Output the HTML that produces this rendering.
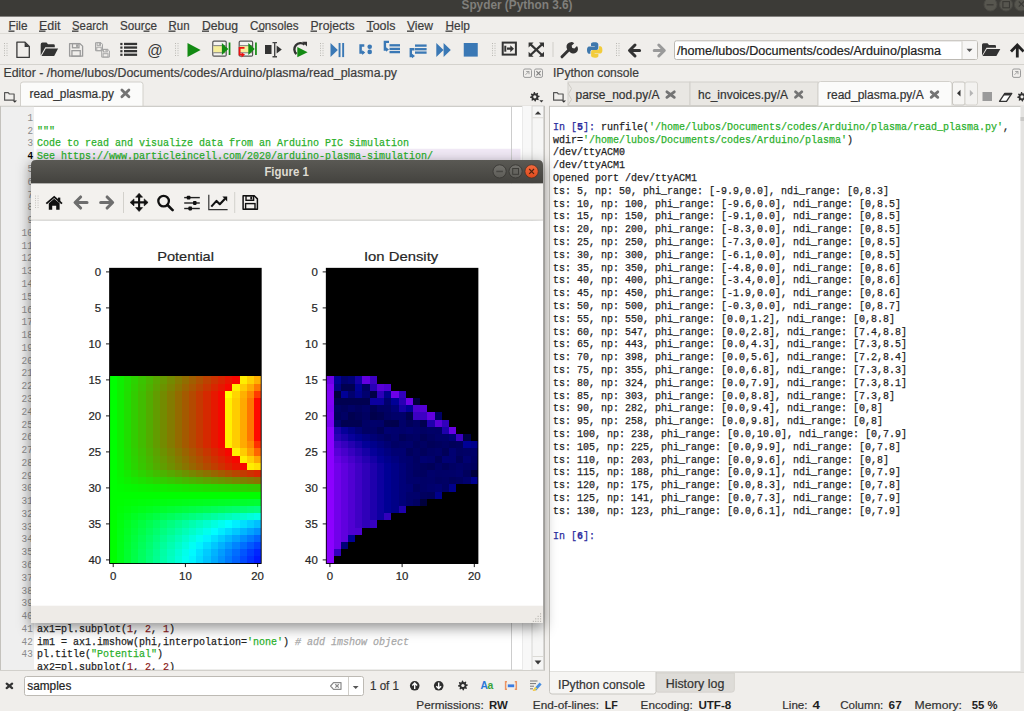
<!DOCTYPE html><html><head><meta charset="utf-8"><style>html,body{margin:0;padding:0;overflow:hidden;background:#f2f1f0}svg{display:block}text{font-family:"Liberation Sans",sans-serif;white-space:pre}</style></head><body><svg width="1024" height="711" viewBox="0 0 1024 711"><rect x="0" y="0" width="1024" height="711" fill="#f0eeeb" />
<rect x="0" y="0" width="1024" height="16.6" fill="#3c3b37" />
<text x="461.5" y="9" font-size="13" fill="#807f7b" font-weight="bold" textLength="111" lengthAdjust="spacingAndGlyphs" >Spyder (Python 3.6)</text>
<circle cx="990.5" cy="4.5" r="6.5" fill="#57564f" stroke="#4a4944" stroke-width="1"/>
<circle cx="1006" cy="4.5" r="6.5" fill="#57564f" stroke="#4a4944" stroke-width="1"/>
<circle cx="1021" cy="4.5" r="6.5" fill="#57564f" stroke="#4a4944" stroke-width="1"/>
<rect x="0" y="33" width="1024" height="1" fill="#dedcd7" />
<text x="8.5" y="29.6" font-size="12" fill="#3c3c3c" textLength="19.0" lengthAdjust="spacingAndGlyphs" stroke="#3c3c3c" stroke-width="0.2">File</text>
<text x="39" y="29.6" font-size="12" fill="#3c3c3c" textLength="21.5" lengthAdjust="spacingAndGlyphs" stroke="#3c3c3c" stroke-width="0.2">Edit</text>
<text x="72" y="29.6" font-size="12" fill="#3c3c3c" textLength="36" lengthAdjust="spacingAndGlyphs" stroke="#3c3c3c" stroke-width="0.2">Search</text>
<text x="120" y="29.6" font-size="12" fill="#3c3c3c" textLength="37" lengthAdjust="spacingAndGlyphs" stroke="#3c3c3c" stroke-width="0.2">Source</text>
<text x="168.5" y="29.6" font-size="12" fill="#3c3c3c" textLength="21.0" lengthAdjust="spacingAndGlyphs" stroke="#3c3c3c" stroke-width="0.2">Run</text>
<text x="202" y="29.6" font-size="12" fill="#3c3c3c" textLength="36" lengthAdjust="spacingAndGlyphs" stroke="#3c3c3c" stroke-width="0.2">Debug</text>
<text x="250" y="29.6" font-size="12" fill="#3c3c3c" textLength="48.5" lengthAdjust="spacingAndGlyphs" stroke="#3c3c3c" stroke-width="0.2">Consoles</text>
<text x="310.5" y="29.6" font-size="12" fill="#3c3c3c" textLength="44.0" lengthAdjust="spacingAndGlyphs" stroke="#3c3c3c" stroke-width="0.2">Projects</text>
<text x="366.5" y="29.6" font-size="12" fill="#3c3c3c" textLength="29.0" lengthAdjust="spacingAndGlyphs" stroke="#3c3c3c" stroke-width="0.2">Tools</text>
<text x="407" y="29.6" font-size="12" fill="#3c3c3c" textLength="26" lengthAdjust="spacingAndGlyphs" stroke="#3c3c3c" stroke-width="0.2">View</text>
<text x="445.5" y="29.6" font-size="12" fill="#3c3c3c" textLength="24.5" lengthAdjust="spacingAndGlyphs" stroke="#3c3c3c" stroke-width="0.2">Help</text>
<rect x="0" y="64" width="1024" height="1" fill="#d4d2cd" />
<rect x="4" y="43" width="1" height="1" fill="#bab8b3" />
<rect x="6.5" y="43" width="1" height="1" fill="#bab8b3" />
<rect x="4" y="45.4" width="1" height="1" fill="#bab8b3" />
<rect x="6.5" y="45.4" width="1" height="1" fill="#bab8b3" />
<rect x="4" y="47.8" width="1" height="1" fill="#bab8b3" />
<rect x="6.5" y="47.8" width="1" height="1" fill="#bab8b3" />
<rect x="4" y="50.199999999999996" width="1" height="1" fill="#bab8b3" />
<rect x="6.5" y="50.199999999999996" width="1" height="1" fill="#bab8b3" />
<rect x="4" y="52.599999999999994" width="1" height="1" fill="#bab8b3" />
<rect x="6.5" y="52.599999999999994" width="1" height="1" fill="#bab8b3" />
<rect x="4" y="54.99999999999999" width="1" height="1" fill="#bab8b3" />
<rect x="6.5" y="54.99999999999999" width="1" height="1" fill="#bab8b3" />
<path d="M16.9 42.2 H25 L29.3 46.5 V57.4 H16.9 Z" fill="none" stroke="#3a3a3a" stroke-width="1.3" stroke-linejoin="round"/>
<path d="M24.6 42.2 V46.9 H29.3 Z" fill="#3a3a3a"/>
<path d="M40.7 55.5 V44.5 Q40.7 42.6 42.5 42.6 H46.5 L48 44.2 H53.5 Q54.8 44.2 54.8 45.5 V47.3 H45.3 Z" fill="#333"/>
<path d="M41.5 55.9 L45.8 48.6 H58.1 L54.2 55.9 Z" fill="#333"/>
<path d="M69.6 43.6 H79.74 L82.6 46.120000000000005 V56.2 H69.6 Z" fill="none" stroke="#9b9b9b" stroke-width="1.3" stroke-linejoin="round"/>
<rect x="72.46" y="43.6" width="6.5" height="4.158" fill="none" stroke="#9b9b9b" stroke-width="1.3"/>
<rect x="76.1" y="44.356" width="1.8200000000000003" height="2.52" fill="#9b9b9b"/>
<rect x="71.94" y="50.656" width="8.32" height="5.544" fill="none" stroke="#9b9b9b" stroke-width="1.3"/>
<path d="M95.5 42.7 H100.96 L102.5 44.300000000000004 V50.7 H95.5 Z" fill="none" stroke="#a5a5a5" stroke-width="1" stroke-linejoin="round"/>
<rect x="97.04" y="42.7" width="3.5" height="2.64" fill="none" stroke="#a5a5a5" stroke-width="1"/>
<rect x="99.0" y="43.18" width="0.9800000000000001" height="1.6" fill="#a5a5a5"/>
<rect x="96.76" y="47.18000000000001" width="4.48" height="3.52" fill="none" stroke="#a5a5a5" stroke-width="1"/>
<path d="M101.7 49.4 H107.706 L109.4 50.94 V57.1 H101.7 Z" fill="none" stroke="#a5a5a5" stroke-width="1" stroke-linejoin="round"/>
<rect x="103.394" y="49.4" width="3.85" height="2.5410000000000004" fill="none" stroke="#a5a5a5" stroke-width="1"/>
<rect x="105.55" y="49.862" width="1.078" height="1.54" fill="#a5a5a5"/>
<rect x="103.086" y="53.711999999999996" width="4.928" height="3.388" fill="none" stroke="#a5a5a5" stroke-width="1"/>
<rect x="120.3" y="42.9" width="2.2" height="2.2" fill="#333" />
<rect x="124" y="42.8" width="13.1" height="2.3" fill="#333" />
<rect x="120.3" y="46.5" width="2.2" height="2.2" fill="#333" />
<rect x="124" y="46.4" width="13.1" height="2.3" fill="#333" />
<rect x="120.3" y="50.1" width="2.2" height="2.2" fill="#333" />
<rect x="124" y="50.0" width="13.1" height="2.3" fill="#333" />
<rect x="120.3" y="53.7" width="2.2" height="2.2" fill="#333" />
<rect x="124" y="53.6" width="13.1" height="2.3" fill="#333" />
<text x="147.2" y="55.5" font-size="17" fill="#3a3a3a" textLength="15.5" lengthAdjust="spacingAndGlyphs"  >@</text>
<rect x="175" y="43" width="1" height="1" fill="#bab8b3" />
<rect x="177.5" y="43" width="1" height="1" fill="#bab8b3" />
<rect x="175" y="45.4" width="1" height="1" fill="#bab8b3" />
<rect x="177.5" y="45.4" width="1" height="1" fill="#bab8b3" />
<rect x="175" y="47.8" width="1" height="1" fill="#bab8b3" />
<rect x="177.5" y="47.8" width="1" height="1" fill="#bab8b3" />
<rect x="175" y="50.199999999999996" width="1" height="1" fill="#bab8b3" />
<rect x="177.5" y="50.199999999999996" width="1" height="1" fill="#bab8b3" />
<rect x="175" y="52.599999999999994" width="1" height="1" fill="#bab8b3" />
<rect x="177.5" y="52.599999999999994" width="1" height="1" fill="#bab8b3" />
<rect x="175" y="54.99999999999999" width="1" height="1" fill="#bab8b3" />
<rect x="177.5" y="54.99999999999999" width="1" height="1" fill="#bab8b3" />
<path d="M187.5 43.1 L200.6 50 L187.5 56.9 Z" fill="#138a13"/>
<rect x="212.79999999999998" y="41.1" width="13.4" height="15" rx="1.2" fill="#f4f3f1" stroke="#555" stroke-width="1.2"/>
<rect x="213.39999999999998" y="46" width="12.2" height="6.4" fill="#f6ee9a" />
<rect x="213.39999999999998" y="45.3" width="12.2" height="0.8" fill="#666" />
<rect x="213.39999999999998" y="52.4" width="12.2" height="0.8" fill="#666" />
<path d="M221.9 43 L228.3 49 L221.9 55 Z" fill="#138a13"/>
<rect x="228.7" y="42.5" width="1.7" height="12.5" fill="#138a13" />
<rect x="239.2" y="41.1" width="13.4" height="15" rx="1.2" fill="#f4f3f1" stroke="#555" stroke-width="1.2"/>
<rect x="239.79999999999998" y="46" width="12.2" height="6.4" fill="#f6ee9a" />
<rect x="239.79999999999998" y="45.3" width="12.2" height="0.8" fill="#666" />
<rect x="239.79999999999998" y="52.4" width="12.2" height="0.8" fill="#666" />
<path d="M248.3 43 L254.7 49 L248.3 55 Z" fill="#138a13"/>
<rect x="255.1" y="42.5" width="1.7" height="12.5" fill="#138a13" />
<path d="M244.5 47.8 H239.6 V54.6 H242.3" fill="none" stroke="#ee1111" stroke-width="1.8"/>
<path d="M241.6 52.4 L245 54.6 L241.6 57.6 Z" fill="#ee1111"/>
<rect x="265" y="45" width="6.5" height="9" fill="#333" />
<path d="M272.5 42.6 H277 M274.7 42.6 V56.8 M272.5 56.8 H277" stroke="#444" stroke-width="1.4" fill="none"/>
<path d="M276.6 45.5 L281.8 49.5 L276.6 53.5 Z" fill="#333"/>
<path d="M304.6 44.6 A5.6 5.6 0 1 0 296.5 54" fill="none" stroke="#333" stroke-width="2.4"/>
<path d="M302.2 41.8 L307 41.8 L307 46.6 Z" fill="#333"/>
<path d="M297.3 47 L307.6 52.2 L297.3 57.3 Z" fill="#138a13"/>
<rect x="320" y="43" width="1" height="1" fill="#bab8b3" />
<rect x="322.5" y="43" width="1" height="1" fill="#bab8b3" />
<rect x="320" y="45.4" width="1" height="1" fill="#bab8b3" />
<rect x="322.5" y="45.4" width="1" height="1" fill="#bab8b3" />
<rect x="320" y="47.8" width="1" height="1" fill="#bab8b3" />
<rect x="322.5" y="47.8" width="1" height="1" fill="#bab8b3" />
<rect x="320" y="50.199999999999996" width="1" height="1" fill="#bab8b3" />
<rect x="322.5" y="50.199999999999996" width="1" height="1" fill="#bab8b3" />
<rect x="320" y="52.599999999999994" width="1" height="1" fill="#bab8b3" />
<rect x="322.5" y="52.599999999999994" width="1" height="1" fill="#bab8b3" />
<rect x="320" y="54.99999999999999" width="1" height="1" fill="#bab8b3" />
<rect x="322.5" y="54.99999999999999" width="1" height="1" fill="#bab8b3" />
<path d="M330.5 43 L337.8 50 L330.5 57.1 Z" fill="#3a78b5"/>
<rect x="338.6" y="43" width="1.9" height="14.1" fill="#3a78b5" />
<rect x="342.2" y="43" width="1.9" height="14.1" fill="#3a78b5" />
<path d="M364.3 45.4 H360.6 V52.4 H363.5" fill="none" stroke="#3a78b5" stroke-width="2.5"/>
<path d="M362.2 50.3 L365.2 52.6 L362.2 54.9 Z" fill="#3a78b5"/>
<circle cx="369.7" cy="46.7" r="2.3" fill="#3a78b5"/><circle cx="369.7" cy="51.9" r="2.3" fill="#3a78b5"/>
<path d="M389 41.9 H384.9 V49.5 H387" fill="none" stroke="#3a78b5" stroke-width="2.4"/>
<path d="M386 47.3 L389 49.5 L386 51.8 Z" fill="#3a78b5"/>
<rect x="389.5" y="44.15" width="10.5" height="2.3" fill="#3a78b5" />
<rect x="389.5" y="47.75" width="10.5" height="2.3" fill="#3a78b5" />
<rect x="389.5" y="50.95" width="10.5" height="2.3" fill="#3a78b5" />
<rect x="415" y="44.45" width="11.6" height="2.3" fill="#3a78b5" />
<rect x="415" y="48.050000000000004" width="11.6" height="2.3" fill="#3a78b5" />
<rect x="415" y="51.45" width="11.6" height="2.3" fill="#3a78b5" />
<path d="M414.5 49.2 H410.8 V56 H413" fill="none" stroke="#3a78b5" stroke-width="2.4"/>
<path d="M412 53.8 L415 56 L412 58.2 Z" fill="#3a78b5"/>
<path d="M436.3 43 L443.5 50 L436.3 57.1 Z M443.6 43 L450.8 50 L443.6 57.1 Z" fill="#3a78b5"/>
<rect x="463.75" y="43" width="14" height="13.6" fill="#3a78b5" />
<rect x="492" y="43" width="1" height="1" fill="#bab8b3" />
<rect x="494.5" y="43" width="1" height="1" fill="#bab8b3" />
<rect x="492" y="45.4" width="1" height="1" fill="#bab8b3" />
<rect x="494.5" y="45.4" width="1" height="1" fill="#bab8b3" />
<rect x="492" y="47.8" width="1" height="1" fill="#bab8b3" />
<rect x="494.5" y="47.8" width="1" height="1" fill="#bab8b3" />
<rect x="492" y="50.199999999999996" width="1" height="1" fill="#bab8b3" />
<rect x="494.5" y="50.199999999999996" width="1" height="1" fill="#bab8b3" />
<rect x="492" y="52.599999999999994" width="1" height="1" fill="#bab8b3" />
<rect x="494.5" y="52.599999999999994" width="1" height="1" fill="#bab8b3" />
<rect x="492" y="54.99999999999999" width="1" height="1" fill="#bab8b3" />
<rect x="494.5" y="54.99999999999999" width="1" height="1" fill="#bab8b3" />
<rect x="502.7" y="42.6" width="13.2" height="12" fill="none" stroke="#333" stroke-width="2"/>
<rect x="504.3" y="45.7" width="2" height="6" fill="#333" />
<path d="M507 47.6 H510.3 V45.2 L514 48.7 L510.3 52.2 V49.8 H507 Z" fill="#333"/>
<path d="M530.5 44.4 L542 55 M542 44.4 L530.5 55" stroke="#333" stroke-width="2.2"/>
<path d="M528.6 42.5 H533.6 L528.6 47.5 Z M544 42.5 V47.5 L539 42.5 Z M528.6 56.8 V51.8 L533.6 56.8 Z M544 56.8 H539 L544 51.8 Z" fill="#333"/>
<rect x="552.5" y="42" width="1" height="15" fill="#d0cec9" />
<path d="M562 56.8 L569.5 49.3" stroke="#333" stroke-width="3" stroke-linecap="round"/>
<path d="M568.2 50.5 A4.6 4.6 0 0 1 574.2 43.2 L571.6 45.8 L572.3 47.9 L574.4 48.6 L577 46 A4.6 4.6 0 0 1 569.6 51.8 Z" fill="#333"/>
<path d="M594.6 42.3 C590.8 42.3 591 44 591 44 V46 H594.8 V46.6 H589.4 C589.4 46.6 587 46.3 587 50.1 C587 53.9 589.1 53.8 589.1 53.8 H590.4 V52 C590.4 52 590.3 49.9 592.5 49.9 H596.2 C596.2 49.9 598.3 49.9 598.3 47.9 V44.5 C598.3 44.5 598.6 42.3 594.6 42.3 Z" fill="#3f78ad"/>
<path d="M594.8 57.7 C598.6 57.7 598.4 56 598.4 56 V54 H594.6 V53.4 H600 C600 53.4 602.4 53.7 602.4 49.9 C602.4 46.1 600.3 46.2 600.3 46.2 H599 V48 C599 48 599.1 50.1 596.9 50.1 H593.2 C593.2 50.1 591.1 50.1 591.1 52.1 V55.5 C591.1 55.5 590.8 57.7 594.8 57.7 Z" fill="#f2cc3c"/>
<rect x="616" y="43" width="1" height="1" fill="#bab8b3" />
<rect x="618.5" y="43" width="1" height="1" fill="#bab8b3" />
<rect x="616" y="45.4" width="1" height="1" fill="#bab8b3" />
<rect x="618.5" y="45.4" width="1" height="1" fill="#bab8b3" />
<rect x="616" y="47.8" width="1" height="1" fill="#bab8b3" />
<rect x="618.5" y="47.8" width="1" height="1" fill="#bab8b3" />
<rect x="616" y="50.199999999999996" width="1" height="1" fill="#bab8b3" />
<rect x="618.5" y="50.199999999999996" width="1" height="1" fill="#bab8b3" />
<rect x="616" y="52.599999999999994" width="1" height="1" fill="#bab8b3" />
<rect x="618.5" y="52.599999999999994" width="1" height="1" fill="#bab8b3" />
<rect x="616" y="54.99999999999999" width="1" height="1" fill="#bab8b3" />
<rect x="618.5" y="54.99999999999999" width="1" height="1" fill="#bab8b3" />
<path d="M639.6 50.5 H630.5 M635 45 L629.5 50.5 L635 56" fill="none" stroke="#333" stroke-width="3" stroke-linecap="round" stroke-linejoin="round"/>
<path d="M654.2 50.5 H663.3 M658.8 45 L664.3 50.5 L658.8 56" fill="none" stroke="#9a9a9a" stroke-width="3" stroke-linecap="round" stroke-linejoin="round"/>
<rect x="674.5" y="40.8" width="303" height="18.7" rx="2" fill="#ffffff" stroke="#bcb9b3" stroke-width="1"/>
<rect x="962" y="41.3" width="15" height="17.7" fill="#f7f6f5"/>
<line x1="962" y1="41.3" x2="962" y2="59" stroke="#cfcdc8"/>
<path d="M966.5 48.7 H972.5 L969.5 52 Z" fill="#555"/>
<text x="677" y="55.2" font-size="12" fill="#222222" textLength="264" lengthAdjust="spacingAndGlyphs" stroke="#222222" stroke-width="0.2">/home/lubos/Documents/codes/Arduino/plasma</text>
<path d="M982 55.5 V44.8 Q982 43.3 983.5 43.3 H987.5 L989 44.9 H994.8 Q996 44.9 996 46.1 V47.8 H986.5 Z" fill="#333"/>
<path d="M982.6 56 L986.8 49 H1000.3 L996.4 56 Z" fill="#333"/>
<path d="M1017.3 57.5 V46 M1011 51.5 L1017.3 45 L1023.6 51.5" fill="none" stroke="#222" stroke-width="2.8"/>
<text x="3.5" y="77.2" font-size="12" fill="#3c3c3c" textLength="393.5" lengthAdjust="spacingAndGlyphs" stroke="#3c3c3c" stroke-width="0.2">Editor - /home/lubos/Documents/codes/Arduino/plasma/read_plasma.py</text>
<text x="553" y="77.2" font-size="12" fill="#3c3c3c" textLength="86" lengthAdjust="spacingAndGlyphs" stroke="#3c3c3c" stroke-width="0.2">IPython console</text>
<path d="M20.5 106.3 V84.5 Q20.5 82 23 82 H140.5 Q143 82 143 84.5 V106.3" fill="#fbfbfa" stroke="#d2d0cb" stroke-width="1"/>
<text x="29.5" y="98" font-size="12" fill="#333333" textLength="84.5" lengthAdjust="spacingAndGlyphs" stroke="#333333" stroke-width="0.2">read_plasma.py</text>
<rect x="0.5" y="106.3" width="544" height="563.9" fill="#ffffff" stroke="#c4c2bd" stroke-width="1"/>
<rect x="1" y="106.8" width="33" height="563" fill="#efefef" />
<rect x="36.5" y="148.8" width="484" height="12.4" fill="#f1e9f6" />
<rect x="511" y="106" width="1" height="564" fill="#cdcdcd" />
<rect x="522.2" y="106" width="9.8" height="564" fill="#f8f8f8" />
<rect x="522.2" y="106" width="0.8" height="564" fill="#e6e6e6" />
<rect x="532" y="106" width="11.5" height="564" fill="#f6f6f5" stroke="#d0cfcc" stroke-width="0.8"/>
<text x="27.6" y="120.9" font-size="11" fill="#8b8b8b" style="font-family:'Liberation Mono'" textLength="5.6" lengthAdjust="spacingAndGlyphs" >1</text>
<text x="27.6" y="133.675" font-size="11" fill="#8b8b8b" style="font-family:'Liberation Mono'" textLength="5.6" lengthAdjust="spacingAndGlyphs" >2</text>
<text x="37" y="133.675" font-size="11" fill="#2bb02b" style="font-family:'Liberation Mono'" textLength="18" lengthAdjust="spacingAndGlyphs" stroke="#2bb02b" stroke-width="0.25">"""</text>
<text x="27.6" y="146.45000000000002" font-size="11" fill="#8b8b8b" style="font-family:'Liberation Mono'" textLength="5.6" lengthAdjust="spacingAndGlyphs" >3</text>
<text x="37" y="146.45000000000002" font-size="11" fill="#2bb02b" style="font-family:'Liberation Mono'" textLength="372" lengthAdjust="spacingAndGlyphs" stroke="#2bb02b" stroke-width="0.25">Code to read and visualize data from an Arduino PIC simulation</text>
<text x="27.6" y="159.22500000000002" font-size="11" fill="#000000" style="font-family:'Liberation Mono'" font-weight="bold" textLength="5.6" lengthAdjust="spacingAndGlyphs" >4</text>
<text x="37" y="159.22500000000002" font-size="11" fill="#2bb02b" style="font-family:'Liberation Mono'" textLength="60" lengthAdjust="spacingAndGlyphs" stroke="#2bb02b" stroke-width="0.25">See https:</text>
<text x="97" y="159.22500000000002" font-size="11" fill="#2bb02b" style="font-family:'Liberation Mono'" textLength="336" lengthAdjust="spacingAndGlyphs" stroke="#2bb02b" stroke-width="0.25">//www.particleincell.com/2020/arduino-plasma-simulation/</text>
<text x="27.6" y="172.0" font-size="11" fill="#8b8b8b" style="font-family:'Liberation Mono'" textLength="5.6" lengthAdjust="spacingAndGlyphs" >5</text>
<text x="27.6" y="184.775" font-size="11" fill="#8b8b8b" style="font-family:'Liberation Mono'" textLength="5.6" lengthAdjust="spacingAndGlyphs" >6</text>
<text x="27.6" y="197.55" font-size="11" fill="#8b8b8b" style="font-family:'Liberation Mono'" textLength="5.6" lengthAdjust="spacingAndGlyphs" >7</text>
<text x="27.6" y="210.325" font-size="11" fill="#8b8b8b" style="font-family:'Liberation Mono'" textLength="5.6" lengthAdjust="spacingAndGlyphs" >8</text>
<text x="27.6" y="223.10000000000002" font-size="11" fill="#8b8b8b" style="font-family:'Liberation Mono'" textLength="5.6" lengthAdjust="spacingAndGlyphs" >9</text>
<text x="21.6" y="235.875" font-size="11" fill="#8b8b8b" style="font-family:'Liberation Mono'" textLength="11.2" lengthAdjust="spacingAndGlyphs" >10</text>
<text x="21.6" y="248.65" font-size="11" fill="#8b8b8b" style="font-family:'Liberation Mono'" textLength="11.2" lengthAdjust="spacingAndGlyphs" >11</text>
<text x="21.6" y="261.425" font-size="11" fill="#8b8b8b" style="font-family:'Liberation Mono'" textLength="11.2" lengthAdjust="spacingAndGlyphs" >12</text>
<text x="21.6" y="274.20000000000005" font-size="11" fill="#8b8b8b" style="font-family:'Liberation Mono'" textLength="11.2" lengthAdjust="spacingAndGlyphs" >13</text>
<text x="21.6" y="286.975" font-size="11" fill="#8b8b8b" style="font-family:'Liberation Mono'" textLength="11.2" lengthAdjust="spacingAndGlyphs" >14</text>
<text x="21.6" y="299.75" font-size="11" fill="#8b8b8b" style="font-family:'Liberation Mono'" textLength="11.2" lengthAdjust="spacingAndGlyphs" >15</text>
<text x="21.6" y="312.525" font-size="11" fill="#8b8b8b" style="font-family:'Liberation Mono'" textLength="11.2" lengthAdjust="spacingAndGlyphs" >16</text>
<text x="21.6" y="325.3" font-size="11" fill="#8b8b8b" style="font-family:'Liberation Mono'" textLength="11.2" lengthAdjust="spacingAndGlyphs" >17</text>
<text x="21.6" y="338.07500000000005" font-size="11" fill="#8b8b8b" style="font-family:'Liberation Mono'" textLength="11.2" lengthAdjust="spacingAndGlyphs" >18</text>
<text x="21.6" y="350.85" font-size="11" fill="#8b8b8b" style="font-family:'Liberation Mono'" textLength="11.2" lengthAdjust="spacingAndGlyphs" >19</text>
<text x="21.6" y="363.625" font-size="11" fill="#8b8b8b" style="font-family:'Liberation Mono'" textLength="11.2" lengthAdjust="spacingAndGlyphs" >20</text>
<text x="21.6" y="376.4" font-size="11" fill="#8b8b8b" style="font-family:'Liberation Mono'" textLength="11.2" lengthAdjust="spacingAndGlyphs" >21</text>
<text x="21.6" y="389.17500000000007" font-size="11" fill="#8b8b8b" style="font-family:'Liberation Mono'" textLength="11.2" lengthAdjust="spacingAndGlyphs" >22</text>
<text x="21.6" y="401.95000000000005" font-size="11" fill="#8b8b8b" style="font-family:'Liberation Mono'" textLength="11.2" lengthAdjust="spacingAndGlyphs" >23</text>
<text x="21.6" y="414.725" font-size="11" fill="#8b8b8b" style="font-family:'Liberation Mono'" textLength="11.2" lengthAdjust="spacingAndGlyphs" >24</text>
<text x="21.6" y="427.5" font-size="11" fill="#8b8b8b" style="font-family:'Liberation Mono'" textLength="11.2" lengthAdjust="spacingAndGlyphs" >25</text>
<text x="21.6" y="440.275" font-size="11" fill="#8b8b8b" style="font-family:'Liberation Mono'" textLength="11.2" lengthAdjust="spacingAndGlyphs" >26</text>
<text x="21.6" y="453.05000000000007" font-size="11" fill="#8b8b8b" style="font-family:'Liberation Mono'" textLength="11.2" lengthAdjust="spacingAndGlyphs" >27</text>
<text x="21.6" y="465.82500000000005" font-size="11" fill="#8b8b8b" style="font-family:'Liberation Mono'" textLength="11.2" lengthAdjust="spacingAndGlyphs" >28</text>
<text x="21.6" y="478.6" font-size="11" fill="#8b8b8b" style="font-family:'Liberation Mono'" textLength="11.2" lengthAdjust="spacingAndGlyphs" >29</text>
<text x="21.6" y="491.375" font-size="11" fill="#8b8b8b" style="font-family:'Liberation Mono'" textLength="11.2" lengthAdjust="spacingAndGlyphs" >30</text>
<text x="21.6" y="504.15" font-size="11" fill="#8b8b8b" style="font-family:'Liberation Mono'" textLength="11.2" lengthAdjust="spacingAndGlyphs" >31</text>
<text x="21.6" y="516.9250000000001" font-size="11" fill="#8b8b8b" style="font-family:'Liberation Mono'" textLength="11.2" lengthAdjust="spacingAndGlyphs" >32</text>
<text x="21.6" y="529.7" font-size="11" fill="#8b8b8b" style="font-family:'Liberation Mono'" textLength="11.2" lengthAdjust="spacingAndGlyphs" >33</text>
<text x="21.6" y="542.475" font-size="11" fill="#8b8b8b" style="font-family:'Liberation Mono'" textLength="11.2" lengthAdjust="spacingAndGlyphs" >34</text>
<text x="21.6" y="555.25" font-size="11" fill="#8b8b8b" style="font-family:'Liberation Mono'" textLength="11.2" lengthAdjust="spacingAndGlyphs" >35</text>
<text x="21.6" y="568.025" font-size="11" fill="#8b8b8b" style="font-family:'Liberation Mono'" textLength="11.2" lengthAdjust="spacingAndGlyphs" >36</text>
<text x="21.6" y="580.8000000000001" font-size="11" fill="#8b8b8b" style="font-family:'Liberation Mono'" textLength="11.2" lengthAdjust="spacingAndGlyphs" >37</text>
<text x="21.6" y="593.575" font-size="11" fill="#8b8b8b" style="font-family:'Liberation Mono'" textLength="11.2" lengthAdjust="spacingAndGlyphs" >38</text>
<text x="21.6" y="606.35" font-size="11" fill="#8b8b8b" style="font-family:'Liberation Mono'" textLength="11.2" lengthAdjust="spacingAndGlyphs" >39</text>
<text x="21.6" y="619.125" font-size="11" fill="#8b8b8b" style="font-family:'Liberation Mono'" textLength="11.2" lengthAdjust="spacingAndGlyphs" >40</text>
<text x="21.6" y="631.9" font-size="11" fill="#8b8b8b" style="font-family:'Liberation Mono'" textLength="11.2" lengthAdjust="spacingAndGlyphs" >41</text>
<text x="37" y="631.9" font-size="11" fill="#222222" style="font-family:'Liberation Mono'" textLength="90" lengthAdjust="spacingAndGlyphs" stroke="#222222" stroke-width="0.25">ax1=pl.subplot(</text>
<text x="127" y="631.9" font-size="11" fill="#8b1a1a" style="font-family:'Liberation Mono'" textLength="6" lengthAdjust="spacingAndGlyphs" stroke="#8b1a1a" stroke-width="0.25">1</text>
<text x="133" y="631.9" font-size="11" fill="#222222" style="font-family:'Liberation Mono'" textLength="12" lengthAdjust="spacingAndGlyphs" stroke="#222222" stroke-width="0.25">, </text>
<text x="145" y="631.9" font-size="11" fill="#8b1a1a" style="font-family:'Liberation Mono'" textLength="6" lengthAdjust="spacingAndGlyphs" stroke="#8b1a1a" stroke-width="0.25">2</text>
<text x="151" y="631.9" font-size="11" fill="#222222" style="font-family:'Liberation Mono'" textLength="12" lengthAdjust="spacingAndGlyphs" stroke="#222222" stroke-width="0.25">, </text>
<text x="163" y="631.9" font-size="11" fill="#8b1a1a" style="font-family:'Liberation Mono'" textLength="6" lengthAdjust="spacingAndGlyphs" stroke="#8b1a1a" stroke-width="0.25">1</text>
<text x="169" y="631.9" font-size="11" fill="#222222" style="font-family:'Liberation Mono'" textLength="6" lengthAdjust="spacingAndGlyphs" stroke="#222222" stroke-width="0.25">)</text>
<text x="21.6" y="644.675" font-size="11" fill="#8b8b8b" style="font-family:'Liberation Mono'" textLength="11.2" lengthAdjust="spacingAndGlyphs" >42</text>
<text x="37" y="644.675" font-size="11" fill="#222222" style="font-family:'Liberation Mono'" textLength="210" lengthAdjust="spacingAndGlyphs" stroke="#222222" stroke-width="0.25">im1 = ax1.imshow(phi,interpolation=</text>
<text x="247" y="644.675" font-size="11" fill="#2bb02b" style="font-family:'Liberation Mono'" textLength="36" lengthAdjust="spacingAndGlyphs" stroke="#2bb02b" stroke-width="0.25">'none'</text>
<text x="283" y="644.675" font-size="11" fill="#222222" style="font-family:'Liberation Mono'" textLength="12" lengthAdjust="spacingAndGlyphs" stroke="#222222" stroke-width="0.25">) </text>
<text x="295" y="644.675" font-size="11" fill="#a8a8a8" style="font-family:'Liberation Mono'" font-style="italic" textLength="114" lengthAdjust="spacingAndGlyphs" stroke="#a8a8a8" stroke-width="0.25"># add imshow object</text>
<text x="21.6" y="657.45" font-size="11" fill="#8b8b8b" style="font-family:'Liberation Mono'" textLength="11.2" lengthAdjust="spacingAndGlyphs" >43</text>
<text x="37" y="657.45" font-size="11" fill="#222222" style="font-family:'Liberation Mono'" textLength="54" lengthAdjust="spacingAndGlyphs" stroke="#222222" stroke-width="0.25">pl.title(</text>
<text x="91" y="657.45" font-size="11" fill="#2bb02b" style="font-family:'Liberation Mono'" textLength="66" lengthAdjust="spacingAndGlyphs" stroke="#2bb02b" stroke-width="0.25">"Potential"</text>
<text x="157" y="657.45" font-size="11" fill="#222222" style="font-family:'Liberation Mono'" textLength="6" lengthAdjust="spacingAndGlyphs" stroke="#222222" stroke-width="0.25">)</text>
<clipPath id="edclip"><rect x="0" y="106" width="544" height="564"/></clipPath>
<g clip-path="url(#edclip)">
<text x="37" y="670.225" font-size="11" fill="#222222" style="font-family:'Liberation Mono'" textLength="90" lengthAdjust="spacingAndGlyphs" stroke="#222222" stroke-width="0.25">ax2=pl.subplot(</text>
<text x="127" y="670.225" font-size="11" fill="#8b1a1a" style="font-family:'Liberation Mono'" textLength="6" lengthAdjust="spacingAndGlyphs" stroke="#8b1a1a" stroke-width="0.25">1</text>
<text x="133" y="670.225" font-size="11" fill="#222222" style="font-family:'Liberation Mono'" textLength="12" lengthAdjust="spacingAndGlyphs" stroke="#222222" stroke-width="0.25">, </text>
<text x="145" y="670.225" font-size="11" fill="#8b1a1a" style="font-family:'Liberation Mono'" textLength="6" lengthAdjust="spacingAndGlyphs" stroke="#8b1a1a" stroke-width="0.25">2</text>
<text x="151" y="670.225" font-size="11" fill="#222222" style="font-family:'Liberation Mono'" textLength="12" lengthAdjust="spacingAndGlyphs" stroke="#222222" stroke-width="0.25">, </text>
<text x="163" y="670.225" font-size="11" fill="#8b1a1a" style="font-family:'Liberation Mono'" textLength="6" lengthAdjust="spacingAndGlyphs" stroke="#8b1a1a" stroke-width="0.25">2</text>
<text x="169" y="670.225" font-size="11" fill="#222222" style="font-family:'Liberation Mono'" textLength="6" lengthAdjust="spacingAndGlyphs" stroke="#222222" stroke-width="0.25">)</text>
</g>
<text x="553" y="77.2" font-size="12" fill="#3c3c3c" stroke="#3c3c3c" stroke-width="0.2"></text>
<rect x="568" y="82" width="122" height="23.5" fill="#e9e7e3" stroke="#d2d0cb" stroke-width="1"/>
<rect x="690" y="82" width="128" height="23.5" fill="#e9e7e3" stroke="#d2d0cb" stroke-width="1"/>
<path d="M818 105.5 V84 Q818 81.5 820.5 81.5 H949.5 Q952 81.5 952 84 V105.5" fill="#fbfbfa" stroke="#d2d0cb" stroke-width="1"/>
<text x="575.5" y="98.5" font-size="12" fill="#333333" textLength="84" lengthAdjust="spacingAndGlyphs" stroke="#333333" stroke-width="0.2">parse_nod.py/A</text>
<text x="698" y="98.5" font-size="12" fill="#333333" textLength="90" lengthAdjust="spacingAndGlyphs" stroke="#333333" stroke-width="0.2">hc_invoices.py/A</text>
<text x="827" y="98.5" font-size="12" fill="#333333" textLength="96.7" lengthAdjust="spacingAndGlyphs" stroke="#333333" stroke-width="0.2">read_plasma.py/A</text>
<rect x="549.5" y="106.3" width="474" height="565.7" fill="#ffffff" stroke="#c4c2bd" stroke-width="1"/>
<text x="553" y="129.8" font-size="11" fill="#2b2b9e" style="font-family:'Liberation Mono'" textLength="24" lengthAdjust="spacingAndGlyphs" stroke="#2b2b9e" stroke-width="0.25">In [</text>
<text x="577" y="129.8" font-size="11" fill="#2b2b9e" style="font-family:'Liberation Mono'" font-weight="bold" textLength="6" lengthAdjust="spacingAndGlyphs" stroke="#2b2b9e" stroke-width="0.25">5</text>
<text x="583" y="129.8" font-size="11" fill="#2b2b9e" style="font-family:'Liberation Mono'" textLength="18" lengthAdjust="spacingAndGlyphs" stroke="#2b2b9e" stroke-width="0.25">]: </text>
<text x="601" y="129.8" font-size="11" fill="#1e1e1e" style="font-family:'Liberation Mono'" textLength="48" lengthAdjust="spacingAndGlyphs" stroke="#1e1e1e" stroke-width="0.25">runfile(</text>
<text x="649" y="129.8" font-size="11" fill="#2bb02b" style="font-family:'Liberation Mono'" textLength="354" lengthAdjust="spacingAndGlyphs" stroke="#2bb02b" stroke-width="0.25">'/home/lubos/Documents/codes/Arduino/plasma/read_plasma.py'</text>
<text x="1003" y="129.8" font-size="11" fill="#1e1e1e" style="font-family:'Liberation Mono'" textLength="6" lengthAdjust="spacingAndGlyphs" stroke="#1e1e1e" stroke-width="0.25">,</text>
<text x="553" y="142.60000000000002" font-size="11" fill="#1e1e1e" style="font-family:'Liberation Mono'" textLength="30" lengthAdjust="spacingAndGlyphs" stroke="#1e1e1e" stroke-width="0.25">wdir=</text>
<text x="583" y="142.60000000000002" font-size="11" fill="#2bb02b" style="font-family:'Liberation Mono'" textLength="264" lengthAdjust="spacingAndGlyphs" stroke="#2bb02b" stroke-width="0.25">'/home/lubos/Documents/codes/Arduino/plasma'</text>
<text x="847" y="142.60000000000002" font-size="11" fill="#1e1e1e" style="font-family:'Liberation Mono'" textLength="6" lengthAdjust="spacingAndGlyphs" stroke="#1e1e1e" stroke-width="0.25">)</text>
<text x="553" y="155.4" font-size="11" fill="#1e1e1e" style="font-family:'Liberation Mono'" textLength="72" lengthAdjust="spacingAndGlyphs" stroke="#1e1e1e" stroke-width="0.25">/dev/ttyACM0</text>
<text x="553" y="168.20000000000002" font-size="11" fill="#1e1e1e" style="font-family:'Liberation Mono'" textLength="72" lengthAdjust="spacingAndGlyphs" stroke="#1e1e1e" stroke-width="0.25">/dev/ttyACM1</text>
<text x="553" y="181.0" font-size="11" fill="#1e1e1e" style="font-family:'Liberation Mono'" textLength="144" lengthAdjust="spacingAndGlyphs" stroke="#1e1e1e" stroke-width="0.25">Opened port /dev/ttyACM1</text>
<text x="553" y="193.8" font-size="11" fill="#1e1e1e" style="font-family:'Liberation Mono'" textLength="336" lengthAdjust="spacingAndGlyphs" stroke="#1e1e1e" stroke-width="0.25">ts: 5, np: 50, phi_range: [-9.9,0.0], ndi_range: [0,8.3]</text>
<text x="553" y="206.60000000000002" font-size="11" fill="#1e1e1e" style="font-family:'Liberation Mono'" textLength="348" lengthAdjust="spacingAndGlyphs" stroke="#1e1e1e" stroke-width="0.25">ts: 10, np: 100, phi_range: [-9.6,0.0], ndi_range: [0,8.5]</text>
<text x="553" y="219.40000000000003" font-size="11" fill="#1e1e1e" style="font-family:'Liberation Mono'" textLength="348" lengthAdjust="spacingAndGlyphs" stroke="#1e1e1e" stroke-width="0.25">ts: 15, np: 150, phi_range: [-9.1,0.0], ndi_range: [0,8.5]</text>
<text x="553" y="232.20000000000002" font-size="11" fill="#1e1e1e" style="font-family:'Liberation Mono'" textLength="348" lengthAdjust="spacingAndGlyphs" stroke="#1e1e1e" stroke-width="0.25">ts: 20, np: 200, phi_range: [-8.3,0.0], ndi_range: [0,8.5]</text>
<text x="553" y="245.0" font-size="11" fill="#1e1e1e" style="font-family:'Liberation Mono'" textLength="348" lengthAdjust="spacingAndGlyphs" stroke="#1e1e1e" stroke-width="0.25">ts: 25, np: 250, phi_range: [-7.3,0.0], ndi_range: [0,8.5]</text>
<text x="553" y="257.8" font-size="11" fill="#1e1e1e" style="font-family:'Liberation Mono'" textLength="348" lengthAdjust="spacingAndGlyphs" stroke="#1e1e1e" stroke-width="0.25">ts: 30, np: 300, phi_range: [-6.1,0.0], ndi_range: [0,8.5]</text>
<text x="553" y="270.6" font-size="11" fill="#1e1e1e" style="font-family:'Liberation Mono'" textLength="348" lengthAdjust="spacingAndGlyphs" stroke="#1e1e1e" stroke-width="0.25">ts: 35, np: 350, phi_range: [-4.8,0.0], ndi_range: [0,8.6]</text>
<text x="553" y="283.40000000000003" font-size="11" fill="#1e1e1e" style="font-family:'Liberation Mono'" textLength="348" lengthAdjust="spacingAndGlyphs" stroke="#1e1e1e" stroke-width="0.25">ts: 40, np: 400, phi_range: [-3.4,0.0], ndi_range: [0,8.6]</text>
<text x="553" y="296.20000000000005" font-size="11" fill="#1e1e1e" style="font-family:'Liberation Mono'" textLength="348" lengthAdjust="spacingAndGlyphs" stroke="#1e1e1e" stroke-width="0.25">ts: 45, np: 450, phi_range: [-1.9,0.0], ndi_range: [0,8.6]</text>
<text x="553" y="309.0" font-size="11" fill="#1e1e1e" style="font-family:'Liberation Mono'" textLength="348" lengthAdjust="spacingAndGlyphs" stroke="#1e1e1e" stroke-width="0.25">ts: 50, np: 500, phi_range: [-0.3,0.0], ndi_range: [0,8.7]</text>
<text x="553" y="321.8" font-size="11" fill="#1e1e1e" style="font-family:'Liberation Mono'" textLength="342" lengthAdjust="spacingAndGlyphs" stroke="#1e1e1e" stroke-width="0.25">ts: 55, np: 550, phi_range: [0.0,1.2], ndi_range: [0,8.8]</text>
<text x="553" y="334.6" font-size="11" fill="#1e1e1e" style="font-family:'Liberation Mono'" textLength="354" lengthAdjust="spacingAndGlyphs" stroke="#1e1e1e" stroke-width="0.25">ts: 60, np: 547, phi_range: [0.0,2.8], ndi_range: [7.4,8.8]</text>
<text x="553" y="347.40000000000003" font-size="11" fill="#1e1e1e" style="font-family:'Liberation Mono'" textLength="354" lengthAdjust="spacingAndGlyphs" stroke="#1e1e1e" stroke-width="0.25">ts: 65, np: 443, phi_range: [0.0,4.3], ndi_range: [7.3,8.5]</text>
<text x="553" y="360.20000000000005" font-size="11" fill="#1e1e1e" style="font-family:'Liberation Mono'" textLength="354" lengthAdjust="spacingAndGlyphs" stroke="#1e1e1e" stroke-width="0.25">ts: 70, np: 398, phi_range: [0.0,5.6], ndi_range: [7.2,8.4]</text>
<text x="553" y="373.0" font-size="11" fill="#1e1e1e" style="font-family:'Liberation Mono'" textLength="354" lengthAdjust="spacingAndGlyphs" stroke="#1e1e1e" stroke-width="0.25">ts: 75, np: 355, phi_range: [0.0,6.8], ndi_range: [7.3,8.3]</text>
<text x="553" y="385.8" font-size="11" fill="#1e1e1e" style="font-family:'Liberation Mono'" textLength="354" lengthAdjust="spacingAndGlyphs" stroke="#1e1e1e" stroke-width="0.25">ts: 80, np: 324, phi_range: [0.0,7.9], ndi_range: [7.3,8.1]</text>
<text x="553" y="398.6" font-size="11" fill="#1e1e1e" style="font-family:'Liberation Mono'" textLength="342" lengthAdjust="spacingAndGlyphs" stroke="#1e1e1e" stroke-width="0.25">ts: 85, np: 303, phi_range: [0.0,8.8], ndi_range: [7.3,8]</text>
<text x="553" y="411.40000000000003" font-size="11" fill="#1e1e1e" style="font-family:'Liberation Mono'" textLength="330" lengthAdjust="spacingAndGlyphs" stroke="#1e1e1e" stroke-width="0.25">ts: 90, np: 282, phi_range: [0.0,9.4], ndi_range: [0,8]</text>
<text x="553" y="424.20000000000005" font-size="11" fill="#1e1e1e" style="font-family:'Liberation Mono'" textLength="330" lengthAdjust="spacingAndGlyphs" stroke="#1e1e1e" stroke-width="0.25">ts: 95, np: 258, phi_range: [0.0,9.8], ndi_range: [0,8]</text>
<text x="553" y="437.00000000000006" font-size="11" fill="#1e1e1e" style="font-family:'Liberation Mono'" textLength="354" lengthAdjust="spacingAndGlyphs" stroke="#1e1e1e" stroke-width="0.25">ts: 100, np: 238, phi_range: [0.0,10.0], ndi_range: [0,7.9]</text>
<text x="553" y="449.8" font-size="11" fill="#1e1e1e" style="font-family:'Liberation Mono'" textLength="348" lengthAdjust="spacingAndGlyphs" stroke="#1e1e1e" stroke-width="0.25">ts: 105, np: 225, phi_range: [0.0,9.9], ndi_range: [0,7.8]</text>
<text x="553" y="462.6" font-size="11" fill="#1e1e1e" style="font-family:'Liberation Mono'" textLength="336" lengthAdjust="spacingAndGlyphs" stroke="#1e1e1e" stroke-width="0.25">ts: 110, np: 203, phi_range: [0.0,9.6], ndi_range: [0,8]</text>
<text x="553" y="475.40000000000003" font-size="11" fill="#1e1e1e" style="font-family:'Liberation Mono'" textLength="348" lengthAdjust="spacingAndGlyphs" stroke="#1e1e1e" stroke-width="0.25">ts: 115, np: 188, phi_range: [0.0,9.1], ndi_range: [0,7.9]</text>
<text x="553" y="488.20000000000005" font-size="11" fill="#1e1e1e" style="font-family:'Liberation Mono'" textLength="348" lengthAdjust="spacingAndGlyphs" stroke="#1e1e1e" stroke-width="0.25">ts: 120, np: 175, phi_range: [0.0,8.3], ndi_range: [0,7.8]</text>
<text x="553" y="501.00000000000006" font-size="11" fill="#1e1e1e" style="font-family:'Liberation Mono'" textLength="348" lengthAdjust="spacingAndGlyphs" stroke="#1e1e1e" stroke-width="0.25">ts: 125, np: 141, phi_range: [0.0,7.3], ndi_range: [0,7.9]</text>
<text x="553" y="513.8" font-size="11" fill="#1e1e1e" style="font-family:'Liberation Mono'" textLength="348" lengthAdjust="spacingAndGlyphs" stroke="#1e1e1e" stroke-width="0.25">ts: 130, np: 123, phi_range: [0.0,6.1], ndi_range: [0,7.9]</text>
<text x="553" y="539.4000000000001" font-size="11" fill="#2b2b9e" style="font-family:'Liberation Mono'" textLength="24" lengthAdjust="spacingAndGlyphs" stroke="#2b2b9e" stroke-width="0.25">In [</text>
<text x="577" y="539.4000000000001" font-size="11" fill="#2b2b9e" style="font-family:'Liberation Mono'" font-weight="bold" textLength="6" lengthAdjust="spacingAndGlyphs" stroke="#2b2b9e" stroke-width="0.25">6</text>
<text x="583" y="539.4000000000001" font-size="11" fill="#2b2b9e" style="font-family:'Liberation Mono'" textLength="12" lengthAdjust="spacingAndGlyphs" stroke="#2b2b9e" stroke-width="0.25">]:</text>
<rect x="1020.5" y="106" width="3.5" height="566" fill="#e4e3e1" />
<rect x="1020.5" y="117" width="3.5" height="4" fill="#c9c8c6" />
<path d="M655.5 673 V689.5 Q655.5 692.2 658 692.2 H731.5 Q734.4 692.2 734.4 689.5 V673 Z" fill="#dedcd8" stroke="#d3d1cc" stroke-width="0.8"/>
<path d="M549.5 672 V691.5 Q549.5 694 552 694 H653.5 Q656 694 656 691.5 V672" fill="#f6f5f3" stroke="#c8c6c1" stroke-width="1"/>
<text x="558" y="688.5" font-size="12" fill="#333333" textLength="87" lengthAdjust="spacingAndGlyphs" stroke="#333333" stroke-width="0.2">IPython console</text>
<text x="665.7" y="688" font-size="12" fill="#333333" textLength="58.6" lengthAdjust="spacingAndGlyphs" stroke="#333333" stroke-width="0.2">History log</text>
<rect x="24.5" y="676.5" width="339" height="19" rx="2" fill="#ffffff" stroke="#bdbab4" stroke-width="1"/>
<text x="27.3" y="690.3" font-size="12" fill="#222222" textLength="44" lengthAdjust="spacingAndGlyphs" stroke="#222222" stroke-width="0.2">samples</text>
<line x1="348.5" y1="677" x2="348.5" y2="695" stroke="#d0cec9"/>
<text x="370" y="690.3" font-size="12" fill="#333333" textLength="29" lengthAdjust="spacingAndGlyphs" stroke="#333333" stroke-width="0.2">1 of 1</text>
<text x="416.3" y="708.7" font-size="11.5" fill="#333333" textLength="67.44999999999999" lengthAdjust="spacingAndGlyphs" stroke="#333333" stroke-width="0.2">Permissions:</text>
<text x="489" y="708.7" font-size="11.5" fill="#1f1f1f" font-weight="bold" textLength="18.80000000000001" lengthAdjust="spacingAndGlyphs" >RW</text>
<text x="532.8" y="708.7" font-size="11.5" fill="#333333" textLength="66.20000000000005" lengthAdjust="spacingAndGlyphs" stroke="#333333" stroke-width="0.2">End-of-lines:</text>
<text x="604.7" y="708.7" font-size="11.5" fill="#1f1f1f" font-weight="bold" textLength="13.099999999999909" lengthAdjust="spacingAndGlyphs" >LF</text>
<text x="640.6" y="708.7" font-size="11.5" fill="#333333" textLength="52.19999999999993" lengthAdjust="spacingAndGlyphs" stroke="#333333" stroke-width="0.2">Encoding:</text>
<text x="698.4" y="708.7" font-size="11.5" fill="#1f1f1f" font-weight="bold" textLength="32.89999999999998" lengthAdjust="spacingAndGlyphs" >UTF-8</text>
<text x="782.3" y="708.7" font-size="11.5" fill="#333333" textLength="25.300000000000068" lengthAdjust="spacingAndGlyphs" stroke="#333333" stroke-width="0.2">Line:</text>
<text x="812.6" y="708.7" font-size="11.5" fill="#1f1f1f" font-weight="bold" textLength="7.399999999999977" lengthAdjust="spacingAndGlyphs" >4</text>
<text x="840.2" y="708.7" font-size="11.5" fill="#333333" textLength="43.09999999999991" lengthAdjust="spacingAndGlyphs" stroke="#333333" stroke-width="0.2">Column:</text>
<text x="888.6" y="708.7" font-size="11.5" fill="#1f1f1f" font-weight="bold" textLength="13.100000000000023" lengthAdjust="spacingAndGlyphs" >67</text>
<text x="914.5" y="708.7" font-size="11.5" fill="#333333" textLength="47.5" lengthAdjust="spacingAndGlyphs" stroke="#333333" stroke-width="0.2">Memory:</text>
<text x="971.8" y="708.7" font-size="11.5" fill="#1f1f1f" font-weight="bold" textLength="25.800000000000068" lengthAdjust="spacingAndGlyphs" >55 %</text>
<defs><filter id="sh" x="-20%" y="-20%" width="140%" height="140%"><feGaussianBlur stdDeviation="6.5"/></filter><linearGradient id="tbg" x1="0" y1="0" x2="0" y2="1"><stop offset="0" stop-color="#5a5954"/><stop offset="1" stop-color="#43423e"/></linearGradient></defs>
<rect x="30" y="163" width="514" height="465" fill="rgba(0,0,0,0.42)" filter="url(#sh)"/>
<path d="M31 183.5 V165 Q31 160 36 160 H538 Q543 160 543 165 V183.5 Z" fill="url(#tbg)"/>
<rect x="31" y="183.5" width="512" height="36.5" fill="#f3f1ee" />
<rect x="31" y="219.5" width="512" height="1" fill="#d9d7d2" />
<rect x="31" y="600" width="512" height="23" fill="#eeebe7" />
<rect x="31" y="220.5" width="512" height="385.2" fill="#ffffff" />
<rect x="540" y="613.3" width="1.1" height="1.1" fill="#b3b1ac" />
<rect x="537.6" y="615.8" width="1.1" height="1.1" fill="#b3b1ac" />
<rect x="540" y="615.8" width="1.1" height="1.1" fill="#b3b1ac" />
<rect x="535.2" y="618.3" width="1.1" height="1.1" fill="#b3b1ac" />
<rect x="537.6" y="618.3" width="1.1" height="1.1" fill="#b3b1ac" />
<rect x="540" y="618.3" width="1.1" height="1.1" fill="#b3b1ac" />
<rect x="532.8" y="620.8" width="1.1" height="1.1" fill="#b3b1ac" />
<rect x="535.2" y="620.8" width="1.1" height="1.1" fill="#b3b1ac" />
<rect x="537.6" y="620.8" width="1.1" height="1.1" fill="#b3b1ac" />
<rect x="540" y="620.8" width="1.1" height="1.1" fill="#b3b1ac" />
<text x="264.4" y="175.6" font-size="12" fill="#dfdbd2" font-weight="bold" textLength="44.4" lengthAdjust="spacingAndGlyphs" >Figure 1</text>
<defs><linearGradient id="bg1" x1="0" y1="0" x2="0" y2="1"><stop offset="0" stop-color="#73726d"/><stop offset="1" stop-color="#5c5b56"/></linearGradient><linearGradient id="bg2" x1="0" y1="0" x2="0" y2="1"><stop offset="0" stop-color="#f46a3e"/><stop offset="1" stop-color="#dc4a1c"/></linearGradient></defs>
<circle cx="499.6" cy="171.4" r="6.6" fill="url(#bg1)" stroke="#393834" stroke-width="0.9"/>
<rect x="496.3" y="170.7" width="6.6" height="1.5" fill="#484743"/>
<circle cx="515.6" cy="171.4" r="6.6" fill="url(#bg1)" stroke="#393834" stroke-width="0.9"/>
<rect x="512.7" y="168.5" width="5.8" height="5.8" fill="#64635e" stroke="#3e3d39" stroke-width="1"/>
<circle cx="531.6" cy="171.4" r="6.6" fill="url(#bg2)" stroke="#3a2a22" stroke-width="0.6"/>
<path d="M529.2 169 L534 173.8 M534 169 L529.2 173.8" stroke="#4a2412" stroke-width="1.1"/>
<g shape-rendering="crispEdges">
<rect x="109.60" y="268.30" width="7.35" height="7.3" fill="#000000"/>
<rect x="116.82" y="268.30" width="7.35" height="7.3" fill="#000000"/>
<rect x="124.04" y="268.30" width="7.35" height="7.3" fill="#000000"/>
<rect x="131.26" y="268.30" width="7.35" height="7.3" fill="#000000"/>
<rect x="138.48" y="268.30" width="7.35" height="7.3" fill="#000000"/>
<rect x="145.70" y="268.30" width="7.35" height="7.3" fill="#000000"/>
<rect x="152.92" y="268.30" width="7.35" height="7.3" fill="#000000"/>
<rect x="160.14" y="268.30" width="7.35" height="7.3" fill="#000000"/>
<rect x="167.36" y="268.30" width="7.35" height="7.3" fill="#000000"/>
<rect x="174.58" y="268.30" width="7.35" height="7.3" fill="#000000"/>
<rect x="181.80" y="268.30" width="7.35" height="7.3" fill="#000000"/>
<rect x="189.02" y="268.30" width="7.35" height="7.3" fill="#000000"/>
<rect x="196.24" y="268.30" width="7.35" height="7.3" fill="#000000"/>
<rect x="203.46" y="268.30" width="7.35" height="7.3" fill="#000000"/>
<rect x="210.68" y="268.30" width="7.35" height="7.3" fill="#000000"/>
<rect x="217.90" y="268.30" width="7.35" height="7.3" fill="#000000"/>
<rect x="225.12" y="268.30" width="7.35" height="7.3" fill="#000000"/>
<rect x="232.34" y="268.30" width="7.35" height="7.3" fill="#000000"/>
<rect x="239.56" y="268.30" width="7.35" height="7.3" fill="#000000"/>
<rect x="246.78" y="268.30" width="7.35" height="7.3" fill="#000000"/>
<rect x="254.00" y="268.30" width="7.35" height="7.3" fill="#000000"/>
<rect x="109.60" y="275.50" width="7.35" height="7.3" fill="#000000"/>
<rect x="116.82" y="275.50" width="7.35" height="7.3" fill="#000000"/>
<rect x="124.04" y="275.50" width="7.35" height="7.3" fill="#000000"/>
<rect x="131.26" y="275.50" width="7.35" height="7.3" fill="#000000"/>
<rect x="138.48" y="275.50" width="7.35" height="7.3" fill="#000000"/>
<rect x="145.70" y="275.50" width="7.35" height="7.3" fill="#000000"/>
<rect x="152.92" y="275.50" width="7.35" height="7.3" fill="#000000"/>
<rect x="160.14" y="275.50" width="7.35" height="7.3" fill="#000000"/>
<rect x="167.36" y="275.50" width="7.35" height="7.3" fill="#000000"/>
<rect x="174.58" y="275.50" width="7.35" height="7.3" fill="#000000"/>
<rect x="181.80" y="275.50" width="7.35" height="7.3" fill="#000000"/>
<rect x="189.02" y="275.50" width="7.35" height="7.3" fill="#000000"/>
<rect x="196.24" y="275.50" width="7.35" height="7.3" fill="#000000"/>
<rect x="203.46" y="275.50" width="7.35" height="7.3" fill="#000000"/>
<rect x="210.68" y="275.50" width="7.35" height="7.3" fill="#000000"/>
<rect x="217.90" y="275.50" width="7.35" height="7.3" fill="#000000"/>
<rect x="225.12" y="275.50" width="7.35" height="7.3" fill="#000000"/>
<rect x="232.34" y="275.50" width="7.35" height="7.3" fill="#000000"/>
<rect x="239.56" y="275.50" width="7.35" height="7.3" fill="#000000"/>
<rect x="246.78" y="275.50" width="7.35" height="7.3" fill="#000000"/>
<rect x="254.00" y="275.50" width="7.35" height="7.3" fill="#000000"/>
<rect x="109.60" y="282.70" width="7.35" height="7.3" fill="#000000"/>
<rect x="116.82" y="282.70" width="7.35" height="7.3" fill="#000000"/>
<rect x="124.04" y="282.70" width="7.35" height="7.3" fill="#000000"/>
<rect x="131.26" y="282.70" width="7.35" height="7.3" fill="#000000"/>
<rect x="138.48" y="282.70" width="7.35" height="7.3" fill="#000000"/>
<rect x="145.70" y="282.70" width="7.35" height="7.3" fill="#000000"/>
<rect x="152.92" y="282.70" width="7.35" height="7.3" fill="#000000"/>
<rect x="160.14" y="282.70" width="7.35" height="7.3" fill="#000000"/>
<rect x="167.36" y="282.70" width="7.35" height="7.3" fill="#000000"/>
<rect x="174.58" y="282.70" width="7.35" height="7.3" fill="#000000"/>
<rect x="181.80" y="282.70" width="7.35" height="7.3" fill="#000000"/>
<rect x="189.02" y="282.70" width="7.35" height="7.3" fill="#000000"/>
<rect x="196.24" y="282.70" width="7.35" height="7.3" fill="#000000"/>
<rect x="203.46" y="282.70" width="7.35" height="7.3" fill="#000000"/>
<rect x="210.68" y="282.70" width="7.35" height="7.3" fill="#000000"/>
<rect x="217.90" y="282.70" width="7.35" height="7.3" fill="#000000"/>
<rect x="225.12" y="282.70" width="7.35" height="7.3" fill="#000000"/>
<rect x="232.34" y="282.70" width="7.35" height="7.3" fill="#000000"/>
<rect x="239.56" y="282.70" width="7.35" height="7.3" fill="#000000"/>
<rect x="246.78" y="282.70" width="7.35" height="7.3" fill="#000000"/>
<rect x="254.00" y="282.70" width="7.35" height="7.3" fill="#000000"/>
<rect x="109.60" y="289.90" width="7.35" height="7.3" fill="#000000"/>
<rect x="116.82" y="289.90" width="7.35" height="7.3" fill="#000000"/>
<rect x="124.04" y="289.90" width="7.35" height="7.3" fill="#000000"/>
<rect x="131.26" y="289.90" width="7.35" height="7.3" fill="#000000"/>
<rect x="138.48" y="289.90" width="7.35" height="7.3" fill="#000000"/>
<rect x="145.70" y="289.90" width="7.35" height="7.3" fill="#000000"/>
<rect x="152.92" y="289.90" width="7.35" height="7.3" fill="#000000"/>
<rect x="160.14" y="289.90" width="7.35" height="7.3" fill="#000000"/>
<rect x="167.36" y="289.90" width="7.35" height="7.3" fill="#000000"/>
<rect x="174.58" y="289.90" width="7.35" height="7.3" fill="#000000"/>
<rect x="181.80" y="289.90" width="7.35" height="7.3" fill="#000000"/>
<rect x="189.02" y="289.90" width="7.35" height="7.3" fill="#000000"/>
<rect x="196.24" y="289.90" width="7.35" height="7.3" fill="#000000"/>
<rect x="203.46" y="289.90" width="7.35" height="7.3" fill="#000000"/>
<rect x="210.68" y="289.90" width="7.35" height="7.3" fill="#000000"/>
<rect x="217.90" y="289.90" width="7.35" height="7.3" fill="#000000"/>
<rect x="225.12" y="289.90" width="7.35" height="7.3" fill="#000000"/>
<rect x="232.34" y="289.90" width="7.35" height="7.3" fill="#000000"/>
<rect x="239.56" y="289.90" width="7.35" height="7.3" fill="#000000"/>
<rect x="246.78" y="289.90" width="7.35" height="7.3" fill="#000000"/>
<rect x="254.00" y="289.90" width="7.35" height="7.3" fill="#000000"/>
<rect x="109.60" y="297.10" width="7.35" height="7.3" fill="#000000"/>
<rect x="116.82" y="297.10" width="7.35" height="7.3" fill="#000000"/>
<rect x="124.04" y="297.10" width="7.35" height="7.3" fill="#000000"/>
<rect x="131.26" y="297.10" width="7.35" height="7.3" fill="#000000"/>
<rect x="138.48" y="297.10" width="7.35" height="7.3" fill="#000000"/>
<rect x="145.70" y="297.10" width="7.35" height="7.3" fill="#000000"/>
<rect x="152.92" y="297.10" width="7.35" height="7.3" fill="#000000"/>
<rect x="160.14" y="297.10" width="7.35" height="7.3" fill="#000000"/>
<rect x="167.36" y="297.10" width="7.35" height="7.3" fill="#000000"/>
<rect x="174.58" y="297.10" width="7.35" height="7.3" fill="#000000"/>
<rect x="181.80" y="297.10" width="7.35" height="7.3" fill="#000000"/>
<rect x="189.02" y="297.10" width="7.35" height="7.3" fill="#000000"/>
<rect x="196.24" y="297.10" width="7.35" height="7.3" fill="#000000"/>
<rect x="203.46" y="297.10" width="7.35" height="7.3" fill="#000000"/>
<rect x="210.68" y="297.10" width="7.35" height="7.3" fill="#000000"/>
<rect x="217.90" y="297.10" width="7.35" height="7.3" fill="#000000"/>
<rect x="225.12" y="297.10" width="7.35" height="7.3" fill="#000000"/>
<rect x="232.34" y="297.10" width="7.35" height="7.3" fill="#000000"/>
<rect x="239.56" y="297.10" width="7.35" height="7.3" fill="#000000"/>
<rect x="246.78" y="297.10" width="7.35" height="7.3" fill="#000000"/>
<rect x="254.00" y="297.10" width="7.35" height="7.3" fill="#000000"/>
<rect x="109.60" y="304.30" width="7.35" height="7.3" fill="#000000"/>
<rect x="116.82" y="304.30" width="7.35" height="7.3" fill="#000000"/>
<rect x="124.04" y="304.30" width="7.35" height="7.3" fill="#000000"/>
<rect x="131.26" y="304.30" width="7.35" height="7.3" fill="#000000"/>
<rect x="138.48" y="304.30" width="7.35" height="7.3" fill="#000000"/>
<rect x="145.70" y="304.30" width="7.35" height="7.3" fill="#000000"/>
<rect x="152.92" y="304.30" width="7.35" height="7.3" fill="#000000"/>
<rect x="160.14" y="304.30" width="7.35" height="7.3" fill="#000000"/>
<rect x="167.36" y="304.30" width="7.35" height="7.3" fill="#000000"/>
<rect x="174.58" y="304.30" width="7.35" height="7.3" fill="#000000"/>
<rect x="181.80" y="304.30" width="7.35" height="7.3" fill="#000000"/>
<rect x="189.02" y="304.30" width="7.35" height="7.3" fill="#000000"/>
<rect x="196.24" y="304.30" width="7.35" height="7.3" fill="#000000"/>
<rect x="203.46" y="304.30" width="7.35" height="7.3" fill="#000000"/>
<rect x="210.68" y="304.30" width="7.35" height="7.3" fill="#000000"/>
<rect x="217.90" y="304.30" width="7.35" height="7.3" fill="#000000"/>
<rect x="225.12" y="304.30" width="7.35" height="7.3" fill="#000000"/>
<rect x="232.34" y="304.30" width="7.35" height="7.3" fill="#000000"/>
<rect x="239.56" y="304.30" width="7.35" height="7.3" fill="#000000"/>
<rect x="246.78" y="304.30" width="7.35" height="7.3" fill="#000000"/>
<rect x="254.00" y="304.30" width="7.35" height="7.3" fill="#000000"/>
<rect x="109.60" y="311.50" width="7.35" height="7.3" fill="#000000"/>
<rect x="116.82" y="311.50" width="7.35" height="7.3" fill="#000000"/>
<rect x="124.04" y="311.50" width="7.35" height="7.3" fill="#000000"/>
<rect x="131.26" y="311.50" width="7.35" height="7.3" fill="#000000"/>
<rect x="138.48" y="311.50" width="7.35" height="7.3" fill="#000000"/>
<rect x="145.70" y="311.50" width="7.35" height="7.3" fill="#000000"/>
<rect x="152.92" y="311.50" width="7.35" height="7.3" fill="#000000"/>
<rect x="160.14" y="311.50" width="7.35" height="7.3" fill="#000000"/>
<rect x="167.36" y="311.50" width="7.35" height="7.3" fill="#000000"/>
<rect x="174.58" y="311.50" width="7.35" height="7.3" fill="#000000"/>
<rect x="181.80" y="311.50" width="7.35" height="7.3" fill="#000000"/>
<rect x="189.02" y="311.50" width="7.35" height="7.3" fill="#000000"/>
<rect x="196.24" y="311.50" width="7.35" height="7.3" fill="#000000"/>
<rect x="203.46" y="311.50" width="7.35" height="7.3" fill="#000000"/>
<rect x="210.68" y="311.50" width="7.35" height="7.3" fill="#000000"/>
<rect x="217.90" y="311.50" width="7.35" height="7.3" fill="#000000"/>
<rect x="225.12" y="311.50" width="7.35" height="7.3" fill="#000000"/>
<rect x="232.34" y="311.50" width="7.35" height="7.3" fill="#000000"/>
<rect x="239.56" y="311.50" width="7.35" height="7.3" fill="#000000"/>
<rect x="246.78" y="311.50" width="7.35" height="7.3" fill="#000000"/>
<rect x="254.00" y="311.50" width="7.35" height="7.3" fill="#000000"/>
<rect x="109.60" y="318.70" width="7.35" height="7.3" fill="#000000"/>
<rect x="116.82" y="318.70" width="7.35" height="7.3" fill="#000000"/>
<rect x="124.04" y="318.70" width="7.35" height="7.3" fill="#000000"/>
<rect x="131.26" y="318.70" width="7.35" height="7.3" fill="#000000"/>
<rect x="138.48" y="318.70" width="7.35" height="7.3" fill="#000000"/>
<rect x="145.70" y="318.70" width="7.35" height="7.3" fill="#000000"/>
<rect x="152.92" y="318.70" width="7.35" height="7.3" fill="#000000"/>
<rect x="160.14" y="318.70" width="7.35" height="7.3" fill="#000000"/>
<rect x="167.36" y="318.70" width="7.35" height="7.3" fill="#000000"/>
<rect x="174.58" y="318.70" width="7.35" height="7.3" fill="#000000"/>
<rect x="181.80" y="318.70" width="7.35" height="7.3" fill="#000000"/>
<rect x="189.02" y="318.70" width="7.35" height="7.3" fill="#000000"/>
<rect x="196.24" y="318.70" width="7.35" height="7.3" fill="#000000"/>
<rect x="203.46" y="318.70" width="7.35" height="7.3" fill="#000000"/>
<rect x="210.68" y="318.70" width="7.35" height="7.3" fill="#000000"/>
<rect x="217.90" y="318.70" width="7.35" height="7.3" fill="#000000"/>
<rect x="225.12" y="318.70" width="7.35" height="7.3" fill="#000000"/>
<rect x="232.34" y="318.70" width="7.35" height="7.3" fill="#000000"/>
<rect x="239.56" y="318.70" width="7.35" height="7.3" fill="#000000"/>
<rect x="246.78" y="318.70" width="7.35" height="7.3" fill="#000000"/>
<rect x="254.00" y="318.70" width="7.35" height="7.3" fill="#000000"/>
<rect x="109.60" y="325.90" width="7.35" height="7.3" fill="#000000"/>
<rect x="116.82" y="325.90" width="7.35" height="7.3" fill="#000000"/>
<rect x="124.04" y="325.90" width="7.35" height="7.3" fill="#000000"/>
<rect x="131.26" y="325.90" width="7.35" height="7.3" fill="#000000"/>
<rect x="138.48" y="325.90" width="7.35" height="7.3" fill="#000000"/>
<rect x="145.70" y="325.90" width="7.35" height="7.3" fill="#000000"/>
<rect x="152.92" y="325.90" width="7.35" height="7.3" fill="#000000"/>
<rect x="160.14" y="325.90" width="7.35" height="7.3" fill="#000000"/>
<rect x="167.36" y="325.90" width="7.35" height="7.3" fill="#000000"/>
<rect x="174.58" y="325.90" width="7.35" height="7.3" fill="#000000"/>
<rect x="181.80" y="325.90" width="7.35" height="7.3" fill="#000000"/>
<rect x="189.02" y="325.90" width="7.35" height="7.3" fill="#000000"/>
<rect x="196.24" y="325.90" width="7.35" height="7.3" fill="#000000"/>
<rect x="203.46" y="325.90" width="7.35" height="7.3" fill="#000000"/>
<rect x="210.68" y="325.90" width="7.35" height="7.3" fill="#000000"/>
<rect x="217.90" y="325.90" width="7.35" height="7.3" fill="#000000"/>
<rect x="225.12" y="325.90" width="7.35" height="7.3" fill="#000000"/>
<rect x="232.34" y="325.90" width="7.35" height="7.3" fill="#000000"/>
<rect x="239.56" y="325.90" width="7.35" height="7.3" fill="#000000"/>
<rect x="246.78" y="325.90" width="7.35" height="7.3" fill="#000000"/>
<rect x="254.00" y="325.90" width="7.35" height="7.3" fill="#000000"/>
<rect x="109.60" y="333.10" width="7.35" height="7.3" fill="#000000"/>
<rect x="116.82" y="333.10" width="7.35" height="7.3" fill="#000000"/>
<rect x="124.04" y="333.10" width="7.35" height="7.3" fill="#000000"/>
<rect x="131.26" y="333.10" width="7.35" height="7.3" fill="#000000"/>
<rect x="138.48" y="333.10" width="7.35" height="7.3" fill="#000000"/>
<rect x="145.70" y="333.10" width="7.35" height="7.3" fill="#000000"/>
<rect x="152.92" y="333.10" width="7.35" height="7.3" fill="#000000"/>
<rect x="160.14" y="333.10" width="7.35" height="7.3" fill="#000000"/>
<rect x="167.36" y="333.10" width="7.35" height="7.3" fill="#000000"/>
<rect x="174.58" y="333.10" width="7.35" height="7.3" fill="#000000"/>
<rect x="181.80" y="333.10" width="7.35" height="7.3" fill="#000000"/>
<rect x="189.02" y="333.10" width="7.35" height="7.3" fill="#000000"/>
<rect x="196.24" y="333.10" width="7.35" height="7.3" fill="#000000"/>
<rect x="203.46" y="333.10" width="7.35" height="7.3" fill="#000000"/>
<rect x="210.68" y="333.10" width="7.35" height="7.3" fill="#000000"/>
<rect x="217.90" y="333.10" width="7.35" height="7.3" fill="#000000"/>
<rect x="225.12" y="333.10" width="7.35" height="7.3" fill="#000000"/>
<rect x="232.34" y="333.10" width="7.35" height="7.3" fill="#000000"/>
<rect x="239.56" y="333.10" width="7.35" height="7.3" fill="#000000"/>
<rect x="246.78" y="333.10" width="7.35" height="7.3" fill="#000000"/>
<rect x="254.00" y="333.10" width="7.35" height="7.3" fill="#000000"/>
<rect x="109.60" y="340.30" width="7.35" height="7.3" fill="#000000"/>
<rect x="116.82" y="340.30" width="7.35" height="7.3" fill="#000000"/>
<rect x="124.04" y="340.30" width="7.35" height="7.3" fill="#000000"/>
<rect x="131.26" y="340.30" width="7.35" height="7.3" fill="#000000"/>
<rect x="138.48" y="340.30" width="7.35" height="7.3" fill="#000000"/>
<rect x="145.70" y="340.30" width="7.35" height="7.3" fill="#000000"/>
<rect x="152.92" y="340.30" width="7.35" height="7.3" fill="#000000"/>
<rect x="160.14" y="340.30" width="7.35" height="7.3" fill="#000000"/>
<rect x="167.36" y="340.30" width="7.35" height="7.3" fill="#000000"/>
<rect x="174.58" y="340.30" width="7.35" height="7.3" fill="#000000"/>
<rect x="181.80" y="340.30" width="7.35" height="7.3" fill="#000000"/>
<rect x="189.02" y="340.30" width="7.35" height="7.3" fill="#000000"/>
<rect x="196.24" y="340.30" width="7.35" height="7.3" fill="#000000"/>
<rect x="203.46" y="340.30" width="7.35" height="7.3" fill="#000000"/>
<rect x="210.68" y="340.30" width="7.35" height="7.3" fill="#000000"/>
<rect x="217.90" y="340.30" width="7.35" height="7.3" fill="#000000"/>
<rect x="225.12" y="340.30" width="7.35" height="7.3" fill="#000000"/>
<rect x="232.34" y="340.30" width="7.35" height="7.3" fill="#000000"/>
<rect x="239.56" y="340.30" width="7.35" height="7.3" fill="#000000"/>
<rect x="246.78" y="340.30" width="7.35" height="7.3" fill="#000000"/>
<rect x="254.00" y="340.30" width="7.35" height="7.3" fill="#000000"/>
<rect x="109.60" y="347.50" width="7.35" height="7.3" fill="#000000"/>
<rect x="116.82" y="347.50" width="7.35" height="7.3" fill="#000000"/>
<rect x="124.04" y="347.50" width="7.35" height="7.3" fill="#000000"/>
<rect x="131.26" y="347.50" width="7.35" height="7.3" fill="#000000"/>
<rect x="138.48" y="347.50" width="7.35" height="7.3" fill="#000000"/>
<rect x="145.70" y="347.50" width="7.35" height="7.3" fill="#000000"/>
<rect x="152.92" y="347.50" width="7.35" height="7.3" fill="#000000"/>
<rect x="160.14" y="347.50" width="7.35" height="7.3" fill="#000000"/>
<rect x="167.36" y="347.50" width="7.35" height="7.3" fill="#000000"/>
<rect x="174.58" y="347.50" width="7.35" height="7.3" fill="#000000"/>
<rect x="181.80" y="347.50" width="7.35" height="7.3" fill="#000000"/>
<rect x="189.02" y="347.50" width="7.35" height="7.3" fill="#000000"/>
<rect x="196.24" y="347.50" width="7.35" height="7.3" fill="#000000"/>
<rect x="203.46" y="347.50" width="7.35" height="7.3" fill="#000000"/>
<rect x="210.68" y="347.50" width="7.35" height="7.3" fill="#000000"/>
<rect x="217.90" y="347.50" width="7.35" height="7.3" fill="#000000"/>
<rect x="225.12" y="347.50" width="7.35" height="7.3" fill="#000000"/>
<rect x="232.34" y="347.50" width="7.35" height="7.3" fill="#000000"/>
<rect x="239.56" y="347.50" width="7.35" height="7.3" fill="#000000"/>
<rect x="246.78" y="347.50" width="7.35" height="7.3" fill="#000000"/>
<rect x="254.00" y="347.50" width="7.35" height="7.3" fill="#000000"/>
<rect x="109.60" y="354.70" width="7.35" height="7.3" fill="#000000"/>
<rect x="116.82" y="354.70" width="7.35" height="7.3" fill="#000000"/>
<rect x="124.04" y="354.70" width="7.35" height="7.3" fill="#000000"/>
<rect x="131.26" y="354.70" width="7.35" height="7.3" fill="#000000"/>
<rect x="138.48" y="354.70" width="7.35" height="7.3" fill="#000000"/>
<rect x="145.70" y="354.70" width="7.35" height="7.3" fill="#000000"/>
<rect x="152.92" y="354.70" width="7.35" height="7.3" fill="#000000"/>
<rect x="160.14" y="354.70" width="7.35" height="7.3" fill="#000000"/>
<rect x="167.36" y="354.70" width="7.35" height="7.3" fill="#000000"/>
<rect x="174.58" y="354.70" width="7.35" height="7.3" fill="#000000"/>
<rect x="181.80" y="354.70" width="7.35" height="7.3" fill="#000000"/>
<rect x="189.02" y="354.70" width="7.35" height="7.3" fill="#000000"/>
<rect x="196.24" y="354.70" width="7.35" height="7.3" fill="#000000"/>
<rect x="203.46" y="354.70" width="7.35" height="7.3" fill="#000000"/>
<rect x="210.68" y="354.70" width="7.35" height="7.3" fill="#000000"/>
<rect x="217.90" y="354.70" width="7.35" height="7.3" fill="#000000"/>
<rect x="225.12" y="354.70" width="7.35" height="7.3" fill="#000000"/>
<rect x="232.34" y="354.70" width="7.35" height="7.3" fill="#000000"/>
<rect x="239.56" y="354.70" width="7.35" height="7.3" fill="#000000"/>
<rect x="246.78" y="354.70" width="7.35" height="7.3" fill="#000000"/>
<rect x="254.00" y="354.70" width="7.35" height="7.3" fill="#000000"/>
<rect x="109.60" y="361.90" width="7.35" height="7.3" fill="#000000"/>
<rect x="116.82" y="361.90" width="7.35" height="7.3" fill="#000000"/>
<rect x="124.04" y="361.90" width="7.35" height="7.3" fill="#000000"/>
<rect x="131.26" y="361.90" width="7.35" height="7.3" fill="#000000"/>
<rect x="138.48" y="361.90" width="7.35" height="7.3" fill="#000000"/>
<rect x="145.70" y="361.90" width="7.35" height="7.3" fill="#000000"/>
<rect x="152.92" y="361.90" width="7.35" height="7.3" fill="#000000"/>
<rect x="160.14" y="361.90" width="7.35" height="7.3" fill="#000000"/>
<rect x="167.36" y="361.90" width="7.35" height="7.3" fill="#000000"/>
<rect x="174.58" y="361.90" width="7.35" height="7.3" fill="#000000"/>
<rect x="181.80" y="361.90" width="7.35" height="7.3" fill="#000000"/>
<rect x="189.02" y="361.90" width="7.35" height="7.3" fill="#000000"/>
<rect x="196.24" y="361.90" width="7.35" height="7.3" fill="#000000"/>
<rect x="203.46" y="361.90" width="7.35" height="7.3" fill="#000000"/>
<rect x="210.68" y="361.90" width="7.35" height="7.3" fill="#000000"/>
<rect x="217.90" y="361.90" width="7.35" height="7.3" fill="#000000"/>
<rect x="225.12" y="361.90" width="7.35" height="7.3" fill="#000000"/>
<rect x="232.34" y="361.90" width="7.35" height="7.3" fill="#000000"/>
<rect x="239.56" y="361.90" width="7.35" height="7.3" fill="#000000"/>
<rect x="246.78" y="361.90" width="7.35" height="7.3" fill="#000000"/>
<rect x="254.00" y="361.90" width="7.35" height="7.3" fill="#000000"/>
<rect x="109.60" y="369.10" width="7.35" height="7.3" fill="#000000"/>
<rect x="116.82" y="369.10" width="7.35" height="7.3" fill="#000000"/>
<rect x="124.04" y="369.10" width="7.35" height="7.3" fill="#000000"/>
<rect x="131.26" y="369.10" width="7.35" height="7.3" fill="#000000"/>
<rect x="138.48" y="369.10" width="7.35" height="7.3" fill="#000000"/>
<rect x="145.70" y="369.10" width="7.35" height="7.3" fill="#000000"/>
<rect x="152.92" y="369.10" width="7.35" height="7.3" fill="#000000"/>
<rect x="160.14" y="369.10" width="7.35" height="7.3" fill="#000000"/>
<rect x="167.36" y="369.10" width="7.35" height="7.3" fill="#000000"/>
<rect x="174.58" y="369.10" width="7.35" height="7.3" fill="#000000"/>
<rect x="181.80" y="369.10" width="7.35" height="7.3" fill="#000000"/>
<rect x="189.02" y="369.10" width="7.35" height="7.3" fill="#000000"/>
<rect x="196.24" y="369.10" width="7.35" height="7.3" fill="#000000"/>
<rect x="203.46" y="369.10" width="7.35" height="7.3" fill="#000000"/>
<rect x="210.68" y="369.10" width="7.35" height="7.3" fill="#000000"/>
<rect x="217.90" y="369.10" width="7.35" height="7.3" fill="#000000"/>
<rect x="225.12" y="369.10" width="7.35" height="7.3" fill="#000000"/>
<rect x="232.34" y="369.10" width="7.35" height="7.3" fill="#000000"/>
<rect x="239.56" y="369.10" width="7.35" height="7.3" fill="#000000"/>
<rect x="246.78" y="369.10" width="7.35" height="7.3" fill="#000000"/>
<rect x="254.00" y="369.10" width="7.35" height="7.3" fill="#000000"/>
<rect x="109.60" y="376.30" width="7.35" height="7.3" fill="#00ff00"/>
<rect x="116.82" y="376.30" width="7.35" height="7.3" fill="#0ef000"/>
<rect x="124.04" y="376.30" width="7.35" height="7.3" fill="#1de100"/>
<rect x="131.26" y="376.30" width="7.35" height="7.3" fill="#2bd300"/>
<rect x="138.48" y="376.30" width="7.35" height="7.3" fill="#3ac400"/>
<rect x="145.70" y="376.30" width="7.35" height="7.3" fill="#48b600"/>
<rect x="152.92" y="376.30" width="7.35" height="7.3" fill="#57a700"/>
<rect x="160.14" y="376.30" width="7.35" height="7.3" fill="#669900"/>
<rect x="167.36" y="376.30" width="7.35" height="7.3" fill="#748a00"/>
<rect x="174.58" y="376.30" width="7.35" height="7.3" fill="#837b00"/>
<rect x="181.80" y="376.30" width="7.35" height="7.3" fill="#916d00"/>
<rect x="189.02" y="376.30" width="7.35" height="7.3" fill="#a05e00"/>
<rect x="196.24" y="376.30" width="7.35" height="7.3" fill="#ae5000"/>
<rect x="203.46" y="376.30" width="7.35" height="7.3" fill="#bd4100"/>
<rect x="210.68" y="376.30" width="7.35" height="7.3" fill="#cc3200"/>
<rect x="217.90" y="376.30" width="7.35" height="7.3" fill="#da2400"/>
<rect x="225.12" y="376.30" width="7.35" height="7.3" fill="#e91500"/>
<rect x="232.34" y="376.30" width="7.35" height="7.3" fill="#f70700"/>
<rect x="239.56" y="376.30" width="7.35" height="7.3" fill="#ffee00"/>
<rect x="246.78" y="376.30" width="7.35" height="7.3" fill="#ffd000"/>
<rect x="254.00" y="376.30" width="7.35" height="7.3" fill="#ffb000"/>
<rect x="109.60" y="383.50" width="7.35" height="7.3" fill="#00ff00"/>
<rect x="116.82" y="383.50" width="7.35" height="7.3" fill="#0fef00"/>
<rect x="124.04" y="383.50" width="7.35" height="7.3" fill="#1ee000"/>
<rect x="131.26" y="383.50" width="7.35" height="7.3" fill="#2ed000"/>
<rect x="138.48" y="383.50" width="7.35" height="7.3" fill="#3dc100"/>
<rect x="145.70" y="383.50" width="7.35" height="7.3" fill="#4db100"/>
<rect x="152.92" y="383.50" width="7.35" height="7.3" fill="#5ca200"/>
<rect x="160.14" y="383.50" width="7.35" height="7.3" fill="#6c9200"/>
<rect x="167.36" y="383.50" width="7.35" height="7.3" fill="#7b8300"/>
<rect x="174.58" y="383.50" width="7.35" height="7.3" fill="#8b7300"/>
<rect x="181.80" y="383.50" width="7.35" height="7.3" fill="#9a6400"/>
<rect x="189.02" y="383.50" width="7.35" height="7.3" fill="#aa5500"/>
<rect x="196.24" y="383.50" width="7.35" height="7.3" fill="#b94500"/>
<rect x="203.46" y="383.50" width="7.35" height="7.3" fill="#c83600"/>
<rect x="210.68" y="383.50" width="7.35" height="7.3" fill="#d82600"/>
<rect x="217.90" y="383.50" width="7.35" height="7.3" fill="#e71700"/>
<rect x="225.12" y="383.50" width="7.35" height="7.3" fill="#f70700"/>
<rect x="232.34" y="383.50" width="7.35" height="7.3" fill="#ffee00"/>
<rect x="239.56" y="383.50" width="7.35" height="7.3" fill="#ffcc00"/>
<rect x="246.78" y="383.50" width="7.35" height="7.3" fill="#ffaa00"/>
<rect x="254.00" y="383.50" width="7.35" height="7.3" fill="#ff7a00"/>
<rect x="109.60" y="390.70" width="7.35" height="7.3" fill="#00ff00"/>
<rect x="116.82" y="390.70" width="7.35" height="7.3" fill="#10ee00"/>
<rect x="124.04" y="390.70" width="7.35" height="7.3" fill="#20de00"/>
<rect x="131.26" y="390.70" width="7.35" height="7.3" fill="#31cd00"/>
<rect x="138.48" y="390.70" width="7.35" height="7.3" fill="#41bd00"/>
<rect x="145.70" y="390.70" width="7.35" height="7.3" fill="#52ac00"/>
<rect x="152.92" y="390.70" width="7.35" height="7.3" fill="#629c00"/>
<rect x="160.14" y="390.70" width="7.35" height="7.3" fill="#738b00"/>
<rect x="167.36" y="390.70" width="7.35" height="7.3" fill="#837b00"/>
<rect x="174.58" y="390.70" width="7.35" height="7.3" fill="#946a00"/>
<rect x="181.80" y="390.70" width="7.35" height="7.3" fill="#a45a00"/>
<rect x="189.02" y="390.70" width="7.35" height="7.3" fill="#b44a00"/>
<rect x="196.24" y="390.70" width="7.35" height="7.3" fill="#c53900"/>
<rect x="203.46" y="390.70" width="7.35" height="7.3" fill="#d52900"/>
<rect x="210.68" y="390.70" width="7.35" height="7.3" fill="#e61800"/>
<rect x="217.90" y="390.70" width="7.35" height="7.3" fill="#f60800"/>
<rect x="225.12" y="390.70" width="7.35" height="7.3" fill="#ffff00"/>
<rect x="232.34" y="390.70" width="7.35" height="7.3" fill="#ffd400"/>
<rect x="239.56" y="390.70" width="7.35" height="7.3" fill="#ffb000"/>
<rect x="246.78" y="390.70" width="7.35" height="7.3" fill="#ff8800"/>
<rect x="254.00" y="390.70" width="7.35" height="7.3" fill="#ff3c00"/>
<rect x="109.60" y="397.90" width="7.35" height="7.3" fill="#00ff00"/>
<rect x="116.82" y="397.90" width="7.35" height="7.3" fill="#10ee00"/>
<rect x="124.04" y="397.90" width="7.35" height="7.3" fill="#20de00"/>
<rect x="131.26" y="397.90" width="7.35" height="7.3" fill="#31cd00"/>
<rect x="138.48" y="397.90" width="7.35" height="7.3" fill="#41bd00"/>
<rect x="145.70" y="397.90" width="7.35" height="7.3" fill="#52ac00"/>
<rect x="152.92" y="397.90" width="7.35" height="7.3" fill="#629c00"/>
<rect x="160.14" y="397.90" width="7.35" height="7.3" fill="#738b00"/>
<rect x="167.36" y="397.90" width="7.35" height="7.3" fill="#837b00"/>
<rect x="174.58" y="397.90" width="7.35" height="7.3" fill="#946a00"/>
<rect x="181.80" y="397.90" width="7.35" height="7.3" fill="#a45a00"/>
<rect x="189.02" y="397.90" width="7.35" height="7.3" fill="#b44a00"/>
<rect x="196.24" y="397.90" width="7.35" height="7.3" fill="#c53900"/>
<rect x="203.46" y="397.90" width="7.35" height="7.3" fill="#d52900"/>
<rect x="210.68" y="397.90" width="7.35" height="7.3" fill="#e61800"/>
<rect x="217.90" y="397.90" width="7.35" height="7.3" fill="#f60800"/>
<rect x="225.12" y="397.90" width="7.35" height="7.3" fill="#fff000"/>
<rect x="232.34" y="397.90" width="7.35" height="7.3" fill="#ffcc00"/>
<rect x="239.56" y="397.90" width="7.35" height="7.3" fill="#ffaa00"/>
<rect x="246.78" y="397.90" width="7.35" height="7.3" fill="#ff7700"/>
<rect x="254.00" y="397.90" width="7.35" height="7.3" fill="#ff0a00"/>
<rect x="109.60" y="405.10" width="7.35" height="7.3" fill="#00ff00"/>
<rect x="116.82" y="405.10" width="7.35" height="7.3" fill="#10ee00"/>
<rect x="124.04" y="405.10" width="7.35" height="7.3" fill="#20de00"/>
<rect x="131.26" y="405.10" width="7.35" height="7.3" fill="#31cd00"/>
<rect x="138.48" y="405.10" width="7.35" height="7.3" fill="#41bd00"/>
<rect x="145.70" y="405.10" width="7.35" height="7.3" fill="#52ac00"/>
<rect x="152.92" y="405.10" width="7.35" height="7.3" fill="#629c00"/>
<rect x="160.14" y="405.10" width="7.35" height="7.3" fill="#738b00"/>
<rect x="167.36" y="405.10" width="7.35" height="7.3" fill="#837b00"/>
<rect x="174.58" y="405.10" width="7.35" height="7.3" fill="#946a00"/>
<rect x="181.80" y="405.10" width="7.35" height="7.3" fill="#a45a00"/>
<rect x="189.02" y="405.10" width="7.35" height="7.3" fill="#b44a00"/>
<rect x="196.24" y="405.10" width="7.35" height="7.3" fill="#c53900"/>
<rect x="203.46" y="405.10" width="7.35" height="7.3" fill="#d52900"/>
<rect x="210.68" y="405.10" width="7.35" height="7.3" fill="#e61800"/>
<rect x="217.90" y="405.10" width="7.35" height="7.3" fill="#f60800"/>
<rect x="225.12" y="405.10" width="7.35" height="7.3" fill="#fff000"/>
<rect x="232.34" y="405.10" width="7.35" height="7.3" fill="#ffcc00"/>
<rect x="239.56" y="405.10" width="7.35" height="7.3" fill="#ffaa00"/>
<rect x="246.78" y="405.10" width="7.35" height="7.3" fill="#ff7700"/>
<rect x="254.00" y="405.10" width="7.35" height="7.3" fill="#ff0a00"/>
<rect x="109.60" y="412.30" width="7.35" height="7.3" fill="#00ff00"/>
<rect x="116.82" y="412.30" width="7.35" height="7.3" fill="#10ee00"/>
<rect x="124.04" y="412.30" width="7.35" height="7.3" fill="#20de00"/>
<rect x="131.26" y="412.30" width="7.35" height="7.3" fill="#31cd00"/>
<rect x="138.48" y="412.30" width="7.35" height="7.3" fill="#41bd00"/>
<rect x="145.70" y="412.30" width="7.35" height="7.3" fill="#52ac00"/>
<rect x="152.92" y="412.30" width="7.35" height="7.3" fill="#629c00"/>
<rect x="160.14" y="412.30" width="7.35" height="7.3" fill="#738b00"/>
<rect x="167.36" y="412.30" width="7.35" height="7.3" fill="#837b00"/>
<rect x="174.58" y="412.30" width="7.35" height="7.3" fill="#946a00"/>
<rect x="181.80" y="412.30" width="7.35" height="7.3" fill="#a45a00"/>
<rect x="189.02" y="412.30" width="7.35" height="7.3" fill="#b44a00"/>
<rect x="196.24" y="412.30" width="7.35" height="7.3" fill="#c53900"/>
<rect x="203.46" y="412.30" width="7.35" height="7.3" fill="#d52900"/>
<rect x="210.68" y="412.30" width="7.35" height="7.3" fill="#e61800"/>
<rect x="217.90" y="412.30" width="7.35" height="7.3" fill="#f60800"/>
<rect x="225.12" y="412.30" width="7.35" height="7.3" fill="#fff000"/>
<rect x="232.34" y="412.30" width="7.35" height="7.3" fill="#ffcc00"/>
<rect x="239.56" y="412.30" width="7.35" height="7.3" fill="#ffaa00"/>
<rect x="246.78" y="412.30" width="7.35" height="7.3" fill="#ff7700"/>
<rect x="254.00" y="412.30" width="7.35" height="7.3" fill="#ff0a00"/>
<rect x="109.60" y="419.50" width="7.35" height="7.3" fill="#00ff00"/>
<rect x="116.82" y="419.50" width="7.35" height="7.3" fill="#10ee00"/>
<rect x="124.04" y="419.50" width="7.35" height="7.3" fill="#20de00"/>
<rect x="131.26" y="419.50" width="7.35" height="7.3" fill="#31cd00"/>
<rect x="138.48" y="419.50" width="7.35" height="7.3" fill="#41bd00"/>
<rect x="145.70" y="419.50" width="7.35" height="7.3" fill="#52ac00"/>
<rect x="152.92" y="419.50" width="7.35" height="7.3" fill="#629c00"/>
<rect x="160.14" y="419.50" width="7.35" height="7.3" fill="#738b00"/>
<rect x="167.36" y="419.50" width="7.35" height="7.3" fill="#837b00"/>
<rect x="174.58" y="419.50" width="7.35" height="7.3" fill="#946a00"/>
<rect x="181.80" y="419.50" width="7.35" height="7.3" fill="#a45a00"/>
<rect x="189.02" y="419.50" width="7.35" height="7.3" fill="#b44a00"/>
<rect x="196.24" y="419.50" width="7.35" height="7.3" fill="#c53900"/>
<rect x="203.46" y="419.50" width="7.35" height="7.3" fill="#d52900"/>
<rect x="210.68" y="419.50" width="7.35" height="7.3" fill="#e61800"/>
<rect x="217.90" y="419.50" width="7.35" height="7.3" fill="#f60800"/>
<rect x="225.12" y="419.50" width="7.35" height="7.3" fill="#fff000"/>
<rect x="232.34" y="419.50" width="7.35" height="7.3" fill="#ffcc00"/>
<rect x="239.56" y="419.50" width="7.35" height="7.3" fill="#ffaa00"/>
<rect x="246.78" y="419.50" width="7.35" height="7.3" fill="#ff7700"/>
<rect x="254.00" y="419.50" width="7.35" height="7.3" fill="#ff0a00"/>
<rect x="109.60" y="426.70" width="7.35" height="7.3" fill="#00ff00"/>
<rect x="116.82" y="426.70" width="7.35" height="7.3" fill="#10ee00"/>
<rect x="124.04" y="426.70" width="7.35" height="7.3" fill="#20de00"/>
<rect x="131.26" y="426.70" width="7.35" height="7.3" fill="#31cd00"/>
<rect x="138.48" y="426.70" width="7.35" height="7.3" fill="#41bd00"/>
<rect x="145.70" y="426.70" width="7.35" height="7.3" fill="#52ac00"/>
<rect x="152.92" y="426.70" width="7.35" height="7.3" fill="#629c00"/>
<rect x="160.14" y="426.70" width="7.35" height="7.3" fill="#738b00"/>
<rect x="167.36" y="426.70" width="7.35" height="7.3" fill="#837b00"/>
<rect x="174.58" y="426.70" width="7.35" height="7.3" fill="#946a00"/>
<rect x="181.80" y="426.70" width="7.35" height="7.3" fill="#a45a00"/>
<rect x="189.02" y="426.70" width="7.35" height="7.3" fill="#b44a00"/>
<rect x="196.24" y="426.70" width="7.35" height="7.3" fill="#c53900"/>
<rect x="203.46" y="426.70" width="7.35" height="7.3" fill="#d52900"/>
<rect x="210.68" y="426.70" width="7.35" height="7.3" fill="#e61800"/>
<rect x="217.90" y="426.70" width="7.35" height="7.3" fill="#f60800"/>
<rect x="225.12" y="426.70" width="7.35" height="7.3" fill="#fff000"/>
<rect x="232.34" y="426.70" width="7.35" height="7.3" fill="#ffcc00"/>
<rect x="239.56" y="426.70" width="7.35" height="7.3" fill="#ffaa00"/>
<rect x="246.78" y="426.70" width="7.35" height="7.3" fill="#ff7700"/>
<rect x="254.00" y="426.70" width="7.35" height="7.3" fill="#ff0a00"/>
<rect x="109.60" y="433.90" width="7.35" height="7.3" fill="#00ff00"/>
<rect x="116.82" y="433.90" width="7.35" height="7.3" fill="#10ee00"/>
<rect x="124.04" y="433.90" width="7.35" height="7.3" fill="#20de00"/>
<rect x="131.26" y="433.90" width="7.35" height="7.3" fill="#31cd00"/>
<rect x="138.48" y="433.90" width="7.35" height="7.3" fill="#41bd00"/>
<rect x="145.70" y="433.90" width="7.35" height="7.3" fill="#52ac00"/>
<rect x="152.92" y="433.90" width="7.35" height="7.3" fill="#629c00"/>
<rect x="160.14" y="433.90" width="7.35" height="7.3" fill="#738b00"/>
<rect x="167.36" y="433.90" width="7.35" height="7.3" fill="#837b00"/>
<rect x="174.58" y="433.90" width="7.35" height="7.3" fill="#946a00"/>
<rect x="181.80" y="433.90" width="7.35" height="7.3" fill="#a45a00"/>
<rect x="189.02" y="433.90" width="7.35" height="7.3" fill="#b44a00"/>
<rect x="196.24" y="433.90" width="7.35" height="7.3" fill="#c53900"/>
<rect x="203.46" y="433.90" width="7.35" height="7.3" fill="#d52900"/>
<rect x="210.68" y="433.90" width="7.35" height="7.3" fill="#e61800"/>
<rect x="217.90" y="433.90" width="7.35" height="7.3" fill="#f60800"/>
<rect x="225.12" y="433.90" width="7.35" height="7.3" fill="#fff000"/>
<rect x="232.34" y="433.90" width="7.35" height="7.3" fill="#ffcc00"/>
<rect x="239.56" y="433.90" width="7.35" height="7.3" fill="#ffaa00"/>
<rect x="246.78" y="433.90" width="7.35" height="7.3" fill="#ff7700"/>
<rect x="254.00" y="433.90" width="7.35" height="7.3" fill="#ff0a00"/>
<rect x="109.60" y="441.10" width="7.35" height="7.3" fill="#00ff00"/>
<rect x="116.82" y="441.10" width="7.35" height="7.3" fill="#10ee00"/>
<rect x="124.04" y="441.10" width="7.35" height="7.3" fill="#20de00"/>
<rect x="131.26" y="441.10" width="7.35" height="7.3" fill="#31cd00"/>
<rect x="138.48" y="441.10" width="7.35" height="7.3" fill="#41bd00"/>
<rect x="145.70" y="441.10" width="7.35" height="7.3" fill="#52ac00"/>
<rect x="152.92" y="441.10" width="7.35" height="7.3" fill="#629c00"/>
<rect x="160.14" y="441.10" width="7.35" height="7.3" fill="#738b00"/>
<rect x="167.36" y="441.10" width="7.35" height="7.3" fill="#837b00"/>
<rect x="174.58" y="441.10" width="7.35" height="7.3" fill="#946a00"/>
<rect x="181.80" y="441.10" width="7.35" height="7.3" fill="#a45a00"/>
<rect x="189.02" y="441.10" width="7.35" height="7.3" fill="#b44a00"/>
<rect x="196.24" y="441.10" width="7.35" height="7.3" fill="#c53900"/>
<rect x="203.46" y="441.10" width="7.35" height="7.3" fill="#d52900"/>
<rect x="210.68" y="441.10" width="7.35" height="7.3" fill="#e61800"/>
<rect x="217.90" y="441.10" width="7.35" height="7.3" fill="#f60800"/>
<rect x="225.12" y="441.10" width="7.35" height="7.3" fill="#fff000"/>
<rect x="232.34" y="441.10" width="7.35" height="7.3" fill="#ffcc00"/>
<rect x="239.56" y="441.10" width="7.35" height="7.3" fill="#ffaa00"/>
<rect x="246.78" y="441.10" width="7.35" height="7.3" fill="#ff8800"/>
<rect x="254.00" y="441.10" width="7.35" height="7.3" fill="#ff3000"/>
<rect x="109.60" y="448.30" width="7.35" height="7.3" fill="#00ff00"/>
<rect x="116.82" y="448.30" width="7.35" height="7.3" fill="#0fef00"/>
<rect x="124.04" y="448.30" width="7.35" height="7.3" fill="#1ee000"/>
<rect x="131.26" y="448.30" width="7.35" height="7.3" fill="#2ed000"/>
<rect x="138.48" y="448.30" width="7.35" height="7.3" fill="#3dc100"/>
<rect x="145.70" y="448.30" width="7.35" height="7.3" fill="#4db100"/>
<rect x="152.92" y="448.30" width="7.35" height="7.3" fill="#5ca200"/>
<rect x="160.14" y="448.30" width="7.35" height="7.3" fill="#6c9200"/>
<rect x="167.36" y="448.30" width="7.35" height="7.3" fill="#7b8300"/>
<rect x="174.58" y="448.30" width="7.35" height="7.3" fill="#8b7300"/>
<rect x="181.80" y="448.30" width="7.35" height="7.3" fill="#9a6400"/>
<rect x="189.02" y="448.30" width="7.35" height="7.3" fill="#aa5500"/>
<rect x="196.24" y="448.30" width="7.35" height="7.3" fill="#b94500"/>
<rect x="203.46" y="448.30" width="7.35" height="7.3" fill="#c83600"/>
<rect x="210.68" y="448.30" width="7.35" height="7.3" fill="#d82600"/>
<rect x="217.90" y="448.30" width="7.35" height="7.3" fill="#e71700"/>
<rect x="225.12" y="448.30" width="7.35" height="7.3" fill="#f70700"/>
<rect x="232.34" y="448.30" width="7.35" height="7.3" fill="#fff000"/>
<rect x="239.56" y="448.30" width="7.35" height="7.3" fill="#ffcc00"/>
<rect x="246.78" y="448.30" width="7.35" height="7.3" fill="#ffa000"/>
<rect x="254.00" y="448.30" width="7.35" height="7.3" fill="#ff6600"/>
<rect x="109.60" y="455.50" width="7.35" height="7.3" fill="#00ff00"/>
<rect x="116.82" y="455.50" width="7.35" height="7.3" fill="#0ef000"/>
<rect x="124.04" y="455.50" width="7.35" height="7.3" fill="#1de100"/>
<rect x="131.26" y="455.50" width="7.35" height="7.3" fill="#2bd300"/>
<rect x="138.48" y="455.50" width="7.35" height="7.3" fill="#3ac400"/>
<rect x="145.70" y="455.50" width="7.35" height="7.3" fill="#48b600"/>
<rect x="152.92" y="455.50" width="7.35" height="7.3" fill="#57a700"/>
<rect x="160.14" y="455.50" width="7.35" height="7.3" fill="#669900"/>
<rect x="167.36" y="455.50" width="7.35" height="7.3" fill="#748a00"/>
<rect x="174.58" y="455.50" width="7.35" height="7.3" fill="#837b00"/>
<rect x="181.80" y="455.50" width="7.35" height="7.3" fill="#916d00"/>
<rect x="189.02" y="455.50" width="7.35" height="7.3" fill="#a05e00"/>
<rect x="196.24" y="455.50" width="7.35" height="7.3" fill="#ae5000"/>
<rect x="203.46" y="455.50" width="7.35" height="7.3" fill="#bd4100"/>
<rect x="210.68" y="455.50" width="7.35" height="7.3" fill="#cc3200"/>
<rect x="217.90" y="455.50" width="7.35" height="7.3" fill="#da2400"/>
<rect x="225.12" y="455.50" width="7.35" height="7.3" fill="#e91500"/>
<rect x="232.34" y="455.50" width="7.35" height="7.3" fill="#f70700"/>
<rect x="239.56" y="455.50" width="7.35" height="7.3" fill="#fff000"/>
<rect x="246.78" y="455.50" width="7.35" height="7.3" fill="#ffd000"/>
<rect x="254.00" y="455.50" width="7.35" height="7.3" fill="#ffa800"/>
<rect x="109.60" y="462.70" width="7.35" height="7.3" fill="#00ff00"/>
<rect x="116.82" y="462.70" width="7.35" height="7.3" fill="#0df100"/>
<rect x="124.04" y="462.70" width="7.35" height="7.3" fill="#1be300"/>
<rect x="131.26" y="462.70" width="7.35" height="7.3" fill="#29d500"/>
<rect x="138.48" y="462.70" width="7.35" height="7.3" fill="#37c700"/>
<rect x="145.70" y="462.70" width="7.35" height="7.3" fill="#44ba00"/>
<rect x="152.92" y="462.70" width="7.35" height="7.3" fill="#52ac00"/>
<rect x="160.14" y="462.70" width="7.35" height="7.3" fill="#609e00"/>
<rect x="167.36" y="462.70" width="7.35" height="7.3" fill="#6e9000"/>
<rect x="174.58" y="462.70" width="7.35" height="7.3" fill="#7c8200"/>
<rect x="181.80" y="462.70" width="7.35" height="7.3" fill="#897500"/>
<rect x="189.02" y="462.70" width="7.35" height="7.3" fill="#976700"/>
<rect x="196.24" y="462.70" width="7.35" height="7.3" fill="#a55900"/>
<rect x="203.46" y="462.70" width="7.35" height="7.3" fill="#b34b00"/>
<rect x="210.68" y="462.70" width="7.35" height="7.3" fill="#c03e00"/>
<rect x="217.90" y="462.70" width="7.35" height="7.3" fill="#ce3000"/>
<rect x="225.12" y="462.70" width="7.35" height="7.3" fill="#dc2200"/>
<rect x="232.34" y="462.70" width="7.35" height="7.3" fill="#ea1400"/>
<rect x="239.56" y="462.70" width="7.35" height="7.3" fill="#f80600"/>
<rect x="246.78" y="462.70" width="7.35" height="7.3" fill="#ffee00"/>
<rect x="254.00" y="462.70" width="7.35" height="7.3" fill="#ffe000"/>
<rect x="109.60" y="469.90" width="7.35" height="7.3" fill="#00ff00"/>
<rect x="116.82" y="469.90" width="7.35" height="7.3" fill="#0af400"/>
<rect x="124.04" y="469.90" width="7.35" height="7.3" fill="#15e900"/>
<rect x="131.26" y="469.90" width="7.35" height="7.3" fill="#20de00"/>
<rect x="138.48" y="469.90" width="7.35" height="7.3" fill="#2bd300"/>
<rect x="145.70" y="469.90" width="7.35" height="7.3" fill="#36c800"/>
<rect x="152.92" y="469.90" width="7.35" height="7.3" fill="#41bd00"/>
<rect x="160.14" y="469.90" width="7.35" height="7.3" fill="#4bb300"/>
<rect x="167.36" y="469.90" width="7.35" height="7.3" fill="#56a800"/>
<rect x="174.58" y="469.90" width="7.35" height="7.3" fill="#619d00"/>
<rect x="181.80" y="469.90" width="7.35" height="7.3" fill="#6c9200"/>
<rect x="189.02" y="469.90" width="7.35" height="7.3" fill="#778700"/>
<rect x="196.24" y="469.90" width="7.35" height="7.3" fill="#827c00"/>
<rect x="203.46" y="469.90" width="7.35" height="7.3" fill="#8c7200"/>
<rect x="210.68" y="469.90" width="7.35" height="7.3" fill="#976700"/>
<rect x="217.90" y="469.90" width="7.35" height="7.3" fill="#a25c00"/>
<rect x="225.12" y="469.90" width="7.35" height="7.3" fill="#ad5100"/>
<rect x="232.34" y="469.90" width="7.35" height="7.3" fill="#b84600"/>
<rect x="239.56" y="469.90" width="7.35" height="7.3" fill="#c33b00"/>
<rect x="246.78" y="469.90" width="7.35" height="7.3" fill="#cd3100"/>
<rect x="254.00" y="469.90" width="7.35" height="7.3" fill="#d82600"/>
<rect x="109.60" y="477.10" width="7.35" height="7.3" fill="#00ff00"/>
<rect x="116.82" y="477.10" width="7.35" height="7.3" fill="#07f700"/>
<rect x="124.04" y="477.10" width="7.35" height="7.3" fill="#0ef000"/>
<rect x="131.26" y="477.10" width="7.35" height="7.3" fill="#15e900"/>
<rect x="138.48" y="477.10" width="7.35" height="7.3" fill="#1ce200"/>
<rect x="145.70" y="477.10" width="7.35" height="7.3" fill="#23db00"/>
<rect x="152.92" y="477.10" width="7.35" height="7.3" fill="#2ad400"/>
<rect x="160.14" y="477.10" width="7.35" height="7.3" fill="#31cd00"/>
<rect x="167.36" y="477.10" width="7.35" height="7.3" fill="#38c600"/>
<rect x="174.58" y="477.10" width="7.35" height="7.3" fill="#3fbf00"/>
<rect x="181.80" y="477.10" width="7.35" height="7.3" fill="#46b800"/>
<rect x="189.02" y="477.10" width="7.35" height="7.3" fill="#4db100"/>
<rect x="196.24" y="477.10" width="7.35" height="7.3" fill="#54aa00"/>
<rect x="203.46" y="477.10" width="7.35" height="7.3" fill="#5ba300"/>
<rect x="210.68" y="477.10" width="7.35" height="7.3" fill="#629c00"/>
<rect x="217.90" y="477.10" width="7.35" height="7.3" fill="#699500"/>
<rect x="225.12" y="477.10" width="7.35" height="7.3" fill="#708e00"/>
<rect x="232.34" y="477.10" width="7.35" height="7.3" fill="#778700"/>
<rect x="239.56" y="477.10" width="7.35" height="7.3" fill="#7e8000"/>
<rect x="246.78" y="477.10" width="7.35" height="7.3" fill="#857900"/>
<rect x="254.00" y="477.10" width="7.35" height="7.3" fill="#8c7200"/>
<rect x="109.60" y="484.30" width="7.35" height="7.3" fill="#00ff00"/>
<rect x="116.82" y="484.30" width="7.35" height="7.3" fill="#02fc00"/>
<rect x="124.04" y="484.30" width="7.35" height="7.3" fill="#05f900"/>
<rect x="131.26" y="484.30" width="7.35" height="7.3" fill="#07f700"/>
<rect x="138.48" y="484.30" width="7.35" height="7.3" fill="#0af400"/>
<rect x="145.70" y="484.30" width="7.35" height="7.3" fill="#0cf200"/>
<rect x="152.92" y="484.30" width="7.35" height="7.3" fill="#0fef00"/>
<rect x="160.14" y="484.30" width="7.35" height="7.3" fill="#11ed00"/>
<rect x="167.36" y="484.30" width="7.35" height="7.3" fill="#14ea00"/>
<rect x="174.58" y="484.30" width="7.35" height="7.3" fill="#16e800"/>
<rect x="181.80" y="484.30" width="7.35" height="7.3" fill="#19e500"/>
<rect x="189.02" y="484.30" width="7.35" height="7.3" fill="#1ce200"/>
<rect x="196.24" y="484.30" width="7.35" height="7.3" fill="#1ee000"/>
<rect x="203.46" y="484.30" width="7.35" height="7.3" fill="#21dd00"/>
<rect x="210.68" y="484.30" width="7.35" height="7.3" fill="#23db00"/>
<rect x="217.90" y="484.30" width="7.35" height="7.3" fill="#26d800"/>
<rect x="225.12" y="484.30" width="7.35" height="7.3" fill="#28d600"/>
<rect x="232.34" y="484.30" width="7.35" height="7.3" fill="#2bd300"/>
<rect x="239.56" y="484.30" width="7.35" height="7.3" fill="#2dd100"/>
<rect x="246.78" y="484.30" width="7.35" height="7.3" fill="#30ce00"/>
<rect x="254.00" y="484.30" width="7.35" height="7.3" fill="#33cc00"/>
<rect x="109.60" y="491.50" width="7.35" height="7.3" fill="#00ff00"/>
<rect x="116.82" y="491.50" width="7.35" height="7.3" fill="#00ff00"/>
<rect x="124.04" y="491.50" width="7.35" height="7.3" fill="#00ff00"/>
<rect x="131.26" y="491.50" width="7.35" height="7.3" fill="#00ff00"/>
<rect x="138.48" y="491.50" width="7.35" height="7.3" fill="#00ff00"/>
<rect x="145.70" y="491.50" width="7.35" height="7.3" fill="#00ff00"/>
<rect x="152.92" y="491.50" width="7.35" height="7.3" fill="#00ff00"/>
<rect x="160.14" y="491.50" width="7.35" height="7.3" fill="#00ff00"/>
<rect x="167.36" y="491.50" width="7.35" height="7.3" fill="#00ff00"/>
<rect x="174.58" y="491.50" width="7.35" height="7.3" fill="#00ff00"/>
<rect x="181.80" y="491.50" width="7.35" height="7.3" fill="#00ff00"/>
<rect x="189.02" y="491.50" width="7.35" height="7.3" fill="#00ff00"/>
<rect x="196.24" y="491.50" width="7.35" height="7.3" fill="#00ff00"/>
<rect x="203.46" y="491.50" width="7.35" height="7.3" fill="#00ff00"/>
<rect x="210.68" y="491.50" width="7.35" height="7.3" fill="#00ff00"/>
<rect x="217.90" y="491.50" width="7.35" height="7.3" fill="#00ff00"/>
<rect x="225.12" y="491.50" width="7.35" height="7.3" fill="#00ff00"/>
<rect x="232.34" y="491.50" width="7.35" height="7.3" fill="#00ff00"/>
<rect x="239.56" y="491.50" width="7.35" height="7.3" fill="#00ff00"/>
<rect x="246.78" y="491.50" width="7.35" height="7.3" fill="#00ff00"/>
<rect x="254.00" y="491.50" width="7.35" height="7.3" fill="#00ff00"/>
<rect x="109.60" y="498.70" width="7.35" height="7.3" fill="#00ff00"/>
<rect x="116.82" y="498.70" width="7.35" height="7.3" fill="#00ff02"/>
<rect x="124.04" y="498.70" width="7.35" height="7.3" fill="#00ff05"/>
<rect x="131.26" y="498.70" width="7.35" height="7.3" fill="#00ff07"/>
<rect x="138.48" y="498.70" width="7.35" height="7.3" fill="#00ff0a"/>
<rect x="145.70" y="498.70" width="7.35" height="7.3" fill="#00ff0c"/>
<rect x="152.92" y="498.70" width="7.35" height="7.3" fill="#00ff0f"/>
<rect x="160.14" y="498.70" width="7.35" height="7.3" fill="#00ff11"/>
<rect x="167.36" y="498.70" width="7.35" height="7.3" fill="#00ff14"/>
<rect x="174.58" y="498.70" width="7.35" height="7.3" fill="#00ff16"/>
<rect x="181.80" y="498.70" width="7.35" height="7.3" fill="#00ff19"/>
<rect x="189.02" y="498.70" width="7.35" height="7.3" fill="#00ff1c"/>
<rect x="196.24" y="498.70" width="7.35" height="7.3" fill="#00ff1e"/>
<rect x="203.46" y="498.70" width="7.35" height="7.3" fill="#00ff21"/>
<rect x="210.68" y="498.70" width="7.35" height="7.3" fill="#00ff23"/>
<rect x="217.90" y="498.70" width="7.35" height="7.3" fill="#00ff26"/>
<rect x="225.12" y="498.70" width="7.35" height="7.3" fill="#00ff28"/>
<rect x="232.34" y="498.70" width="7.35" height="7.3" fill="#00ff2b"/>
<rect x="239.56" y="498.70" width="7.35" height="7.3" fill="#00ff2d"/>
<rect x="246.78" y="498.70" width="7.35" height="7.3" fill="#00ff30"/>
<rect x="254.00" y="498.70" width="7.35" height="7.3" fill="#00ff33"/>
<rect x="109.60" y="505.90" width="7.35" height="7.3" fill="#00ff00"/>
<rect x="116.82" y="505.90" width="7.35" height="7.3" fill="#00ff06"/>
<rect x="124.04" y="505.90" width="7.35" height="7.3" fill="#00ff0c"/>
<rect x="131.26" y="505.90" width="7.35" height="7.3" fill="#00ff13"/>
<rect x="138.48" y="505.90" width="7.35" height="7.3" fill="#00ff19"/>
<rect x="145.70" y="505.90" width="7.35" height="7.3" fill="#00ff1f"/>
<rect x="152.92" y="505.90" width="7.35" height="7.3" fill="#00ff26"/>
<rect x="160.14" y="505.90" width="7.35" height="7.3" fill="#00ff2c"/>
<rect x="167.36" y="505.90" width="7.35" height="7.3" fill="#00ff33"/>
<rect x="174.58" y="505.90" width="7.35" height="7.3" fill="#00ff39"/>
<rect x="181.80" y="505.90" width="7.35" height="7.3" fill="#00ff3f"/>
<rect x="189.02" y="505.90" width="7.35" height="7.3" fill="#00ff46"/>
<rect x="196.24" y="505.90" width="7.35" height="7.3" fill="#00ff4c"/>
<rect x="203.46" y="505.90" width="7.35" height="7.3" fill="#00ff52"/>
<rect x="210.68" y="505.90" width="7.35" height="7.3" fill="#00ff59"/>
<rect x="217.90" y="505.90" width="7.35" height="7.3" fill="#00ff5f"/>
<rect x="225.12" y="505.90" width="7.35" height="7.3" fill="#00ff66"/>
<rect x="232.34" y="505.90" width="7.35" height="7.3" fill="#00ff6c"/>
<rect x="239.56" y="505.90" width="7.35" height="7.3" fill="#00ff72"/>
<rect x="246.78" y="505.90" width="7.35" height="7.3" fill="#00ff79"/>
<rect x="254.00" y="505.90" width="7.35" height="7.3" fill="#00ff7f"/>
<rect x="109.60" y="513.10" width="7.35" height="7.3" fill="#00ff00"/>
<rect x="116.82" y="513.10" width="7.35" height="7.3" fill="#00ff0b"/>
<rect x="124.04" y="513.10" width="7.35" height="7.3" fill="#00ff16"/>
<rect x="131.26" y="513.10" width="7.35" height="7.3" fill="#00ff22"/>
<rect x="138.48" y="513.10" width="7.35" height="7.3" fill="#00ff2d"/>
<rect x="145.70" y="513.10" width="7.35" height="7.3" fill="#00ff39"/>
<rect x="152.92" y="513.10" width="7.35" height="7.3" fill="#00ff44"/>
<rect x="160.14" y="513.10" width="7.35" height="7.3" fill="#00ff50"/>
<rect x="167.36" y="513.10" width="7.35" height="7.3" fill="#00ff5b"/>
<rect x="174.58" y="513.10" width="7.35" height="7.3" fill="#00ff67"/>
<rect x="181.80" y="513.10" width="7.35" height="7.3" fill="#00ff72"/>
<rect x="189.02" y="513.10" width="7.35" height="7.3" fill="#00ff7e"/>
<rect x="196.24" y="513.10" width="7.35" height="7.3" fill="#00ff89"/>
<rect x="203.46" y="513.10" width="7.35" height="7.3" fill="#00ff95"/>
<rect x="210.68" y="513.10" width="7.35" height="7.3" fill="#00ffa0"/>
<rect x="217.90" y="513.10" width="7.35" height="7.3" fill="#00ffac"/>
<rect x="225.12" y="513.10" width="7.35" height="7.3" fill="#00ffb7"/>
<rect x="232.34" y="513.10" width="7.35" height="7.3" fill="#00ffc3"/>
<rect x="239.56" y="513.10" width="7.35" height="7.3" fill="#00ffce"/>
<rect x="246.78" y="513.10" width="7.35" height="7.3" fill="#00ffda"/>
<rect x="254.00" y="513.10" width="7.35" height="7.3" fill="#00ffe5"/>
<rect x="109.60" y="520.30" width="7.35" height="7.3" fill="#00ff00"/>
<rect x="116.82" y="520.30" width="7.35" height="7.3" fill="#00ff0f"/>
<rect x="124.04" y="520.30" width="7.35" height="7.3" fill="#00ff1f"/>
<rect x="131.26" y="520.30" width="7.35" height="7.3" fill="#00ff2f"/>
<rect x="138.48" y="520.30" width="7.35" height="7.3" fill="#00ff3f"/>
<rect x="145.70" y="520.30" width="7.35" height="7.3" fill="#00ff4f"/>
<rect x="152.92" y="520.30" width="7.35" height="7.3" fill="#00ff5f"/>
<rect x="160.14" y="520.30" width="7.35" height="7.3" fill="#00ff6f"/>
<rect x="167.36" y="520.30" width="7.35" height="7.3" fill="#00ff7f"/>
<rect x="174.58" y="520.30" width="7.35" height="7.3" fill="#00ff8f"/>
<rect x="181.80" y="520.30" width="7.35" height="7.3" fill="#00ff9f"/>
<rect x="189.02" y="520.30" width="7.35" height="7.3" fill="#00ffaf"/>
<rect x="196.24" y="520.30" width="7.35" height="7.3" fill="#00ffbf"/>
<rect x="203.46" y="520.30" width="7.35" height="7.3" fill="#00ffcf"/>
<rect x="210.68" y="520.30" width="7.35" height="7.3" fill="#00ffdf"/>
<rect x="217.90" y="520.30" width="7.35" height="7.3" fill="#00ffef"/>
<rect x="225.12" y="520.30" width="7.35" height="7.3" fill="#00ffff"/>
<rect x="232.34" y="520.30" width="7.35" height="7.3" fill="#00efff"/>
<rect x="239.56" y="520.30" width="7.35" height="7.3" fill="#00dfff"/>
<rect x="246.78" y="520.30" width="7.35" height="7.3" fill="#00cfff"/>
<rect x="254.00" y="520.30" width="7.35" height="7.3" fill="#00bfff"/>
<rect x="109.60" y="527.50" width="7.35" height="7.3" fill="#00ff00"/>
<rect x="116.82" y="527.50" width="7.35" height="7.3" fill="#00ff12"/>
<rect x="124.04" y="527.50" width="7.35" height="7.3" fill="#00ff24"/>
<rect x="131.26" y="527.50" width="7.35" height="7.3" fill="#00ff36"/>
<rect x="138.48" y="527.50" width="7.35" height="7.3" fill="#00ff48"/>
<rect x="145.70" y="527.50" width="7.35" height="7.3" fill="#00ff5b"/>
<rect x="152.92" y="527.50" width="7.35" height="7.3" fill="#00ff6d"/>
<rect x="160.14" y="527.50" width="7.35" height="7.3" fill="#00ff7f"/>
<rect x="167.36" y="527.50" width="7.35" height="7.3" fill="#00ff91"/>
<rect x="174.58" y="527.50" width="7.35" height="7.3" fill="#00ffa4"/>
<rect x="181.80" y="527.50" width="7.35" height="7.3" fill="#00ffb6"/>
<rect x="189.02" y="527.50" width="7.35" height="7.3" fill="#00ffc8"/>
<rect x="196.24" y="527.50" width="7.35" height="7.3" fill="#00ffda"/>
<rect x="203.46" y="527.50" width="7.35" height="7.3" fill="#00ffed"/>
<rect x="210.68" y="527.50" width="7.35" height="7.3" fill="#00feff"/>
<rect x="217.90" y="527.50" width="7.35" height="7.3" fill="#00ecff"/>
<rect x="225.12" y="527.50" width="7.35" height="7.3" fill="#00daff"/>
<rect x="232.34" y="527.50" width="7.35" height="7.3" fill="#00c8ff"/>
<rect x="239.56" y="527.50" width="7.35" height="7.3" fill="#00b5ff"/>
<rect x="246.78" y="527.50" width="7.35" height="7.3" fill="#00a3ff"/>
<rect x="254.00" y="527.50" width="7.35" height="7.3" fill="#0091ff"/>
<rect x="109.60" y="534.70" width="7.35" height="7.3" fill="#00ff00"/>
<rect x="116.82" y="534.70" width="7.35" height="7.3" fill="#00ff14"/>
<rect x="124.04" y="534.70" width="7.35" height="7.3" fill="#00ff28"/>
<rect x="131.26" y="534.70" width="7.35" height="7.3" fill="#00ff3d"/>
<rect x="138.48" y="534.70" width="7.35" height="7.3" fill="#00ff51"/>
<rect x="145.70" y="534.70" width="7.35" height="7.3" fill="#00ff66"/>
<rect x="152.92" y="534.70" width="7.35" height="7.3" fill="#00ff7a"/>
<rect x="160.14" y="534.70" width="7.35" height="7.3" fill="#00ff8e"/>
<rect x="167.36" y="534.70" width="7.35" height="7.3" fill="#00ffa3"/>
<rect x="174.58" y="534.70" width="7.35" height="7.3" fill="#00ffb7"/>
<rect x="181.80" y="534.70" width="7.35" height="7.3" fill="#00ffcc"/>
<rect x="189.02" y="534.70" width="7.35" height="7.3" fill="#00ffe0"/>
<rect x="196.24" y="534.70" width="7.35" height="7.3" fill="#00fff4"/>
<rect x="203.46" y="534.70" width="7.35" height="7.3" fill="#00f4ff"/>
<rect x="210.68" y="534.70" width="7.35" height="7.3" fill="#00e0ff"/>
<rect x="217.90" y="534.70" width="7.35" height="7.3" fill="#00ccff"/>
<rect x="225.12" y="534.70" width="7.35" height="7.3" fill="#00b7ff"/>
<rect x="232.34" y="534.70" width="7.35" height="7.3" fill="#00a3ff"/>
<rect x="239.56" y="534.70" width="7.35" height="7.3" fill="#008eff"/>
<rect x="246.78" y="534.70" width="7.35" height="7.3" fill="#007aff"/>
<rect x="254.00" y="534.70" width="7.35" height="7.3" fill="#0065ff"/>
<rect x="109.60" y="541.90" width="7.35" height="7.3" fill="#00ff00"/>
<rect x="116.82" y="541.90" width="7.35" height="7.3" fill="#00ff16"/>
<rect x="124.04" y="541.90" width="7.35" height="7.3" fill="#00ff2c"/>
<rect x="131.26" y="541.90" width="7.35" height="7.3" fill="#00ff42"/>
<rect x="138.48" y="541.90" width="7.35" height="7.3" fill="#00ff58"/>
<rect x="145.70" y="541.90" width="7.35" height="7.3" fill="#00ff6e"/>
<rect x="152.92" y="541.90" width="7.35" height="7.3" fill="#00ff85"/>
<rect x="160.14" y="541.90" width="7.35" height="7.3" fill="#00ff9b"/>
<rect x="167.36" y="541.90" width="7.35" height="7.3" fill="#00ffb1"/>
<rect x="174.58" y="541.90" width="7.35" height="7.3" fill="#00ffc7"/>
<rect x="181.80" y="541.90" width="7.35" height="7.3" fill="#00ffdd"/>
<rect x="189.02" y="541.90" width="7.35" height="7.3" fill="#00fff4"/>
<rect x="196.24" y="541.90" width="7.35" height="7.3" fill="#00f3ff"/>
<rect x="203.46" y="541.90" width="7.35" height="7.3" fill="#00ddff"/>
<rect x="210.68" y="541.90" width="7.35" height="7.3" fill="#00c7ff"/>
<rect x="217.90" y="541.90" width="7.35" height="7.3" fill="#00b1ff"/>
<rect x="225.12" y="541.90" width="7.35" height="7.3" fill="#009bff"/>
<rect x="232.34" y="541.90" width="7.35" height="7.3" fill="#0084ff"/>
<rect x="239.56" y="541.90" width="7.35" height="7.3" fill="#006eff"/>
<rect x="246.78" y="541.90" width="7.35" height="7.3" fill="#0058ff"/>
<rect x="254.00" y="541.90" width="7.35" height="7.3" fill="#0042ff"/>
<rect x="109.60" y="549.10" width="7.35" height="7.3" fill="#00ff00"/>
<rect x="116.82" y="549.10" width="7.35" height="7.3" fill="#00ff17"/>
<rect x="124.04" y="549.10" width="7.35" height="7.3" fill="#00ff2f"/>
<rect x="131.26" y="549.10" width="7.35" height="7.3" fill="#00ff46"/>
<rect x="138.48" y="549.10" width="7.35" height="7.3" fill="#00ff5e"/>
<rect x="145.70" y="549.10" width="7.35" height="7.3" fill="#00ff75"/>
<rect x="152.92" y="549.10" width="7.35" height="7.3" fill="#00ff8d"/>
<rect x="160.14" y="549.10" width="7.35" height="7.3" fill="#00ffa5"/>
<rect x="167.36" y="549.10" width="7.35" height="7.3" fill="#00ffbc"/>
<rect x="174.58" y="549.10" width="7.35" height="7.3" fill="#00ffd4"/>
<rect x="181.80" y="549.10" width="7.35" height="7.3" fill="#00ffeb"/>
<rect x="189.02" y="549.10" width="7.35" height="7.3" fill="#00faff"/>
<rect x="196.24" y="549.10" width="7.35" height="7.3" fill="#00e2ff"/>
<rect x="203.46" y="549.10" width="7.35" height="7.3" fill="#00cbff"/>
<rect x="210.68" y="549.10" width="7.35" height="7.3" fill="#00b3ff"/>
<rect x="217.90" y="549.10" width="7.35" height="7.3" fill="#009cff"/>
<rect x="225.12" y="549.10" width="7.35" height="7.3" fill="#0084ff"/>
<rect x="232.34" y="549.10" width="7.35" height="7.3" fill="#006dff"/>
<rect x="239.56" y="549.10" width="7.35" height="7.3" fill="#0055ff"/>
<rect x="246.78" y="549.10" width="7.35" height="7.3" fill="#003dff"/>
<rect x="254.00" y="549.10" width="7.35" height="7.3" fill="#0026ff"/>
<rect x="109.60" y="556.30" width="7.35" height="7.3" fill="#00ff00"/>
<rect x="116.82" y="556.30" width="7.35" height="7.3" fill="#00ff18"/>
<rect x="124.04" y="556.30" width="7.35" height="7.3" fill="#00ff30"/>
<rect x="131.26" y="556.30" width="7.35" height="7.3" fill="#00ff48"/>
<rect x="138.48" y="556.30" width="7.35" height="7.3" fill="#00ff60"/>
<rect x="145.70" y="556.30" width="7.35" height="7.3" fill="#00ff79"/>
<rect x="152.92" y="556.30" width="7.35" height="7.3" fill="#00ff91"/>
<rect x="160.14" y="556.30" width="7.35" height="7.3" fill="#00ffa9"/>
<rect x="167.36" y="556.30" width="7.35" height="7.3" fill="#00ffc1"/>
<rect x="174.58" y="556.30" width="7.35" height="7.3" fill="#00ffda"/>
<rect x="181.80" y="556.30" width="7.35" height="7.3" fill="#00fff2"/>
<rect x="189.02" y="556.30" width="7.35" height="7.3" fill="#00f3ff"/>
<rect x="196.24" y="556.30" width="7.35" height="7.3" fill="#00dbff"/>
<rect x="203.46" y="556.30" width="7.35" height="7.3" fill="#00c3ff"/>
<rect x="210.68" y="556.30" width="7.35" height="7.3" fill="#00aaff"/>
<rect x="217.90" y="556.30" width="7.35" height="7.3" fill="#0092ff"/>
<rect x="225.12" y="556.30" width="7.35" height="7.3" fill="#007aff"/>
<rect x="232.34" y="556.30" width="7.35" height="7.3" fill="#0062ff"/>
<rect x="239.56" y="556.30" width="7.35" height="7.3" fill="#0049ff"/>
<rect x="246.78" y="556.30" width="7.35" height="7.3" fill="#0031ff"/>
<rect x="254.00" y="556.30" width="7.35" height="7.3" fill="#0019ff"/>
</g>
<rect x="109.6" y="268.3" width="151.62" height="295.2" fill="none" stroke="#000" stroke-width="0.9"/>
<line x1="106.0" y1="271.90" x2="109.6" y2="271.90" stroke="#000" stroke-width="0.9"/>
<text x="101.1" y="276.3" font-size="11" fill="#262626" textLength="6.35" lengthAdjust="spacingAndGlyphs" text-anchor="end" stroke="#262626" stroke-width="0.2">0</text>
<line x1="106.0" y1="307.90" x2="109.6" y2="307.90" stroke="#000" stroke-width="0.9"/>
<text x="101.1" y="312.3" font-size="11" fill="#262626" textLength="6.35" lengthAdjust="spacingAndGlyphs" text-anchor="end" stroke="#262626" stroke-width="0.2">5</text>
<line x1="106.0" y1="343.90" x2="109.6" y2="343.90" stroke="#000" stroke-width="0.9"/>
<text x="101.1" y="348.3" font-size="11" fill="#262626" textLength="12.7" lengthAdjust="spacingAndGlyphs" text-anchor="end" stroke="#262626" stroke-width="0.2">10</text>
<line x1="106.0" y1="379.90" x2="109.6" y2="379.90" stroke="#000" stroke-width="0.9"/>
<text x="101.1" y="384.3" font-size="11" fill="#262626" textLength="12.7" lengthAdjust="spacingAndGlyphs" text-anchor="end" stroke="#262626" stroke-width="0.2">15</text>
<line x1="106.0" y1="415.90" x2="109.6" y2="415.90" stroke="#000" stroke-width="0.9"/>
<text x="101.1" y="420.29999999999995" font-size="11" fill="#262626" textLength="12.7" lengthAdjust="spacingAndGlyphs" text-anchor="end" stroke="#262626" stroke-width="0.2">20</text>
<line x1="106.0" y1="451.90" x2="109.6" y2="451.90" stroke="#000" stroke-width="0.9"/>
<text x="101.1" y="456.29999999999995" font-size="11" fill="#262626" textLength="12.7" lengthAdjust="spacingAndGlyphs" text-anchor="end" stroke="#262626" stroke-width="0.2">25</text>
<line x1="106.0" y1="487.90" x2="109.6" y2="487.90" stroke="#000" stroke-width="0.9"/>
<text x="101.1" y="492.29999999999995" font-size="11" fill="#262626" textLength="12.7" lengthAdjust="spacingAndGlyphs" text-anchor="end" stroke="#262626" stroke-width="0.2">30</text>
<line x1="106.0" y1="523.90" x2="109.6" y2="523.90" stroke="#000" stroke-width="0.9"/>
<text x="101.1" y="528.3" font-size="11" fill="#262626" textLength="12.7" lengthAdjust="spacingAndGlyphs" text-anchor="end" stroke="#262626" stroke-width="0.2">35</text>
<line x1="106.0" y1="559.90" x2="109.6" y2="559.90" stroke="#000" stroke-width="0.9"/>
<text x="101.1" y="564.3000000000001" font-size="11" fill="#262626" textLength="12.7" lengthAdjust="spacingAndGlyphs" text-anchor="end" stroke="#262626" stroke-width="0.2">40</text>
<line x1="113.21" y1="563.5" x2="113.21" y2="567.1" stroke="#000" stroke-width="0.9"/>
<text x="113.21" y="580.0" font-size="11" fill="#262626" textLength="6.35" lengthAdjust="spacingAndGlyphs" text-anchor="middle" stroke="#262626" stroke-width="0.2">0</text>
<line x1="185.41" y1="563.5" x2="185.41" y2="567.1" stroke="#000" stroke-width="0.9"/>
<text x="185.41" y="580.0" font-size="11" fill="#262626" textLength="12.7" lengthAdjust="spacingAndGlyphs" text-anchor="middle" stroke="#262626" stroke-width="0.2">10</text>
<line x1="257.61" y1="563.5" x2="257.61" y2="567.1" stroke="#000" stroke-width="0.9"/>
<text x="257.61" y="580.0" font-size="11" fill="#262626" textLength="12.7" lengthAdjust="spacingAndGlyphs" text-anchor="middle" stroke="#262626" stroke-width="0.2">20</text>
<text x="185.6" y="260.8" font-size="13.5" fill="#262626" textLength="56.8" lengthAdjust="spacingAndGlyphs" text-anchor="middle" stroke="#262626" stroke-width="0.2">Potential</text>
<g shape-rendering="crispEdges">
<rect x="326.30" y="268.30" width="7.35" height="7.3" fill="#000000"/>
<rect x="333.52" y="268.30" width="7.35" height="7.3" fill="#000000"/>
<rect x="340.74" y="268.30" width="7.35" height="7.3" fill="#000000"/>
<rect x="347.96" y="268.30" width="7.35" height="7.3" fill="#000000"/>
<rect x="355.18" y="268.30" width="7.35" height="7.3" fill="#000000"/>
<rect x="362.40" y="268.30" width="7.35" height="7.3" fill="#000000"/>
<rect x="369.62" y="268.30" width="7.35" height="7.3" fill="#000000"/>
<rect x="376.84" y="268.30" width="7.35" height="7.3" fill="#000000"/>
<rect x="384.06" y="268.30" width="7.35" height="7.3" fill="#000000"/>
<rect x="391.28" y="268.30" width="7.35" height="7.3" fill="#000000"/>
<rect x="398.50" y="268.30" width="7.35" height="7.3" fill="#000000"/>
<rect x="405.72" y="268.30" width="7.35" height="7.3" fill="#000000"/>
<rect x="412.94" y="268.30" width="7.35" height="7.3" fill="#000000"/>
<rect x="420.16" y="268.30" width="7.35" height="7.3" fill="#000000"/>
<rect x="427.38" y="268.30" width="7.35" height="7.3" fill="#000000"/>
<rect x="434.60" y="268.30" width="7.35" height="7.3" fill="#000000"/>
<rect x="441.82" y="268.30" width="7.35" height="7.3" fill="#000000"/>
<rect x="449.04" y="268.30" width="7.35" height="7.3" fill="#000000"/>
<rect x="456.26" y="268.30" width="7.35" height="7.3" fill="#000000"/>
<rect x="463.48" y="268.30" width="7.35" height="7.3" fill="#000000"/>
<rect x="470.70" y="268.30" width="7.35" height="7.3" fill="#000000"/>
<rect x="326.30" y="275.50" width="7.35" height="7.3" fill="#000000"/>
<rect x="333.52" y="275.50" width="7.35" height="7.3" fill="#000000"/>
<rect x="340.74" y="275.50" width="7.35" height="7.3" fill="#000000"/>
<rect x="347.96" y="275.50" width="7.35" height="7.3" fill="#000000"/>
<rect x="355.18" y="275.50" width="7.35" height="7.3" fill="#000000"/>
<rect x="362.40" y="275.50" width="7.35" height="7.3" fill="#000000"/>
<rect x="369.62" y="275.50" width="7.35" height="7.3" fill="#000000"/>
<rect x="376.84" y="275.50" width="7.35" height="7.3" fill="#000000"/>
<rect x="384.06" y="275.50" width="7.35" height="7.3" fill="#000000"/>
<rect x="391.28" y="275.50" width="7.35" height="7.3" fill="#000000"/>
<rect x="398.50" y="275.50" width="7.35" height="7.3" fill="#000000"/>
<rect x="405.72" y="275.50" width="7.35" height="7.3" fill="#000000"/>
<rect x="412.94" y="275.50" width="7.35" height="7.3" fill="#000000"/>
<rect x="420.16" y="275.50" width="7.35" height="7.3" fill="#000000"/>
<rect x="427.38" y="275.50" width="7.35" height="7.3" fill="#000000"/>
<rect x="434.60" y="275.50" width="7.35" height="7.3" fill="#000000"/>
<rect x="441.82" y="275.50" width="7.35" height="7.3" fill="#000000"/>
<rect x="449.04" y="275.50" width="7.35" height="7.3" fill="#000000"/>
<rect x="456.26" y="275.50" width="7.35" height="7.3" fill="#000000"/>
<rect x="463.48" y="275.50" width="7.35" height="7.3" fill="#000000"/>
<rect x="470.70" y="275.50" width="7.35" height="7.3" fill="#000000"/>
<rect x="326.30" y="282.70" width="7.35" height="7.3" fill="#000000"/>
<rect x="333.52" y="282.70" width="7.35" height="7.3" fill="#000000"/>
<rect x="340.74" y="282.70" width="7.35" height="7.3" fill="#000000"/>
<rect x="347.96" y="282.70" width="7.35" height="7.3" fill="#000000"/>
<rect x="355.18" y="282.70" width="7.35" height="7.3" fill="#000000"/>
<rect x="362.40" y="282.70" width="7.35" height="7.3" fill="#000000"/>
<rect x="369.62" y="282.70" width="7.35" height="7.3" fill="#000000"/>
<rect x="376.84" y="282.70" width="7.35" height="7.3" fill="#000000"/>
<rect x="384.06" y="282.70" width="7.35" height="7.3" fill="#000000"/>
<rect x="391.28" y="282.70" width="7.35" height="7.3" fill="#000000"/>
<rect x="398.50" y="282.70" width="7.35" height="7.3" fill="#000000"/>
<rect x="405.72" y="282.70" width="7.35" height="7.3" fill="#000000"/>
<rect x="412.94" y="282.70" width="7.35" height="7.3" fill="#000000"/>
<rect x="420.16" y="282.70" width="7.35" height="7.3" fill="#000000"/>
<rect x="427.38" y="282.70" width="7.35" height="7.3" fill="#000000"/>
<rect x="434.60" y="282.70" width="7.35" height="7.3" fill="#000000"/>
<rect x="441.82" y="282.70" width="7.35" height="7.3" fill="#000000"/>
<rect x="449.04" y="282.70" width="7.35" height="7.3" fill="#000000"/>
<rect x="456.26" y="282.70" width="7.35" height="7.3" fill="#000000"/>
<rect x="463.48" y="282.70" width="7.35" height="7.3" fill="#000000"/>
<rect x="470.70" y="282.70" width="7.35" height="7.3" fill="#000000"/>
<rect x="326.30" y="289.90" width="7.35" height="7.3" fill="#000000"/>
<rect x="333.52" y="289.90" width="7.35" height="7.3" fill="#000000"/>
<rect x="340.74" y="289.90" width="7.35" height="7.3" fill="#000000"/>
<rect x="347.96" y="289.90" width="7.35" height="7.3" fill="#000000"/>
<rect x="355.18" y="289.90" width="7.35" height="7.3" fill="#000000"/>
<rect x="362.40" y="289.90" width="7.35" height="7.3" fill="#000000"/>
<rect x="369.62" y="289.90" width="7.35" height="7.3" fill="#000000"/>
<rect x="376.84" y="289.90" width="7.35" height="7.3" fill="#000000"/>
<rect x="384.06" y="289.90" width="7.35" height="7.3" fill="#000000"/>
<rect x="391.28" y="289.90" width="7.35" height="7.3" fill="#000000"/>
<rect x="398.50" y="289.90" width="7.35" height="7.3" fill="#000000"/>
<rect x="405.72" y="289.90" width="7.35" height="7.3" fill="#000000"/>
<rect x="412.94" y="289.90" width="7.35" height="7.3" fill="#000000"/>
<rect x="420.16" y="289.90" width="7.35" height="7.3" fill="#000000"/>
<rect x="427.38" y="289.90" width="7.35" height="7.3" fill="#000000"/>
<rect x="434.60" y="289.90" width="7.35" height="7.3" fill="#000000"/>
<rect x="441.82" y="289.90" width="7.35" height="7.3" fill="#000000"/>
<rect x="449.04" y="289.90" width="7.35" height="7.3" fill="#000000"/>
<rect x="456.26" y="289.90" width="7.35" height="7.3" fill="#000000"/>
<rect x="463.48" y="289.90" width="7.35" height="7.3" fill="#000000"/>
<rect x="470.70" y="289.90" width="7.35" height="7.3" fill="#000000"/>
<rect x="326.30" y="297.10" width="7.35" height="7.3" fill="#000000"/>
<rect x="333.52" y="297.10" width="7.35" height="7.3" fill="#000000"/>
<rect x="340.74" y="297.10" width="7.35" height="7.3" fill="#000000"/>
<rect x="347.96" y="297.10" width="7.35" height="7.3" fill="#000000"/>
<rect x="355.18" y="297.10" width="7.35" height="7.3" fill="#000000"/>
<rect x="362.40" y="297.10" width="7.35" height="7.3" fill="#000000"/>
<rect x="369.62" y="297.10" width="7.35" height="7.3" fill="#000000"/>
<rect x="376.84" y="297.10" width="7.35" height="7.3" fill="#000000"/>
<rect x="384.06" y="297.10" width="7.35" height="7.3" fill="#000000"/>
<rect x="391.28" y="297.10" width="7.35" height="7.3" fill="#000000"/>
<rect x="398.50" y="297.10" width="7.35" height="7.3" fill="#000000"/>
<rect x="405.72" y="297.10" width="7.35" height="7.3" fill="#000000"/>
<rect x="412.94" y="297.10" width="7.35" height="7.3" fill="#000000"/>
<rect x="420.16" y="297.10" width="7.35" height="7.3" fill="#000000"/>
<rect x="427.38" y="297.10" width="7.35" height="7.3" fill="#000000"/>
<rect x="434.60" y="297.10" width="7.35" height="7.3" fill="#000000"/>
<rect x="441.82" y="297.10" width="7.35" height="7.3" fill="#000000"/>
<rect x="449.04" y="297.10" width="7.35" height="7.3" fill="#000000"/>
<rect x="456.26" y="297.10" width="7.35" height="7.3" fill="#000000"/>
<rect x="463.48" y="297.10" width="7.35" height="7.3" fill="#000000"/>
<rect x="470.70" y="297.10" width="7.35" height="7.3" fill="#000000"/>
<rect x="326.30" y="304.30" width="7.35" height="7.3" fill="#000000"/>
<rect x="333.52" y="304.30" width="7.35" height="7.3" fill="#000000"/>
<rect x="340.74" y="304.30" width="7.35" height="7.3" fill="#000000"/>
<rect x="347.96" y="304.30" width="7.35" height="7.3" fill="#000000"/>
<rect x="355.18" y="304.30" width="7.35" height="7.3" fill="#000000"/>
<rect x="362.40" y="304.30" width="7.35" height="7.3" fill="#000000"/>
<rect x="369.62" y="304.30" width="7.35" height="7.3" fill="#000000"/>
<rect x="376.84" y="304.30" width="7.35" height="7.3" fill="#000000"/>
<rect x="384.06" y="304.30" width="7.35" height="7.3" fill="#000000"/>
<rect x="391.28" y="304.30" width="7.35" height="7.3" fill="#000000"/>
<rect x="398.50" y="304.30" width="7.35" height="7.3" fill="#000000"/>
<rect x="405.72" y="304.30" width="7.35" height="7.3" fill="#000000"/>
<rect x="412.94" y="304.30" width="7.35" height="7.3" fill="#000000"/>
<rect x="420.16" y="304.30" width="7.35" height="7.3" fill="#000000"/>
<rect x="427.38" y="304.30" width="7.35" height="7.3" fill="#000000"/>
<rect x="434.60" y="304.30" width="7.35" height="7.3" fill="#000000"/>
<rect x="441.82" y="304.30" width="7.35" height="7.3" fill="#000000"/>
<rect x="449.04" y="304.30" width="7.35" height="7.3" fill="#000000"/>
<rect x="456.26" y="304.30" width="7.35" height="7.3" fill="#000000"/>
<rect x="463.48" y="304.30" width="7.35" height="7.3" fill="#000000"/>
<rect x="470.70" y="304.30" width="7.35" height="7.3" fill="#000000"/>
<rect x="326.30" y="311.50" width="7.35" height="7.3" fill="#000000"/>
<rect x="333.52" y="311.50" width="7.35" height="7.3" fill="#000000"/>
<rect x="340.74" y="311.50" width="7.35" height="7.3" fill="#000000"/>
<rect x="347.96" y="311.50" width="7.35" height="7.3" fill="#000000"/>
<rect x="355.18" y="311.50" width="7.35" height="7.3" fill="#000000"/>
<rect x="362.40" y="311.50" width="7.35" height="7.3" fill="#000000"/>
<rect x="369.62" y="311.50" width="7.35" height="7.3" fill="#000000"/>
<rect x="376.84" y="311.50" width="7.35" height="7.3" fill="#000000"/>
<rect x="384.06" y="311.50" width="7.35" height="7.3" fill="#000000"/>
<rect x="391.28" y="311.50" width="7.35" height="7.3" fill="#000000"/>
<rect x="398.50" y="311.50" width="7.35" height="7.3" fill="#000000"/>
<rect x="405.72" y="311.50" width="7.35" height="7.3" fill="#000000"/>
<rect x="412.94" y="311.50" width="7.35" height="7.3" fill="#000000"/>
<rect x="420.16" y="311.50" width="7.35" height="7.3" fill="#000000"/>
<rect x="427.38" y="311.50" width="7.35" height="7.3" fill="#000000"/>
<rect x="434.60" y="311.50" width="7.35" height="7.3" fill="#000000"/>
<rect x="441.82" y="311.50" width="7.35" height="7.3" fill="#000000"/>
<rect x="449.04" y="311.50" width="7.35" height="7.3" fill="#000000"/>
<rect x="456.26" y="311.50" width="7.35" height="7.3" fill="#000000"/>
<rect x="463.48" y="311.50" width="7.35" height="7.3" fill="#000000"/>
<rect x="470.70" y="311.50" width="7.35" height="7.3" fill="#000000"/>
<rect x="326.30" y="318.70" width="7.35" height="7.3" fill="#000000"/>
<rect x="333.52" y="318.70" width="7.35" height="7.3" fill="#000000"/>
<rect x="340.74" y="318.70" width="7.35" height="7.3" fill="#000000"/>
<rect x="347.96" y="318.70" width="7.35" height="7.3" fill="#000000"/>
<rect x="355.18" y="318.70" width="7.35" height="7.3" fill="#000000"/>
<rect x="362.40" y="318.70" width="7.35" height="7.3" fill="#000000"/>
<rect x="369.62" y="318.70" width="7.35" height="7.3" fill="#000000"/>
<rect x="376.84" y="318.70" width="7.35" height="7.3" fill="#000000"/>
<rect x="384.06" y="318.70" width="7.35" height="7.3" fill="#000000"/>
<rect x="391.28" y="318.70" width="7.35" height="7.3" fill="#000000"/>
<rect x="398.50" y="318.70" width="7.35" height="7.3" fill="#000000"/>
<rect x="405.72" y="318.70" width="7.35" height="7.3" fill="#000000"/>
<rect x="412.94" y="318.70" width="7.35" height="7.3" fill="#000000"/>
<rect x="420.16" y="318.70" width="7.35" height="7.3" fill="#000000"/>
<rect x="427.38" y="318.70" width="7.35" height="7.3" fill="#000000"/>
<rect x="434.60" y="318.70" width="7.35" height="7.3" fill="#000000"/>
<rect x="441.82" y="318.70" width="7.35" height="7.3" fill="#000000"/>
<rect x="449.04" y="318.70" width="7.35" height="7.3" fill="#000000"/>
<rect x="456.26" y="318.70" width="7.35" height="7.3" fill="#000000"/>
<rect x="463.48" y="318.70" width="7.35" height="7.3" fill="#000000"/>
<rect x="470.70" y="318.70" width="7.35" height="7.3" fill="#000000"/>
<rect x="326.30" y="325.90" width="7.35" height="7.3" fill="#000000"/>
<rect x="333.52" y="325.90" width="7.35" height="7.3" fill="#000000"/>
<rect x="340.74" y="325.90" width="7.35" height="7.3" fill="#000000"/>
<rect x="347.96" y="325.90" width="7.35" height="7.3" fill="#000000"/>
<rect x="355.18" y="325.90" width="7.35" height="7.3" fill="#000000"/>
<rect x="362.40" y="325.90" width="7.35" height="7.3" fill="#000000"/>
<rect x="369.62" y="325.90" width="7.35" height="7.3" fill="#000000"/>
<rect x="376.84" y="325.90" width="7.35" height="7.3" fill="#000000"/>
<rect x="384.06" y="325.90" width="7.35" height="7.3" fill="#000000"/>
<rect x="391.28" y="325.90" width="7.35" height="7.3" fill="#000000"/>
<rect x="398.50" y="325.90" width="7.35" height="7.3" fill="#000000"/>
<rect x="405.72" y="325.90" width="7.35" height="7.3" fill="#000000"/>
<rect x="412.94" y="325.90" width="7.35" height="7.3" fill="#000000"/>
<rect x="420.16" y="325.90" width="7.35" height="7.3" fill="#000000"/>
<rect x="427.38" y="325.90" width="7.35" height="7.3" fill="#000000"/>
<rect x="434.60" y="325.90" width="7.35" height="7.3" fill="#000000"/>
<rect x="441.82" y="325.90" width="7.35" height="7.3" fill="#000000"/>
<rect x="449.04" y="325.90" width="7.35" height="7.3" fill="#000000"/>
<rect x="456.26" y="325.90" width="7.35" height="7.3" fill="#000000"/>
<rect x="463.48" y="325.90" width="7.35" height="7.3" fill="#000000"/>
<rect x="470.70" y="325.90" width="7.35" height="7.3" fill="#000000"/>
<rect x="326.30" y="333.10" width="7.35" height="7.3" fill="#000000"/>
<rect x="333.52" y="333.10" width="7.35" height="7.3" fill="#000000"/>
<rect x="340.74" y="333.10" width="7.35" height="7.3" fill="#000000"/>
<rect x="347.96" y="333.10" width="7.35" height="7.3" fill="#000000"/>
<rect x="355.18" y="333.10" width="7.35" height="7.3" fill="#000000"/>
<rect x="362.40" y="333.10" width="7.35" height="7.3" fill="#000000"/>
<rect x="369.62" y="333.10" width="7.35" height="7.3" fill="#000000"/>
<rect x="376.84" y="333.10" width="7.35" height="7.3" fill="#000000"/>
<rect x="384.06" y="333.10" width="7.35" height="7.3" fill="#000000"/>
<rect x="391.28" y="333.10" width="7.35" height="7.3" fill="#000000"/>
<rect x="398.50" y="333.10" width="7.35" height="7.3" fill="#000000"/>
<rect x="405.72" y="333.10" width="7.35" height="7.3" fill="#000000"/>
<rect x="412.94" y="333.10" width="7.35" height="7.3" fill="#000000"/>
<rect x="420.16" y="333.10" width="7.35" height="7.3" fill="#000000"/>
<rect x="427.38" y="333.10" width="7.35" height="7.3" fill="#000000"/>
<rect x="434.60" y="333.10" width="7.35" height="7.3" fill="#000000"/>
<rect x="441.82" y="333.10" width="7.35" height="7.3" fill="#000000"/>
<rect x="449.04" y="333.10" width="7.35" height="7.3" fill="#000000"/>
<rect x="456.26" y="333.10" width="7.35" height="7.3" fill="#000000"/>
<rect x="463.48" y="333.10" width="7.35" height="7.3" fill="#000000"/>
<rect x="470.70" y="333.10" width="7.35" height="7.3" fill="#000000"/>
<rect x="326.30" y="340.30" width="7.35" height="7.3" fill="#000000"/>
<rect x="333.52" y="340.30" width="7.35" height="7.3" fill="#000000"/>
<rect x="340.74" y="340.30" width="7.35" height="7.3" fill="#000000"/>
<rect x="347.96" y="340.30" width="7.35" height="7.3" fill="#000000"/>
<rect x="355.18" y="340.30" width="7.35" height="7.3" fill="#000000"/>
<rect x="362.40" y="340.30" width="7.35" height="7.3" fill="#000000"/>
<rect x="369.62" y="340.30" width="7.35" height="7.3" fill="#000000"/>
<rect x="376.84" y="340.30" width="7.35" height="7.3" fill="#000000"/>
<rect x="384.06" y="340.30" width="7.35" height="7.3" fill="#000000"/>
<rect x="391.28" y="340.30" width="7.35" height="7.3" fill="#000000"/>
<rect x="398.50" y="340.30" width="7.35" height="7.3" fill="#000000"/>
<rect x="405.72" y="340.30" width="7.35" height="7.3" fill="#000000"/>
<rect x="412.94" y="340.30" width="7.35" height="7.3" fill="#000000"/>
<rect x="420.16" y="340.30" width="7.35" height="7.3" fill="#000000"/>
<rect x="427.38" y="340.30" width="7.35" height="7.3" fill="#000000"/>
<rect x="434.60" y="340.30" width="7.35" height="7.3" fill="#000000"/>
<rect x="441.82" y="340.30" width="7.35" height="7.3" fill="#000000"/>
<rect x="449.04" y="340.30" width="7.35" height="7.3" fill="#000000"/>
<rect x="456.26" y="340.30" width="7.35" height="7.3" fill="#000000"/>
<rect x="463.48" y="340.30" width="7.35" height="7.3" fill="#000000"/>
<rect x="470.70" y="340.30" width="7.35" height="7.3" fill="#000000"/>
<rect x="326.30" y="347.50" width="7.35" height="7.3" fill="#000000"/>
<rect x="333.52" y="347.50" width="7.35" height="7.3" fill="#000000"/>
<rect x="340.74" y="347.50" width="7.35" height="7.3" fill="#000000"/>
<rect x="347.96" y="347.50" width="7.35" height="7.3" fill="#000000"/>
<rect x="355.18" y="347.50" width="7.35" height="7.3" fill="#000000"/>
<rect x="362.40" y="347.50" width="7.35" height="7.3" fill="#000000"/>
<rect x="369.62" y="347.50" width="7.35" height="7.3" fill="#000000"/>
<rect x="376.84" y="347.50" width="7.35" height="7.3" fill="#000000"/>
<rect x="384.06" y="347.50" width="7.35" height="7.3" fill="#000000"/>
<rect x="391.28" y="347.50" width="7.35" height="7.3" fill="#000000"/>
<rect x="398.50" y="347.50" width="7.35" height="7.3" fill="#000000"/>
<rect x="405.72" y="347.50" width="7.35" height="7.3" fill="#000000"/>
<rect x="412.94" y="347.50" width="7.35" height="7.3" fill="#000000"/>
<rect x="420.16" y="347.50" width="7.35" height="7.3" fill="#000000"/>
<rect x="427.38" y="347.50" width="7.35" height="7.3" fill="#000000"/>
<rect x="434.60" y="347.50" width="7.35" height="7.3" fill="#000000"/>
<rect x="441.82" y="347.50" width="7.35" height="7.3" fill="#000000"/>
<rect x="449.04" y="347.50" width="7.35" height="7.3" fill="#000000"/>
<rect x="456.26" y="347.50" width="7.35" height="7.3" fill="#000000"/>
<rect x="463.48" y="347.50" width="7.35" height="7.3" fill="#000000"/>
<rect x="470.70" y="347.50" width="7.35" height="7.3" fill="#000000"/>
<rect x="326.30" y="354.70" width="7.35" height="7.3" fill="#000000"/>
<rect x="333.52" y="354.70" width="7.35" height="7.3" fill="#000000"/>
<rect x="340.74" y="354.70" width="7.35" height="7.3" fill="#000000"/>
<rect x="347.96" y="354.70" width="7.35" height="7.3" fill="#000000"/>
<rect x="355.18" y="354.70" width="7.35" height="7.3" fill="#000000"/>
<rect x="362.40" y="354.70" width="7.35" height="7.3" fill="#000000"/>
<rect x="369.62" y="354.70" width="7.35" height="7.3" fill="#000000"/>
<rect x="376.84" y="354.70" width="7.35" height="7.3" fill="#000000"/>
<rect x="384.06" y="354.70" width="7.35" height="7.3" fill="#000000"/>
<rect x="391.28" y="354.70" width="7.35" height="7.3" fill="#000000"/>
<rect x="398.50" y="354.70" width="7.35" height="7.3" fill="#000000"/>
<rect x="405.72" y="354.70" width="7.35" height="7.3" fill="#000000"/>
<rect x="412.94" y="354.70" width="7.35" height="7.3" fill="#000000"/>
<rect x="420.16" y="354.70" width="7.35" height="7.3" fill="#000000"/>
<rect x="427.38" y="354.70" width="7.35" height="7.3" fill="#000000"/>
<rect x="434.60" y="354.70" width="7.35" height="7.3" fill="#000000"/>
<rect x="441.82" y="354.70" width="7.35" height="7.3" fill="#000000"/>
<rect x="449.04" y="354.70" width="7.35" height="7.3" fill="#000000"/>
<rect x="456.26" y="354.70" width="7.35" height="7.3" fill="#000000"/>
<rect x="463.48" y="354.70" width="7.35" height="7.3" fill="#000000"/>
<rect x="470.70" y="354.70" width="7.35" height="7.3" fill="#000000"/>
<rect x="326.30" y="361.90" width="7.35" height="7.3" fill="#000000"/>
<rect x="333.52" y="361.90" width="7.35" height="7.3" fill="#000000"/>
<rect x="340.74" y="361.90" width="7.35" height="7.3" fill="#000000"/>
<rect x="347.96" y="361.90" width="7.35" height="7.3" fill="#000000"/>
<rect x="355.18" y="361.90" width="7.35" height="7.3" fill="#000000"/>
<rect x="362.40" y="361.90" width="7.35" height="7.3" fill="#000000"/>
<rect x="369.62" y="361.90" width="7.35" height="7.3" fill="#000000"/>
<rect x="376.84" y="361.90" width="7.35" height="7.3" fill="#000000"/>
<rect x="384.06" y="361.90" width="7.35" height="7.3" fill="#000000"/>
<rect x="391.28" y="361.90" width="7.35" height="7.3" fill="#000000"/>
<rect x="398.50" y="361.90" width="7.35" height="7.3" fill="#000000"/>
<rect x="405.72" y="361.90" width="7.35" height="7.3" fill="#000000"/>
<rect x="412.94" y="361.90" width="7.35" height="7.3" fill="#000000"/>
<rect x="420.16" y="361.90" width="7.35" height="7.3" fill="#000000"/>
<rect x="427.38" y="361.90" width="7.35" height="7.3" fill="#000000"/>
<rect x="434.60" y="361.90" width="7.35" height="7.3" fill="#000000"/>
<rect x="441.82" y="361.90" width="7.35" height="7.3" fill="#000000"/>
<rect x="449.04" y="361.90" width="7.35" height="7.3" fill="#000000"/>
<rect x="456.26" y="361.90" width="7.35" height="7.3" fill="#000000"/>
<rect x="463.48" y="361.90" width="7.35" height="7.3" fill="#000000"/>
<rect x="470.70" y="361.90" width="7.35" height="7.3" fill="#000000"/>
<rect x="326.30" y="369.10" width="7.35" height="7.3" fill="#000000"/>
<rect x="333.52" y="369.10" width="7.35" height="7.3" fill="#000000"/>
<rect x="340.74" y="369.10" width="7.35" height="7.3" fill="#000000"/>
<rect x="347.96" y="369.10" width="7.35" height="7.3" fill="#000000"/>
<rect x="355.18" y="369.10" width="7.35" height="7.3" fill="#000000"/>
<rect x="362.40" y="369.10" width="7.35" height="7.3" fill="#000000"/>
<rect x="369.62" y="369.10" width="7.35" height="7.3" fill="#000000"/>
<rect x="376.84" y="369.10" width="7.35" height="7.3" fill="#000000"/>
<rect x="384.06" y="369.10" width="7.35" height="7.3" fill="#000000"/>
<rect x="391.28" y="369.10" width="7.35" height="7.3" fill="#000000"/>
<rect x="398.50" y="369.10" width="7.35" height="7.3" fill="#000000"/>
<rect x="405.72" y="369.10" width="7.35" height="7.3" fill="#000000"/>
<rect x="412.94" y="369.10" width="7.35" height="7.3" fill="#000000"/>
<rect x="420.16" y="369.10" width="7.35" height="7.3" fill="#000000"/>
<rect x="427.38" y="369.10" width="7.35" height="7.3" fill="#000000"/>
<rect x="434.60" y="369.10" width="7.35" height="7.3" fill="#000000"/>
<rect x="441.82" y="369.10" width="7.35" height="7.3" fill="#000000"/>
<rect x="449.04" y="369.10" width="7.35" height="7.3" fill="#000000"/>
<rect x="456.26" y="369.10" width="7.35" height="7.3" fill="#000000"/>
<rect x="463.48" y="369.10" width="7.35" height="7.3" fill="#000000"/>
<rect x="470.70" y="369.10" width="7.35" height="7.3" fill="#000000"/>
<rect x="326.30" y="376.30" width="7.35" height="7.3" fill="#6e00e8"/>
<rect x="333.52" y="376.30" width="7.35" height="7.3" fill="#000096"/>
<rect x="340.74" y="376.30" width="7.35" height="7.3" fill="#00006e"/>
<rect x="347.96" y="376.30" width="7.35" height="7.3" fill="#000078"/>
<rect x="355.18" y="376.30" width="7.35" height="7.3" fill="#1400a5"/>
<rect x="362.40" y="376.30" width="7.35" height="7.3" fill="#6300e0"/>
<rect x="369.62" y="376.30" width="7.35" height="7.3" fill="#3d00c3"/>
<rect x="376.84" y="376.30" width="7.35" height="7.3" fill="#000000"/>
<rect x="384.06" y="376.30" width="7.35" height="7.3" fill="#000000"/>
<rect x="391.28" y="376.30" width="7.35" height="7.3" fill="#000000"/>
<rect x="398.50" y="376.30" width="7.35" height="7.3" fill="#000000"/>
<rect x="405.72" y="376.30" width="7.35" height="7.3" fill="#000000"/>
<rect x="412.94" y="376.30" width="7.35" height="7.3" fill="#000000"/>
<rect x="420.16" y="376.30" width="7.35" height="7.3" fill="#000000"/>
<rect x="427.38" y="376.30" width="7.35" height="7.3" fill="#000000"/>
<rect x="434.60" y="376.30" width="7.35" height="7.3" fill="#000000"/>
<rect x="441.82" y="376.30" width="7.35" height="7.3" fill="#000000"/>
<rect x="449.04" y="376.30" width="7.35" height="7.3" fill="#000000"/>
<rect x="456.26" y="376.30" width="7.35" height="7.3" fill="#000000"/>
<rect x="463.48" y="376.30" width="7.35" height="7.3" fill="#000000"/>
<rect x="470.70" y="376.30" width="7.35" height="7.3" fill="#000000"/>
<rect x="326.30" y="383.50" width="7.35" height="7.3" fill="#7d00f4"/>
<rect x="333.52" y="383.50" width="7.35" height="7.3" fill="#000082"/>
<rect x="340.74" y="383.50" width="7.35" height="7.3" fill="#000050"/>
<rect x="347.96" y="383.50" width="7.35" height="7.3" fill="#000050"/>
<rect x="355.18" y="383.50" width="7.35" height="7.3" fill="#000096"/>
<rect x="362.40" y="383.50" width="7.35" height="7.3" fill="#000064"/>
<rect x="369.62" y="383.50" width="7.35" height="7.3" fill="#2800b4"/>
<rect x="376.84" y="383.50" width="7.35" height="7.3" fill="#5900d8"/>
<rect x="384.06" y="383.50" width="7.35" height="7.3" fill="#4e00d1"/>
<rect x="391.28" y="383.50" width="7.35" height="7.3" fill="#000000"/>
<rect x="398.50" y="383.50" width="7.35" height="7.3" fill="#000000"/>
<rect x="405.72" y="383.50" width="7.35" height="7.3" fill="#000000"/>
<rect x="412.94" y="383.50" width="7.35" height="7.3" fill="#000000"/>
<rect x="420.16" y="383.50" width="7.35" height="7.3" fill="#000000"/>
<rect x="427.38" y="383.50" width="7.35" height="7.3" fill="#000000"/>
<rect x="434.60" y="383.50" width="7.35" height="7.3" fill="#000000"/>
<rect x="441.82" y="383.50" width="7.35" height="7.3" fill="#000000"/>
<rect x="449.04" y="383.50" width="7.35" height="7.3" fill="#000000"/>
<rect x="456.26" y="383.50" width="7.35" height="7.3" fill="#000000"/>
<rect x="463.48" y="383.50" width="7.35" height="7.3" fill="#000000"/>
<rect x="470.70" y="383.50" width="7.35" height="7.3" fill="#000000"/>
<rect x="326.30" y="390.70" width="7.35" height="7.3" fill="#8100f7"/>
<rect x="333.52" y="390.70" width="7.35" height="7.3" fill="#00003c"/>
<rect x="340.74" y="390.70" width="7.35" height="7.3" fill="#000096"/>
<rect x="347.96" y="390.70" width="7.35" height="7.3" fill="#00006e"/>
<rect x="355.18" y="390.70" width="7.35" height="7.3" fill="#00008c"/>
<rect x="362.40" y="390.70" width="7.35" height="7.3" fill="#00006e"/>
<rect x="369.62" y="390.70" width="7.35" height="7.3" fill="#000046"/>
<rect x="376.84" y="390.70" width="7.35" height="7.3" fill="#2d00b8"/>
<rect x="384.06" y="390.70" width="7.35" height="7.3" fill="#00008c"/>
<rect x="391.28" y="390.70" width="7.35" height="7.3" fill="#6d00e8"/>
<rect x="398.50" y="390.70" width="7.35" height="7.3" fill="#3200bc"/>
<rect x="405.72" y="390.70" width="7.35" height="7.3" fill="#000000"/>
<rect x="412.94" y="390.70" width="7.35" height="7.3" fill="#000000"/>
<rect x="420.16" y="390.70" width="7.35" height="7.3" fill="#000000"/>
<rect x="427.38" y="390.70" width="7.35" height="7.3" fill="#000000"/>
<rect x="434.60" y="390.70" width="7.35" height="7.3" fill="#000000"/>
<rect x="441.82" y="390.70" width="7.35" height="7.3" fill="#000000"/>
<rect x="449.04" y="390.70" width="7.35" height="7.3" fill="#000000"/>
<rect x="456.26" y="390.70" width="7.35" height="7.3" fill="#000000"/>
<rect x="463.48" y="390.70" width="7.35" height="7.3" fill="#000000"/>
<rect x="470.70" y="390.70" width="7.35" height="7.3" fill="#000000"/>
<rect x="326.30" y="397.90" width="7.35" height="7.3" fill="#8100f6"/>
<rect x="333.52" y="397.90" width="7.35" height="7.3" fill="#000050"/>
<rect x="340.74" y="397.90" width="7.35" height="7.3" fill="#000050"/>
<rect x="347.96" y="397.90" width="7.35" height="7.3" fill="#000050"/>
<rect x="355.18" y="397.90" width="7.35" height="7.3" fill="#000050"/>
<rect x="362.40" y="397.90" width="7.35" height="7.3" fill="#000050"/>
<rect x="369.62" y="397.90" width="7.35" height="7.3" fill="#0c009f"/>
<rect x="376.84" y="397.90" width="7.35" height="7.3" fill="#0c009f"/>
<rect x="384.06" y="397.90" width="7.35" height="7.3" fill="#00006e"/>
<rect x="391.28" y="397.90" width="7.35" height="7.3" fill="#000096"/>
<rect x="398.50" y="397.90" width="7.35" height="7.3" fill="#2800b4"/>
<rect x="405.72" y="397.90" width="7.35" height="7.3" fill="#6d00e8"/>
<rect x="412.94" y="397.90" width="7.35" height="7.3" fill="#00003c"/>
<rect x="420.16" y="397.90" width="7.35" height="7.3" fill="#000000"/>
<rect x="427.38" y="397.90" width="7.35" height="7.3" fill="#000000"/>
<rect x="434.60" y="397.90" width="7.35" height="7.3" fill="#000000"/>
<rect x="441.82" y="397.90" width="7.35" height="7.3" fill="#000000"/>
<rect x="449.04" y="397.90" width="7.35" height="7.3" fill="#000000"/>
<rect x="456.26" y="397.90" width="7.35" height="7.3" fill="#000000"/>
<rect x="463.48" y="397.90" width="7.35" height="7.3" fill="#000000"/>
<rect x="470.70" y="397.90" width="7.35" height="7.3" fill="#000000"/>
<rect x="326.30" y="405.10" width="7.35" height="7.3" fill="#7d00f4"/>
<rect x="333.52" y="405.10" width="7.35" height="7.3" fill="#000063"/>
<rect x="340.74" y="405.10" width="7.35" height="7.3" fill="#00005d"/>
<rect x="347.96" y="405.10" width="7.35" height="7.3" fill="#000067"/>
<rect x="355.18" y="405.10" width="7.35" height="7.3" fill="#00005f"/>
<rect x="362.40" y="405.10" width="7.35" height="7.3" fill="#000067"/>
<rect x="369.62" y="405.10" width="7.35" height="7.3" fill="#000053"/>
<rect x="376.84" y="405.10" width="7.35" height="7.3" fill="#000063"/>
<rect x="384.06" y="405.10" width="7.35" height="7.3" fill="#000065"/>
<rect x="391.28" y="405.10" width="7.35" height="7.3" fill="#000078"/>
<rect x="398.50" y="405.10" width="7.35" height="7.3" fill="#1400a5"/>
<rect x="405.72" y="405.10" width="7.35" height="7.3" fill="#000096"/>
<rect x="412.94" y="405.10" width="7.35" height="7.3" fill="#4e00d1"/>
<rect x="420.16" y="405.10" width="7.35" height="7.3" fill="#5400d5"/>
<rect x="427.38" y="405.10" width="7.35" height="7.3" fill="#000000"/>
<rect x="434.60" y="405.10" width="7.35" height="7.3" fill="#000000"/>
<rect x="441.82" y="405.10" width="7.35" height="7.3" fill="#000000"/>
<rect x="449.04" y="405.10" width="7.35" height="7.3" fill="#000000"/>
<rect x="456.26" y="405.10" width="7.35" height="7.3" fill="#000000"/>
<rect x="463.48" y="405.10" width="7.35" height="7.3" fill="#000000"/>
<rect x="470.70" y="405.10" width="7.35" height="7.3" fill="#000000"/>
<rect x="326.30" y="412.30" width="7.35" height="7.3" fill="#8200f7"/>
<rect x="333.52" y="412.30" width="7.35" height="7.3" fill="#00005c"/>
<rect x="340.74" y="412.30" width="7.35" height="7.3" fill="#000065"/>
<rect x="347.96" y="412.30" width="7.35" height="7.3" fill="#000050"/>
<rect x="355.18" y="412.30" width="7.35" height="7.3" fill="#000058"/>
<rect x="362.40" y="412.30" width="7.35" height="7.3" fill="#000061"/>
<rect x="369.62" y="412.30" width="7.35" height="7.3" fill="#00004c"/>
<rect x="376.84" y="412.30" width="7.35" height="7.3" fill="#000052"/>
<rect x="384.06" y="412.30" width="7.35" height="7.3" fill="#000061"/>
<rect x="391.28" y="412.30" width="7.35" height="7.3" fill="#000069"/>
<rect x="398.50" y="412.30" width="7.35" height="7.3" fill="#00006a"/>
<rect x="405.72" y="412.30" width="7.35" height="7.3" fill="#00004f"/>
<rect x="412.94" y="412.30" width="7.35" height="7.3" fill="#3d00c3"/>
<rect x="420.16" y="412.30" width="7.35" height="7.3" fill="#3d00c3"/>
<rect x="427.38" y="412.30" width="7.35" height="7.3" fill="#6300e0"/>
<rect x="434.60" y="412.30" width="7.35" height="7.3" fill="#000064"/>
<rect x="441.82" y="412.30" width="7.35" height="7.3" fill="#000000"/>
<rect x="449.04" y="412.30" width="7.35" height="7.3" fill="#000000"/>
<rect x="456.26" y="412.30" width="7.35" height="7.3" fill="#000000"/>
<rect x="463.48" y="412.30" width="7.35" height="7.3" fill="#000000"/>
<rect x="470.70" y="412.30" width="7.35" height="7.3" fill="#000000"/>
<rect x="326.30" y="419.50" width="7.35" height="7.3" fill="#7a00f1"/>
<rect x="333.52" y="419.50" width="7.35" height="7.3" fill="#00006b"/>
<rect x="340.74" y="419.50" width="7.35" height="7.3" fill="#000051"/>
<rect x="347.96" y="419.50" width="7.35" height="7.3" fill="#000052"/>
<rect x="355.18" y="419.50" width="7.35" height="7.3" fill="#000052"/>
<rect x="362.40" y="419.50" width="7.35" height="7.3" fill="#000066"/>
<rect x="369.62" y="419.50" width="7.35" height="7.3" fill="#00006b"/>
<rect x="376.84" y="419.50" width="7.35" height="7.3" fill="#000069"/>
<rect x="384.06" y="419.50" width="7.35" height="7.3" fill="#00004f"/>
<rect x="391.28" y="419.50" width="7.35" height="7.3" fill="#00004d"/>
<rect x="398.50" y="419.50" width="7.35" height="7.3" fill="#00006a"/>
<rect x="405.72" y="419.50" width="7.35" height="7.3" fill="#00005a"/>
<rect x="412.94" y="419.50" width="7.35" height="7.3" fill="#000064"/>
<rect x="420.16" y="419.50" width="7.35" height="7.3" fill="#000050"/>
<rect x="427.38" y="419.50" width="7.35" height="7.3" fill="#1e00ac"/>
<rect x="434.60" y="419.50" width="7.35" height="7.3" fill="#5900d8"/>
<rect x="441.82" y="419.50" width="7.35" height="7.3" fill="#3200bc"/>
<rect x="449.04" y="419.50" width="7.35" height="7.3" fill="#000000"/>
<rect x="456.26" y="419.50" width="7.35" height="7.3" fill="#000000"/>
<rect x="463.48" y="419.50" width="7.35" height="7.3" fill="#000000"/>
<rect x="470.70" y="419.50" width="7.35" height="7.3" fill="#000000"/>
<rect x="326.30" y="426.70" width="7.35" height="7.3" fill="#8c00ff"/>
<rect x="333.52" y="426.70" width="7.35" height="7.3" fill="#1c00ab"/>
<rect x="340.74" y="426.70" width="7.35" height="7.3" fill="#050099"/>
<rect x="347.96" y="426.70" width="7.35" height="7.3" fill="#000088"/>
<rect x="355.18" y="426.70" width="7.35" height="7.3" fill="#000076"/>
<rect x="362.40" y="426.70" width="7.35" height="7.3" fill="#000064"/>
<rect x="369.62" y="426.70" width="7.35" height="7.3" fill="#000066"/>
<rect x="376.84" y="426.70" width="7.35" height="7.3" fill="#000058"/>
<rect x="384.06" y="426.70" width="7.35" height="7.3" fill="#000071"/>
<rect x="391.28" y="426.70" width="7.35" height="7.3" fill="#00006e"/>
<rect x="398.50" y="426.70" width="7.35" height="7.3" fill="#00006b"/>
<rect x="405.72" y="426.70" width="7.35" height="7.3" fill="#000070"/>
<rect x="412.94" y="426.70" width="7.35" height="7.3" fill="#000069"/>
<rect x="420.16" y="426.70" width="7.35" height="7.3" fill="#000063"/>
<rect x="427.38" y="426.70" width="7.35" height="7.3" fill="#000068"/>
<rect x="434.60" y="426.70" width="7.35" height="7.3" fill="#000066"/>
<rect x="441.82" y="426.70" width="7.35" height="7.3" fill="#1e00ac"/>
<rect x="449.04" y="426.70" width="7.35" height="7.3" fill="#6800e4"/>
<rect x="456.26" y="426.70" width="7.35" height="7.3" fill="#000000"/>
<rect x="463.48" y="426.70" width="7.35" height="7.3" fill="#000000"/>
<rect x="470.70" y="426.70" width="7.35" height="7.3" fill="#000000"/>
<rect x="326.30" y="433.90" width="7.35" height="7.3" fill="#8c00ff"/>
<rect x="333.52" y="433.90" width="7.35" height="7.3" fill="#2900b5"/>
<rect x="340.74" y="433.90" width="7.35" height="7.3" fill="#1900a9"/>
<rect x="347.96" y="433.90" width="7.35" height="7.3" fill="#08009c"/>
<rect x="355.18" y="433.90" width="7.35" height="7.3" fill="#000090"/>
<rect x="362.40" y="433.90" width="7.35" height="7.3" fill="#000083"/>
<rect x="369.62" y="433.90" width="7.35" height="7.3" fill="#000076"/>
<rect x="376.84" y="433.90" width="7.35" height="7.3" fill="#00006d"/>
<rect x="384.06" y="433.90" width="7.35" height="7.3" fill="#000063"/>
<rect x="391.28" y="433.90" width="7.35" height="7.3" fill="#00006c"/>
<rect x="398.50" y="433.90" width="7.35" height="7.3" fill="#000059"/>
<rect x="405.72" y="433.90" width="7.35" height="7.3" fill="#000061"/>
<rect x="412.94" y="433.90" width="7.35" height="7.3" fill="#000065"/>
<rect x="420.16" y="433.90" width="7.35" height="7.3" fill="#000057"/>
<rect x="427.38" y="433.90" width="7.35" height="7.3" fill="#000061"/>
<rect x="434.60" y="433.90" width="7.35" height="7.3" fill="#000069"/>
<rect x="441.82" y="433.90" width="7.35" height="7.3" fill="#000069"/>
<rect x="449.04" y="433.90" width="7.35" height="7.3" fill="#000078"/>
<rect x="456.26" y="433.90" width="7.35" height="7.3" fill="#3d00c3"/>
<rect x="463.48" y="433.90" width="7.35" height="7.3" fill="#000046"/>
<rect x="470.70" y="433.90" width="7.35" height="7.3" fill="#000000"/>
<rect x="326.30" y="441.10" width="7.35" height="7.3" fill="#8c00ff"/>
<rect x="333.52" y="441.10" width="7.35" height="7.3" fill="#4600ca"/>
<rect x="340.74" y="441.10" width="7.35" height="7.3" fill="#3500be"/>
<rect x="347.96" y="441.10" width="7.35" height="7.3" fill="#2400b1"/>
<rect x="355.18" y="441.10" width="7.35" height="7.3" fill="#1400a5"/>
<rect x="362.40" y="441.10" width="7.35" height="7.3" fill="#030098"/>
<rect x="369.62" y="441.10" width="7.35" height="7.3" fill="#00008c"/>
<rect x="376.84" y="441.10" width="7.35" height="7.3" fill="#00007f"/>
<rect x="384.06" y="441.10" width="7.35" height="7.3" fill="#000073"/>
<rect x="391.28" y="441.10" width="7.35" height="7.3" fill="#000065"/>
<rect x="398.50" y="441.10" width="7.35" height="7.3" fill="#000069"/>
<rect x="405.72" y="441.10" width="7.35" height="7.3" fill="#00006c"/>
<rect x="412.94" y="441.10" width="7.35" height="7.3" fill="#00005e"/>
<rect x="420.16" y="441.10" width="7.35" height="7.3" fill="#000063"/>
<rect x="427.38" y="441.10" width="7.35" height="7.3" fill="#000059"/>
<rect x="434.60" y="441.10" width="7.35" height="7.3" fill="#00005d"/>
<rect x="441.82" y="441.10" width="7.35" height="7.3" fill="#000062"/>
<rect x="449.04" y="441.10" width="7.35" height="7.3" fill="#00005a"/>
<rect x="456.26" y="441.10" width="7.35" height="7.3" fill="#00005e"/>
<rect x="463.48" y="441.10" width="7.35" height="7.3" fill="#000096"/>
<rect x="470.70" y="441.10" width="7.35" height="7.3" fill="#00008c"/>
<rect x="326.30" y="448.30" width="7.35" height="7.3" fill="#8c00ff"/>
<rect x="333.52" y="448.30" width="7.35" height="7.3" fill="#5700d7"/>
<rect x="340.74" y="448.30" width="7.35" height="7.3" fill="#4700cb"/>
<rect x="347.96" y="448.30" width="7.35" height="7.3" fill="#3600bf"/>
<rect x="355.18" y="448.30" width="7.35" height="7.3" fill="#2600b2"/>
<rect x="362.40" y="448.30" width="7.35" height="7.3" fill="#1500a6"/>
<rect x="369.62" y="448.30" width="7.35" height="7.3" fill="#050099"/>
<rect x="376.84" y="448.30" width="7.35" height="7.3" fill="#00008d"/>
<rect x="384.06" y="448.30" width="7.35" height="7.3" fill="#000080"/>
<rect x="391.28" y="448.30" width="7.35" height="7.3" fill="#000073"/>
<rect x="398.50" y="448.30" width="7.35" height="7.3" fill="#000072"/>
<rect x="405.72" y="448.30" width="7.35" height="7.3" fill="#00005c"/>
<rect x="412.94" y="448.30" width="7.35" height="7.3" fill="#000065"/>
<rect x="420.16" y="448.30" width="7.35" height="7.3" fill="#00005c"/>
<rect x="427.38" y="448.30" width="7.35" height="7.3" fill="#000065"/>
<rect x="434.60" y="448.30" width="7.35" height="7.3" fill="#000069"/>
<rect x="441.82" y="448.30" width="7.35" height="7.3" fill="#000059"/>
<rect x="449.04" y="448.30" width="7.35" height="7.3" fill="#000072"/>
<rect x="456.26" y="448.30" width="7.35" height="7.3" fill="#000063"/>
<rect x="463.48" y="448.30" width="7.35" height="7.3" fill="#000066"/>
<rect x="470.70" y="448.30" width="7.35" height="7.3" fill="#000068"/>
<rect x="326.30" y="455.50" width="7.35" height="7.3" fill="#8c00ff"/>
<rect x="333.52" y="455.50" width="7.35" height="7.3" fill="#6700e3"/>
<rect x="340.74" y="455.50" width="7.35" height="7.3" fill="#5600d6"/>
<rect x="347.96" y="455.50" width="7.35" height="7.3" fill="#4600ca"/>
<rect x="355.18" y="455.50" width="7.35" height="7.3" fill="#3500be"/>
<rect x="362.40" y="455.50" width="7.35" height="7.3" fill="#2400b1"/>
<rect x="369.62" y="455.50" width="7.35" height="7.3" fill="#1400a5"/>
<rect x="376.84" y="455.50" width="7.35" height="7.3" fill="#030098"/>
<rect x="384.06" y="455.50" width="7.35" height="7.3" fill="#00008c"/>
<rect x="391.28" y="455.50" width="7.35" height="7.3" fill="#00007f"/>
<rect x="398.50" y="455.50" width="7.35" height="7.3" fill="#000072"/>
<rect x="405.72" y="455.50" width="7.35" height="7.3" fill="#00006d"/>
<rect x="412.94" y="455.50" width="7.35" height="7.3" fill="#000062"/>
<rect x="420.16" y="455.50" width="7.35" height="7.3" fill="#000071"/>
<rect x="427.38" y="455.50" width="7.35" height="7.3" fill="#00006d"/>
<rect x="434.60" y="455.50" width="7.35" height="7.3" fill="#000059"/>
<rect x="441.82" y="455.50" width="7.35" height="7.3" fill="#000074"/>
<rect x="449.04" y="455.50" width="7.35" height="7.3" fill="#000072"/>
<rect x="456.26" y="455.50" width="7.35" height="7.3" fill="#000059"/>
<rect x="463.48" y="455.50" width="7.35" height="7.3" fill="#000071"/>
<rect x="470.70" y="455.50" width="7.35" height="7.3" fill="#000063"/>
<rect x="326.30" y="462.70" width="7.35" height="7.3" fill="#8c00ff"/>
<rect x="333.52" y="462.70" width="7.35" height="7.3" fill="#7100ea"/>
<rect x="340.74" y="462.70" width="7.35" height="7.3" fill="#6000de"/>
<rect x="347.96" y="462.70" width="7.35" height="7.3" fill="#5000d2"/>
<rect x="355.18" y="462.70" width="7.35" height="7.3" fill="#3f00c5"/>
<rect x="362.40" y="462.70" width="7.35" height="7.3" fill="#2f00b9"/>
<rect x="369.62" y="462.70" width="7.35" height="7.3" fill="#1e00ac"/>
<rect x="376.84" y="462.70" width="7.35" height="7.3" fill="#0d00a0"/>
<rect x="384.06" y="462.70" width="7.35" height="7.3" fill="#000094"/>
<rect x="391.28" y="462.70" width="7.35" height="7.3" fill="#000087"/>
<rect x="398.50" y="462.70" width="7.35" height="7.3" fill="#000079"/>
<rect x="405.72" y="462.70" width="7.35" height="7.3" fill="#00006c"/>
<rect x="412.94" y="462.70" width="7.35" height="7.3" fill="#000064"/>
<rect x="420.16" y="462.70" width="7.35" height="7.3" fill="#00005d"/>
<rect x="427.38" y="462.70" width="7.35" height="7.3" fill="#000059"/>
<rect x="434.60" y="462.70" width="7.35" height="7.3" fill="#000066"/>
<rect x="441.82" y="462.70" width="7.35" height="7.3" fill="#00005b"/>
<rect x="449.04" y="462.70" width="7.35" height="7.3" fill="#000064"/>
<rect x="456.26" y="462.70" width="7.35" height="7.3" fill="#00006a"/>
<rect x="463.48" y="462.70" width="7.35" height="7.3" fill="#000064"/>
<rect x="470.70" y="462.70" width="7.35" height="7.3" fill="#00005f"/>
<rect x="326.30" y="469.90" width="7.35" height="7.3" fill="#8c00ff"/>
<rect x="333.52" y="469.90" width="7.35" height="7.3" fill="#7100ea"/>
<rect x="340.74" y="469.90" width="7.35" height="7.3" fill="#6000de"/>
<rect x="347.96" y="469.90" width="7.35" height="7.3" fill="#5000d2"/>
<rect x="355.18" y="469.90" width="7.35" height="7.3" fill="#3f00c5"/>
<rect x="362.40" y="469.90" width="7.35" height="7.3" fill="#2f00b9"/>
<rect x="369.62" y="469.90" width="7.35" height="7.3" fill="#1e00ac"/>
<rect x="376.84" y="469.90" width="7.35" height="7.3" fill="#0d00a0"/>
<rect x="384.06" y="469.90" width="7.35" height="7.3" fill="#000094"/>
<rect x="391.28" y="469.90" width="7.35" height="7.3" fill="#000087"/>
<rect x="398.50" y="469.90" width="7.35" height="7.3" fill="#000079"/>
<rect x="405.72" y="469.90" width="7.35" height="7.3" fill="#00006c"/>
<rect x="412.94" y="469.90" width="7.35" height="7.3" fill="#000061"/>
<rect x="420.16" y="469.90" width="7.35" height="7.3" fill="#00005f"/>
<rect x="427.38" y="469.90" width="7.35" height="7.3" fill="#00006b"/>
<rect x="434.60" y="469.90" width="7.35" height="7.3" fill="#000067"/>
<rect x="441.82" y="469.90" width="7.35" height="7.3" fill="#000068"/>
<rect x="449.04" y="469.90" width="7.35" height="7.3" fill="#000069"/>
<rect x="456.26" y="469.90" width="7.35" height="7.3" fill="#00006d"/>
<rect x="463.48" y="469.90" width="7.35" height="7.3" fill="#00005d"/>
<rect x="470.70" y="469.90" width="7.35" height="7.3" fill="#00003c"/>
<rect x="326.30" y="477.10" width="7.35" height="7.3" fill="#8c00ff"/>
<rect x="333.52" y="477.10" width="7.35" height="7.3" fill="#7100ea"/>
<rect x="340.74" y="477.10" width="7.35" height="7.3" fill="#6000de"/>
<rect x="347.96" y="477.10" width="7.35" height="7.3" fill="#5000d2"/>
<rect x="355.18" y="477.10" width="7.35" height="7.3" fill="#3f00c5"/>
<rect x="362.40" y="477.10" width="7.35" height="7.3" fill="#2f00b9"/>
<rect x="369.62" y="477.10" width="7.35" height="7.3" fill="#1e00ac"/>
<rect x="376.84" y="477.10" width="7.35" height="7.3" fill="#0d00a0"/>
<rect x="384.06" y="477.10" width="7.35" height="7.3" fill="#000094"/>
<rect x="391.28" y="477.10" width="7.35" height="7.3" fill="#000087"/>
<rect x="398.50" y="477.10" width="7.35" height="7.3" fill="#000079"/>
<rect x="405.72" y="477.10" width="7.35" height="7.3" fill="#00006c"/>
<rect x="412.94" y="477.10" width="7.35" height="7.3" fill="#00006b"/>
<rect x="420.16" y="477.10" width="7.35" height="7.3" fill="#000067"/>
<rect x="427.38" y="477.10" width="7.35" height="7.3" fill="#000069"/>
<rect x="434.60" y="477.10" width="7.35" height="7.3" fill="#000062"/>
<rect x="441.82" y="477.10" width="7.35" height="7.3" fill="#000065"/>
<rect x="449.04" y="477.10" width="7.35" height="7.3" fill="#00005d"/>
<rect x="456.26" y="477.10" width="7.35" height="7.3" fill="#000061"/>
<rect x="463.48" y="477.10" width="7.35" height="7.3" fill="#00006d"/>
<rect x="470.70" y="477.10" width="7.35" height="7.3" fill="#000090"/>
<rect x="326.30" y="484.30" width="7.35" height="7.3" fill="#8c00ff"/>
<rect x="333.52" y="484.30" width="7.35" height="7.3" fill="#7100ea"/>
<rect x="340.74" y="484.30" width="7.35" height="7.3" fill="#6000de"/>
<rect x="347.96" y="484.30" width="7.35" height="7.3" fill="#5000d2"/>
<rect x="355.18" y="484.30" width="7.35" height="7.3" fill="#3f00c5"/>
<rect x="362.40" y="484.30" width="7.35" height="7.3" fill="#2f00b9"/>
<rect x="369.62" y="484.30" width="7.35" height="7.3" fill="#1e00ac"/>
<rect x="376.84" y="484.30" width="7.35" height="7.3" fill="#0d00a0"/>
<rect x="384.06" y="484.30" width="7.35" height="7.3" fill="#000094"/>
<rect x="391.28" y="484.30" width="7.35" height="7.3" fill="#000087"/>
<rect x="398.50" y="484.30" width="7.35" height="7.3" fill="#000079"/>
<rect x="405.72" y="484.30" width="7.35" height="7.3" fill="#000074"/>
<rect x="412.94" y="484.30" width="7.35" height="7.3" fill="#000060"/>
<rect x="420.16" y="484.30" width="7.35" height="7.3" fill="#000067"/>
<rect x="427.38" y="484.30" width="7.35" height="7.3" fill="#00006d"/>
<rect x="434.60" y="484.30" width="7.35" height="7.3" fill="#000072"/>
<rect x="441.82" y="484.30" width="7.35" height="7.3" fill="#000063"/>
<rect x="449.04" y="484.30" width="7.35" height="7.3" fill="#00008c"/>
<rect x="456.26" y="484.30" width="7.35" height="7.3" fill="#000000"/>
<rect x="463.48" y="484.30" width="7.35" height="7.3" fill="#000000"/>
<rect x="470.70" y="484.30" width="7.35" height="7.3" fill="#000000"/>
<rect x="326.30" y="491.50" width="7.35" height="7.3" fill="#8c00ff"/>
<rect x="333.52" y="491.50" width="7.35" height="7.3" fill="#7100ea"/>
<rect x="340.74" y="491.50" width="7.35" height="7.3" fill="#6000de"/>
<rect x="347.96" y="491.50" width="7.35" height="7.3" fill="#5000d2"/>
<rect x="355.18" y="491.50" width="7.35" height="7.3" fill="#3f00c5"/>
<rect x="362.40" y="491.50" width="7.35" height="7.3" fill="#2f00b9"/>
<rect x="369.62" y="491.50" width="7.35" height="7.3" fill="#1e00ac"/>
<rect x="376.84" y="491.50" width="7.35" height="7.3" fill="#0d00a0"/>
<rect x="384.06" y="491.50" width="7.35" height="7.3" fill="#000094"/>
<rect x="391.28" y="491.50" width="7.35" height="7.3" fill="#000087"/>
<rect x="398.50" y="491.50" width="7.35" height="7.3" fill="#000079"/>
<rect x="405.72" y="491.50" width="7.35" height="7.3" fill="#00006c"/>
<rect x="412.94" y="491.50" width="7.35" height="7.3" fill="#00006b"/>
<rect x="420.16" y="491.50" width="7.35" height="7.3" fill="#00005f"/>
<rect x="427.38" y="491.50" width="7.35" height="7.3" fill="#00005b"/>
<rect x="434.60" y="491.50" width="7.35" height="7.3" fill="#00008c"/>
<rect x="441.82" y="491.50" width="7.35" height="7.3" fill="#000000"/>
<rect x="449.04" y="491.50" width="7.35" height="7.3" fill="#000000"/>
<rect x="456.26" y="491.50" width="7.35" height="7.3" fill="#000000"/>
<rect x="463.48" y="491.50" width="7.35" height="7.3" fill="#000000"/>
<rect x="470.70" y="491.50" width="7.35" height="7.3" fill="#000000"/>
<rect x="326.30" y="498.70" width="7.35" height="7.3" fill="#8c00ff"/>
<rect x="333.52" y="498.70" width="7.35" height="7.3" fill="#7100ea"/>
<rect x="340.74" y="498.70" width="7.35" height="7.3" fill="#6000de"/>
<rect x="347.96" y="498.70" width="7.35" height="7.3" fill="#5000d2"/>
<rect x="355.18" y="498.70" width="7.35" height="7.3" fill="#3f00c5"/>
<rect x="362.40" y="498.70" width="7.35" height="7.3" fill="#2f00b9"/>
<rect x="369.62" y="498.70" width="7.35" height="7.3" fill="#1e00ac"/>
<rect x="376.84" y="498.70" width="7.35" height="7.3" fill="#0d00a0"/>
<rect x="384.06" y="498.70" width="7.35" height="7.3" fill="#000094"/>
<rect x="391.28" y="498.70" width="7.35" height="7.3" fill="#000087"/>
<rect x="398.50" y="498.70" width="7.35" height="7.3" fill="#000079"/>
<rect x="405.72" y="498.70" width="7.35" height="7.3" fill="#00006c"/>
<rect x="412.94" y="498.70" width="7.35" height="7.3" fill="#000062"/>
<rect x="420.16" y="498.70" width="7.35" height="7.3" fill="#00003c"/>
<rect x="427.38" y="498.70" width="7.35" height="7.3" fill="#000000"/>
<rect x="434.60" y="498.70" width="7.35" height="7.3" fill="#000000"/>
<rect x="441.82" y="498.70" width="7.35" height="7.3" fill="#000000"/>
<rect x="449.04" y="498.70" width="7.35" height="7.3" fill="#000000"/>
<rect x="456.26" y="498.70" width="7.35" height="7.3" fill="#000000"/>
<rect x="463.48" y="498.70" width="7.35" height="7.3" fill="#000000"/>
<rect x="470.70" y="498.70" width="7.35" height="7.3" fill="#000000"/>
<rect x="326.30" y="505.90" width="7.35" height="7.3" fill="#8c00ff"/>
<rect x="333.52" y="505.90" width="7.35" height="7.3" fill="#7100ea"/>
<rect x="340.74" y="505.90" width="7.35" height="7.3" fill="#6000de"/>
<rect x="347.96" y="505.90" width="7.35" height="7.3" fill="#5000d2"/>
<rect x="355.18" y="505.90" width="7.35" height="7.3" fill="#3f00c5"/>
<rect x="362.40" y="505.90" width="7.35" height="7.3" fill="#2f00b9"/>
<rect x="369.62" y="505.90" width="7.35" height="7.3" fill="#1e00ac"/>
<rect x="376.84" y="505.90" width="7.35" height="7.3" fill="#0d00a0"/>
<rect x="384.06" y="505.90" width="7.35" height="7.3" fill="#000094"/>
<rect x="391.28" y="505.90" width="7.35" height="7.3" fill="#000087"/>
<rect x="398.50" y="505.90" width="7.35" height="7.3" fill="#1e00ac"/>
<rect x="405.72" y="505.90" width="7.35" height="7.3" fill="#000000"/>
<rect x="412.94" y="505.90" width="7.35" height="7.3" fill="#000000"/>
<rect x="420.16" y="505.90" width="7.35" height="7.3" fill="#000000"/>
<rect x="427.38" y="505.90" width="7.35" height="7.3" fill="#000000"/>
<rect x="434.60" y="505.90" width="7.35" height="7.3" fill="#000000"/>
<rect x="441.82" y="505.90" width="7.35" height="7.3" fill="#000000"/>
<rect x="449.04" y="505.90" width="7.35" height="7.3" fill="#000000"/>
<rect x="456.26" y="505.90" width="7.35" height="7.3" fill="#000000"/>
<rect x="463.48" y="505.90" width="7.35" height="7.3" fill="#000000"/>
<rect x="470.70" y="505.90" width="7.35" height="7.3" fill="#000000"/>
<rect x="326.30" y="513.10" width="7.35" height="7.3" fill="#8c00ff"/>
<rect x="333.52" y="513.10" width="7.35" height="7.3" fill="#7100ea"/>
<rect x="340.74" y="513.10" width="7.35" height="7.3" fill="#6000de"/>
<rect x="347.96" y="513.10" width="7.35" height="7.3" fill="#5000d2"/>
<rect x="355.18" y="513.10" width="7.35" height="7.3" fill="#3f00c5"/>
<rect x="362.40" y="513.10" width="7.35" height="7.3" fill="#2f00b9"/>
<rect x="369.62" y="513.10" width="7.35" height="7.3" fill="#1e00ac"/>
<rect x="376.84" y="513.10" width="7.35" height="7.3" fill="#0d00a0"/>
<rect x="384.06" y="513.10" width="7.35" height="7.3" fill="#3200bc"/>
<rect x="391.28" y="513.10" width="7.35" height="7.3" fill="#000000"/>
<rect x="398.50" y="513.10" width="7.35" height="7.3" fill="#000000"/>
<rect x="405.72" y="513.10" width="7.35" height="7.3" fill="#000000"/>
<rect x="412.94" y="513.10" width="7.35" height="7.3" fill="#000000"/>
<rect x="420.16" y="513.10" width="7.35" height="7.3" fill="#000000"/>
<rect x="427.38" y="513.10" width="7.35" height="7.3" fill="#000000"/>
<rect x="434.60" y="513.10" width="7.35" height="7.3" fill="#000000"/>
<rect x="441.82" y="513.10" width="7.35" height="7.3" fill="#000000"/>
<rect x="449.04" y="513.10" width="7.35" height="7.3" fill="#000000"/>
<rect x="456.26" y="513.10" width="7.35" height="7.3" fill="#000000"/>
<rect x="463.48" y="513.10" width="7.35" height="7.3" fill="#000000"/>
<rect x="470.70" y="513.10" width="7.35" height="7.3" fill="#000000"/>
<rect x="326.30" y="520.30" width="7.35" height="7.3" fill="#8c00ff"/>
<rect x="333.52" y="520.30" width="7.35" height="7.3" fill="#7100ea"/>
<rect x="340.74" y="520.30" width="7.35" height="7.3" fill="#6000de"/>
<rect x="347.96" y="520.30" width="7.35" height="7.3" fill="#5000d2"/>
<rect x="355.18" y="520.30" width="7.35" height="7.3" fill="#3f00c5"/>
<rect x="362.40" y="520.30" width="7.35" height="7.3" fill="#2f00b9"/>
<rect x="369.62" y="520.30" width="7.35" height="7.3" fill="#3800c0"/>
<rect x="376.84" y="520.30" width="7.35" height="7.3" fill="#000000"/>
<rect x="384.06" y="520.30" width="7.35" height="7.3" fill="#000000"/>
<rect x="391.28" y="520.30" width="7.35" height="7.3" fill="#000000"/>
<rect x="398.50" y="520.30" width="7.35" height="7.3" fill="#000000"/>
<rect x="405.72" y="520.30" width="7.35" height="7.3" fill="#000000"/>
<rect x="412.94" y="520.30" width="7.35" height="7.3" fill="#000000"/>
<rect x="420.16" y="520.30" width="7.35" height="7.3" fill="#000000"/>
<rect x="427.38" y="520.30" width="7.35" height="7.3" fill="#000000"/>
<rect x="434.60" y="520.30" width="7.35" height="7.3" fill="#000000"/>
<rect x="441.82" y="520.30" width="7.35" height="7.3" fill="#000000"/>
<rect x="449.04" y="520.30" width="7.35" height="7.3" fill="#000000"/>
<rect x="456.26" y="520.30" width="7.35" height="7.3" fill="#000000"/>
<rect x="463.48" y="520.30" width="7.35" height="7.3" fill="#000000"/>
<rect x="470.70" y="520.30" width="7.35" height="7.3" fill="#000000"/>
<rect x="326.30" y="527.50" width="7.35" height="7.3" fill="#8c00ff"/>
<rect x="333.52" y="527.50" width="7.35" height="7.3" fill="#7100ea"/>
<rect x="340.74" y="527.50" width="7.35" height="7.3" fill="#6000de"/>
<rect x="347.96" y="527.50" width="7.35" height="7.3" fill="#5000d2"/>
<rect x="355.18" y="527.50" width="7.35" height="7.3" fill="#4e00d1"/>
<rect x="362.40" y="527.50" width="7.35" height="7.3" fill="#000000"/>
<rect x="369.62" y="527.50" width="7.35" height="7.3" fill="#000000"/>
<rect x="376.84" y="527.50" width="7.35" height="7.3" fill="#000000"/>
<rect x="384.06" y="527.50" width="7.35" height="7.3" fill="#000000"/>
<rect x="391.28" y="527.50" width="7.35" height="7.3" fill="#000000"/>
<rect x="398.50" y="527.50" width="7.35" height="7.3" fill="#000000"/>
<rect x="405.72" y="527.50" width="7.35" height="7.3" fill="#000000"/>
<rect x="412.94" y="527.50" width="7.35" height="7.3" fill="#000000"/>
<rect x="420.16" y="527.50" width="7.35" height="7.3" fill="#000000"/>
<rect x="427.38" y="527.50" width="7.35" height="7.3" fill="#000000"/>
<rect x="434.60" y="527.50" width="7.35" height="7.3" fill="#000000"/>
<rect x="441.82" y="527.50" width="7.35" height="7.3" fill="#000000"/>
<rect x="449.04" y="527.50" width="7.35" height="7.3" fill="#000000"/>
<rect x="456.26" y="527.50" width="7.35" height="7.3" fill="#000000"/>
<rect x="463.48" y="527.50" width="7.35" height="7.3" fill="#000000"/>
<rect x="470.70" y="527.50" width="7.35" height="7.3" fill="#000000"/>
<rect x="326.30" y="534.70" width="7.35" height="7.3" fill="#8c00ff"/>
<rect x="333.52" y="534.70" width="7.35" height="7.3" fill="#7100ea"/>
<rect x="340.74" y="534.70" width="7.35" height="7.3" fill="#6000de"/>
<rect x="347.96" y="534.70" width="7.35" height="7.3" fill="#000096"/>
<rect x="355.18" y="534.70" width="7.35" height="7.3" fill="#000000"/>
<rect x="362.40" y="534.70" width="7.35" height="7.3" fill="#000000"/>
<rect x="369.62" y="534.70" width="7.35" height="7.3" fill="#000000"/>
<rect x="376.84" y="534.70" width="7.35" height="7.3" fill="#000000"/>
<rect x="384.06" y="534.70" width="7.35" height="7.3" fill="#000000"/>
<rect x="391.28" y="534.70" width="7.35" height="7.3" fill="#000000"/>
<rect x="398.50" y="534.70" width="7.35" height="7.3" fill="#000000"/>
<rect x="405.72" y="534.70" width="7.35" height="7.3" fill="#000000"/>
<rect x="412.94" y="534.70" width="7.35" height="7.3" fill="#000000"/>
<rect x="420.16" y="534.70" width="7.35" height="7.3" fill="#000000"/>
<rect x="427.38" y="534.70" width="7.35" height="7.3" fill="#000000"/>
<rect x="434.60" y="534.70" width="7.35" height="7.3" fill="#000000"/>
<rect x="441.82" y="534.70" width="7.35" height="7.3" fill="#000000"/>
<rect x="449.04" y="534.70" width="7.35" height="7.3" fill="#000000"/>
<rect x="456.26" y="534.70" width="7.35" height="7.3" fill="#000000"/>
<rect x="463.48" y="534.70" width="7.35" height="7.3" fill="#000000"/>
<rect x="470.70" y="534.70" width="7.35" height="7.3" fill="#000000"/>
<rect x="326.30" y="541.90" width="7.35" height="7.3" fill="#8c00ff"/>
<rect x="333.52" y="541.90" width="7.35" height="7.3" fill="#7100ea"/>
<rect x="340.74" y="541.90" width="7.35" height="7.3" fill="#000078"/>
<rect x="347.96" y="541.90" width="7.35" height="7.3" fill="#000000"/>
<rect x="355.18" y="541.90" width="7.35" height="7.3" fill="#000000"/>
<rect x="362.40" y="541.90" width="7.35" height="7.3" fill="#000000"/>
<rect x="369.62" y="541.90" width="7.35" height="7.3" fill="#000000"/>
<rect x="376.84" y="541.90" width="7.35" height="7.3" fill="#000000"/>
<rect x="384.06" y="541.90" width="7.35" height="7.3" fill="#000000"/>
<rect x="391.28" y="541.90" width="7.35" height="7.3" fill="#000000"/>
<rect x="398.50" y="541.90" width="7.35" height="7.3" fill="#000000"/>
<rect x="405.72" y="541.90" width="7.35" height="7.3" fill="#000000"/>
<rect x="412.94" y="541.90" width="7.35" height="7.3" fill="#000000"/>
<rect x="420.16" y="541.90" width="7.35" height="7.3" fill="#000000"/>
<rect x="427.38" y="541.90" width="7.35" height="7.3" fill="#000000"/>
<rect x="434.60" y="541.90" width="7.35" height="7.3" fill="#000000"/>
<rect x="441.82" y="541.90" width="7.35" height="7.3" fill="#000000"/>
<rect x="449.04" y="541.90" width="7.35" height="7.3" fill="#000000"/>
<rect x="456.26" y="541.90" width="7.35" height="7.3" fill="#000000"/>
<rect x="463.48" y="541.90" width="7.35" height="7.3" fill="#000000"/>
<rect x="470.70" y="541.90" width="7.35" height="7.3" fill="#000000"/>
<rect x="326.30" y="549.10" width="7.35" height="7.3" fill="#8c00ff"/>
<rect x="333.52" y="549.10" width="7.35" height="7.3" fill="#3200bc"/>
<rect x="340.74" y="549.10" width="7.35" height="7.3" fill="#000000"/>
<rect x="347.96" y="549.10" width="7.35" height="7.3" fill="#000000"/>
<rect x="355.18" y="549.10" width="7.35" height="7.3" fill="#000000"/>
<rect x="362.40" y="549.10" width="7.35" height="7.3" fill="#000000"/>
<rect x="369.62" y="549.10" width="7.35" height="7.3" fill="#000000"/>
<rect x="376.84" y="549.10" width="7.35" height="7.3" fill="#000000"/>
<rect x="384.06" y="549.10" width="7.35" height="7.3" fill="#000000"/>
<rect x="391.28" y="549.10" width="7.35" height="7.3" fill="#000000"/>
<rect x="398.50" y="549.10" width="7.35" height="7.3" fill="#000000"/>
<rect x="405.72" y="549.10" width="7.35" height="7.3" fill="#000000"/>
<rect x="412.94" y="549.10" width="7.35" height="7.3" fill="#000000"/>
<rect x="420.16" y="549.10" width="7.35" height="7.3" fill="#000000"/>
<rect x="427.38" y="549.10" width="7.35" height="7.3" fill="#000000"/>
<rect x="434.60" y="549.10" width="7.35" height="7.3" fill="#000000"/>
<rect x="441.82" y="549.10" width="7.35" height="7.3" fill="#000000"/>
<rect x="449.04" y="549.10" width="7.35" height="7.3" fill="#000000"/>
<rect x="456.26" y="549.10" width="7.35" height="7.3" fill="#000000"/>
<rect x="463.48" y="549.10" width="7.35" height="7.3" fill="#000000"/>
<rect x="470.70" y="549.10" width="7.35" height="7.3" fill="#000000"/>
<rect x="326.30" y="556.30" width="7.35" height="7.3" fill="#8c00ff"/>
<rect x="333.52" y="556.30" width="7.35" height="7.3" fill="#000000"/>
<rect x="340.74" y="556.30" width="7.35" height="7.3" fill="#000000"/>
<rect x="347.96" y="556.30" width="7.35" height="7.3" fill="#000000"/>
<rect x="355.18" y="556.30" width="7.35" height="7.3" fill="#000000"/>
<rect x="362.40" y="556.30" width="7.35" height="7.3" fill="#000000"/>
<rect x="369.62" y="556.30" width="7.35" height="7.3" fill="#000000"/>
<rect x="376.84" y="556.30" width="7.35" height="7.3" fill="#000000"/>
<rect x="384.06" y="556.30" width="7.35" height="7.3" fill="#000000"/>
<rect x="391.28" y="556.30" width="7.35" height="7.3" fill="#000000"/>
<rect x="398.50" y="556.30" width="7.35" height="7.3" fill="#000000"/>
<rect x="405.72" y="556.30" width="7.35" height="7.3" fill="#000000"/>
<rect x="412.94" y="556.30" width="7.35" height="7.3" fill="#000000"/>
<rect x="420.16" y="556.30" width="7.35" height="7.3" fill="#000000"/>
<rect x="427.38" y="556.30" width="7.35" height="7.3" fill="#000000"/>
<rect x="434.60" y="556.30" width="7.35" height="7.3" fill="#000000"/>
<rect x="441.82" y="556.30" width="7.35" height="7.3" fill="#000000"/>
<rect x="449.04" y="556.30" width="7.35" height="7.3" fill="#000000"/>
<rect x="456.26" y="556.30" width="7.35" height="7.3" fill="#000000"/>
<rect x="463.48" y="556.30" width="7.35" height="7.3" fill="#000000"/>
<rect x="470.70" y="556.30" width="7.35" height="7.3" fill="#000000"/>
</g>
<rect x="326.3" y="268.3" width="151.62" height="295.2" fill="none" stroke="#000" stroke-width="0.9"/>
<line x1="322.7" y1="271.90" x2="326.3" y2="271.90" stroke="#000" stroke-width="0.9"/>
<text x="317.8" y="276.3" font-size="11" fill="#262626" textLength="6.35" lengthAdjust="spacingAndGlyphs" text-anchor="end" stroke="#262626" stroke-width="0.2">0</text>
<line x1="322.7" y1="307.90" x2="326.3" y2="307.90" stroke="#000" stroke-width="0.9"/>
<text x="317.8" y="312.3" font-size="11" fill="#262626" textLength="6.35" lengthAdjust="spacingAndGlyphs" text-anchor="end" stroke="#262626" stroke-width="0.2">5</text>
<line x1="322.7" y1="343.90" x2="326.3" y2="343.90" stroke="#000" stroke-width="0.9"/>
<text x="317.8" y="348.3" font-size="11" fill="#262626" textLength="12.7" lengthAdjust="spacingAndGlyphs" text-anchor="end" stroke="#262626" stroke-width="0.2">10</text>
<line x1="322.7" y1="379.90" x2="326.3" y2="379.90" stroke="#000" stroke-width="0.9"/>
<text x="317.8" y="384.3" font-size="11" fill="#262626" textLength="12.7" lengthAdjust="spacingAndGlyphs" text-anchor="end" stroke="#262626" stroke-width="0.2">15</text>
<line x1="322.7" y1="415.90" x2="326.3" y2="415.90" stroke="#000" stroke-width="0.9"/>
<text x="317.8" y="420.29999999999995" font-size="11" fill="#262626" textLength="12.7" lengthAdjust="spacingAndGlyphs" text-anchor="end" stroke="#262626" stroke-width="0.2">20</text>
<line x1="322.7" y1="451.90" x2="326.3" y2="451.90" stroke="#000" stroke-width="0.9"/>
<text x="317.8" y="456.29999999999995" font-size="11" fill="#262626" textLength="12.7" lengthAdjust="spacingAndGlyphs" text-anchor="end" stroke="#262626" stroke-width="0.2">25</text>
<line x1="322.7" y1="487.90" x2="326.3" y2="487.90" stroke="#000" stroke-width="0.9"/>
<text x="317.8" y="492.29999999999995" font-size="11" fill="#262626" textLength="12.7" lengthAdjust="spacingAndGlyphs" text-anchor="end" stroke="#262626" stroke-width="0.2">30</text>
<line x1="322.7" y1="523.90" x2="326.3" y2="523.90" stroke="#000" stroke-width="0.9"/>
<text x="317.8" y="528.3" font-size="11" fill="#262626" textLength="12.7" lengthAdjust="spacingAndGlyphs" text-anchor="end" stroke="#262626" stroke-width="0.2">35</text>
<line x1="322.7" y1="559.90" x2="326.3" y2="559.90" stroke="#000" stroke-width="0.9"/>
<text x="317.8" y="564.3000000000001" font-size="11" fill="#262626" textLength="12.7" lengthAdjust="spacingAndGlyphs" text-anchor="end" stroke="#262626" stroke-width="0.2">40</text>
<line x1="329.91" y1="563.5" x2="329.91" y2="567.1" stroke="#000" stroke-width="0.9"/>
<text x="329.91" y="580.0" font-size="11" fill="#262626" textLength="6.35" lengthAdjust="spacingAndGlyphs" text-anchor="middle" stroke="#262626" stroke-width="0.2">0</text>
<line x1="402.11" y1="563.5" x2="402.11" y2="567.1" stroke="#000" stroke-width="0.9"/>
<text x="402.11" y="580.0" font-size="11" fill="#262626" textLength="12.7" lengthAdjust="spacingAndGlyphs" text-anchor="middle" stroke="#262626" stroke-width="0.2">10</text>
<line x1="474.31" y1="563.5" x2="474.31" y2="567.1" stroke="#000" stroke-width="0.9"/>
<text x="474.31" y="580.0" font-size="11" fill="#262626" textLength="12.7" lengthAdjust="spacingAndGlyphs" text-anchor="middle" stroke="#262626" stroke-width="0.2">20</text>
<text x="401.1" y="260.8" font-size="13.5" fill="#262626" textLength="74.2" lengthAdjust="spacingAndGlyphs" text-anchor="middle" stroke="#262626" stroke-width="0.2">Ion Density</text>
<rect x="986.6" y="4.2" width="7" height="1.2" fill="#3a3935" />
<rect x="1002.9" y="1.6" width="6.6" height="6.2" fill="none" stroke="#3a3935" stroke-width="1.1"/>
<path d="M1018.8 1.5 L1024 6.7 M1024 1.5 L1018.8 6.7" stroke="#3a3935" stroke-width="1.1"/>
<rect x="8.5" y="30.6" width="6" height="1.1" fill="#1a1a1a" />
<rect x="39" y="30.6" width="6.5" height="1.1" fill="#1a1a1a" />
<rect x="72" y="30.6" width="6.5" height="1.1" fill="#1a1a1a" />
<rect x="143.5" y="30.6" width="6" height="1.1" fill="#1a1a1a" />
<rect x="168.5" y="30.6" width="7" height="1.1" fill="#1a1a1a" />
<rect x="202" y="30.6" width="7" height="1.1" fill="#1a1a1a" />
<rect x="257.5" y="30.6" width="6.5" height="1.1" fill="#1a1a1a" />
<rect x="310.5" y="30.6" width="6.5" height="1.1" fill="#1a1a1a" />
<rect x="366.5" y="30.6" width="6.5" height="1.1" fill="#1a1a1a" />
<rect x="407" y="30.6" width="7" height="1.1" fill="#1a1a1a" />
<rect x="445.5" y="30.6" width="7" height="1.1" fill="#1a1a1a" />
<path d="M4.6 100.2 V92.6 H8.2 L9.4 94 H14.1 V100.2 Z" fill="none" stroke="#555" stroke-width="1.2" stroke-linejoin="round"/>
<path d="M12.6 100.4 H17 L14.8 102.8 Z" fill="#333"/>
<path d="M121.9 89.9 L128.9 96.7 M128.9 89.9 L121.9 96.7" stroke="#747474" stroke-width="2.8" stroke-linecap="round"/>
<rect x="523.5" y="69" width="8" height="8.4" rx="1.5" fill="none" stroke="#9b9b9b" stroke-width="1"/>
<path d="M525.5 74.8 L529 71.3 M526.2 71.5 H529 V74.2" fill="none" stroke="#9b9b9b" stroke-width="0.9"/>
<rect x="534.5" y="69" width="8" height="8.4" rx="1.5" fill="none" stroke="#9b9b9b" stroke-width="1"/>
<path d="M536.4 71.1 L540.6 75.3 M540.6 71.1 L536.4 75.3" stroke="#7b7b7b" stroke-width="1.1"/>
<path d="M539.50 95.85 L539.60 96.78 L538.19 97.46 L538.00 98.11 L538.80 99.45 L538.21 100.18 L536.73 99.67 L536.13 99.99 L535.75 101.50 L534.82 101.60 L534.14 100.19 L533.49 100.00 L532.15 100.80 L531.42 100.21 L531.93 98.73 L531.61 98.13 L530.10 97.75 L530.00 96.82 L531.41 96.14 L531.60 95.49 L530.80 94.15 L531.39 93.42 L532.87 93.93 L533.47 93.61 L533.85 92.10 L534.78 92.00 L535.46 93.41 L536.11 93.60 L537.45 92.80 L538.18 93.39 L537.67 94.87 L537.99 95.47 Z" fill="#333"/>
<circle cx="534.8" cy="96.8" r="1.58" fill="#f0eeeb"/>
<path d="M539.4 100.3 H543.4 L541.4 102.5 Z" fill="#333"/>
<path d="M553.6 100.2 V92.6 H557.2 L558.4 94 H563.1 V100.2 Z" fill="none" stroke="#555" stroke-width="1.2" stroke-linejoin="round"/>
<path d="M561.6 100.4 H566 L563.8 102.8 Z" fill="#333"/>
<path d="M568 83 L571.5 88.5 L568.5 94 L571.5 99.5 L568 105" fill="none" stroke="#cfccc6" stroke-width="1"/>
<path d="M666.9000000000001 91.8 L674.3 97.3 M674.3 91.8 L666.9000000000001 97.3" stroke="#747474" stroke-width="2.8" stroke-linecap="round"/>
<path d="M795.5 91.8 L801.8 97.3 M801.8 91.8 L795.5 97.3" stroke="#747474" stroke-width="2.8" stroke-linecap="round"/>
<path d="M931.2 91.8 L937.8 97.3 M937.8 91.8 L931.2 97.3" stroke="#747474" stroke-width="2.8" stroke-linecap="round"/>
<rect x="952.5" y="82" width="12.5" height="23" rx="2" fill="#f6f5f3" stroke="#c8c6c1" stroke-width="1"/>
<rect x="965" y="82" width="12.5" height="23" rx="2" fill="#f3f2f0" stroke="#d6d4cf" stroke-width="1"/>
<path d="M960.5 89.8 V96.6 L957 93.2 Z" fill="#333"/>
<path d="M969.8 89.8 V96.6 L973.3 93.2 Z" fill="#b5b5b5"/>
<rect x="982.5" y="92" width="9.5" height="9" fill="#9a9a9a" />
<path d="M999.5 101.3 L1004.8 93.3 L1011.8 93.3 L1006.5 101.3 Z" fill="#fff" stroke="#333" stroke-width="1.3" stroke-linejoin="round"/>
<path d="M1003.2 95.6 L1004.8 93.3 L1011.8 93.3 L1010.2 95.6 Z" fill="#333"/>
<path d="M1026.70 95.85 L1026.80 96.78 L1025.39 97.46 L1025.20 98.11 L1026.00 99.45 L1025.41 100.18 L1023.93 99.67 L1023.33 99.99 L1022.95 101.50 L1022.02 101.60 L1021.34 100.19 L1020.69 100.00 L1019.35 100.80 L1018.62 100.21 L1019.13 98.73 L1018.81 98.13 L1017.30 97.75 L1017.20 96.82 L1018.61 96.14 L1018.80 95.49 L1018.00 94.15 L1018.59 93.42 L1020.07 93.93 L1020.67 93.61 L1021.05 92.10 L1021.98 92.00 L1022.66 93.41 L1023.31 93.60 L1024.65 92.80 L1025.38 93.39 L1024.87 94.87 L1025.19 95.47 Z" fill="#333"/>
<circle cx="1022" cy="96.8" r="1.58" fill="#f0eeeb"/>
<rect x="1012.5" y="69" width="8" height="8.4" rx="1.5" fill="none" stroke="#9b9b9b" stroke-width="1"/>
<path d="M1014.5 74.8 L1018 71.3 M1015.2 71.5 H1018 V74.2" fill="none" stroke="#9b9b9b" stroke-width="0.9"/>
<path d="M534.8 114.6 H541.2 L538 111.2 Z" fill="#3a3a3a"/>
<path d="M534.6 660.5 H541.4 L538 664.4 Z" fill="#3a3a3a"/>
<rect x="532.5" y="117.3" width="11" height="0.9" fill="#d9d7d2" />
<rect x="532.5" y="656" width="11" height="0.9" fill="#d9d7d2" />
<rect x="35" y="195.6" width="0.9" height="0.9" fill="#b9b7b2" />
<rect x="37.6" y="195.6" width="0.9" height="0.9" fill="#b9b7b2" />
<rect x="35" y="197.9" width="0.9" height="0.9" fill="#b9b7b2" />
<rect x="37.6" y="197.9" width="0.9" height="0.9" fill="#b9b7b2" />
<rect x="35" y="200.20000000000002" width="0.9" height="0.9" fill="#b9b7b2" />
<rect x="37.6" y="200.20000000000002" width="0.9" height="0.9" fill="#b9b7b2" />
<rect x="35" y="202.50000000000003" width="0.9" height="0.9" fill="#b9b7b2" />
<rect x="37.6" y="202.50000000000003" width="0.9" height="0.9" fill="#b9b7b2" />
<rect x="35" y="204.80000000000004" width="0.9" height="0.9" fill="#b9b7b2" />
<rect x="37.6" y="204.80000000000004" width="0.9" height="0.9" fill="#b9b7b2" />
<rect x="35" y="207.10000000000005" width="0.9" height="0.9" fill="#b9b7b2" />
<rect x="37.6" y="207.10000000000005" width="0.9" height="0.9" fill="#b9b7b2" />
<path d="M46.3 203.6 L54.2 196.9 L62 203.6" fill="none" stroke="#111" stroke-width="1.9" stroke-linejoin="miter"/>
<path d="M48.8 203.2 L54.2 198.7 L59.6 203.2 V209.7 H56.2 V205.7 H52.2 V209.7 H48.8 Z" fill="#111"/>
<rect x="58" y="197.6" width="2.3" height="4.2" fill="#111" />
<path d="M87 202.5 H76 M80.6 197 L75.1 202.5 L80.6 208" fill="none" stroke="#6e6e6e" stroke-width="3.1" stroke-linecap="round" stroke-linejoin="round"/>
<path d="M100.7 202.5 H111.7 M107.1 197 L112.6 202.5 L107.1 208" fill="none" stroke="#6e6e6e" stroke-width="3.1" stroke-linecap="round" stroke-linejoin="round"/>
<rect x="123" y="192" width="1" height="21" fill="#d3d1cc" />
<path d="M139.1 195.5 V209.3 M132.2 202.4 H146" stroke="#111" stroke-width="2.1"/>
<path d="M139.1 193.3 L142.6 197.2 H135.6 Z M139.1 211.5 L142.6 207.6 H135.6 Z M130.1 202.4 L134 198.9 V205.9 Z M148.1 202.4 L144.2 198.9 V205.9 Z" fill="#111" stroke="#111" stroke-width="0.6" stroke-linejoin="round"/>
<circle cx="163.6" cy="201.1" r="5.3" fill="none" stroke="#111" stroke-width="2.3"/>
<path d="M167.5 205 L172.6 210.1" stroke="#111" stroke-width="2.6" stroke-linecap="round"/>
<rect x="184.2" y="196.9" width="15.6" height="1.4" fill="#222" />
<rect x="186.79999999999998" y="195.7" width="3.6" height="3.8" rx="0.8" fill="#111"/>
<rect x="184.2" y="202.3" width="15.6" height="1.4" fill="#222" />
<rect x="193.0" y="201.1" width="3.6" height="3.8" rx="0.8" fill="#111"/>
<rect x="184.2" y="207.8" width="15.6" height="1.4" fill="#222" />
<rect x="188.39999999999998" y="206.6" width="3.6" height="3.8" rx="0.8" fill="#111"/>
<path d="M208.8 194.8 V209.6 H227.6" fill="none" stroke="#333" stroke-width="1.2"/>
<path d="M211.3 206.6 L216.5 200.9 L219.8 204.2 L225 198.8" fill="none" stroke="#111" stroke-width="2.1" stroke-linejoin="round"/>
<path d="M222.4 196.6 H227.2 V201.4 Z" fill="#111"/>
<rect x="234.2" y="192" width="1" height="21" fill="#d3d1cc" />
<path d="M243.1 195.7 H254.2 L257.4 198.9 V209.3 H243.1 Z" fill="none" stroke="#111" stroke-width="1.5" stroke-linejoin="round"/>
<rect x="246" y="195.7" width="7.6" height="4.6" fill="none" stroke="#111" stroke-width="1.4"/>
<rect x="250.3" y="196.6" width="1.9" height="2.9" fill="#111" />
<rect x="245.6" y="203.6" width="9.4" height="5.7" fill="none" stroke="#111" stroke-width="1.4"/>
<path d="M6.7 683.7 L12.100000000000001 688.0999999999999 M12.100000000000001 683.7 L6.7 688.0999999999999" stroke="#333" stroke-width="2.3" stroke-linecap="round"/>
<path d="M333.5 682.6 H341 V689.3 H333.5 L330.6 686 Z" fill="none" stroke="#8a8a8a" stroke-width="1.2" stroke-linejoin="round"/>
<path d="M335.3 684.3 L338.8 687.6 M338.8 684.3 L335.3 687.6" stroke="#8a8a8a" stroke-width="1.2"/>
<path d="M352.8 686 H358.6 L355.7 689 Z" fill="#555"/>
<circle cx="414.7" cy="685.8" r="4.8" fill="#2e2e2e"/><path d="M414.7 689 V683.2 M412.3 685.4 L414.7 683 L417.1 685.4" fill="none" stroke="#fff" stroke-width="1.4"/>
<circle cx="438.7" cy="685.8" r="4.8" fill="#2e2e2e"/><path d="M438.7 682.6 V688.4 M436.3 686.2 L438.7 688.6 L441.1 686.2" fill="none" stroke="#fff" stroke-width="1.4"/>
<path d="M467.70 684.53 L467.80 685.48 L466.36 686.18 L466.16 686.84 L466.98 688.21 L466.38 688.95 L464.87 688.43 L464.26 688.75 L463.87 690.30 L462.92 690.40 L462.22 688.96 L461.56 688.76 L460.19 689.58 L459.45 688.98 L459.97 687.47 L459.65 686.86 L458.10 686.47 L458.00 685.52 L459.44 684.82 L459.64 684.16 L458.82 682.79 L459.42 682.05 L460.93 682.57 L461.54 682.25 L461.93 680.70 L462.88 680.60 L463.58 682.04 L464.24 682.24 L465.61 681.42 L466.35 682.02 L465.83 683.53 L466.15 684.14 Z" fill="#2e2e2e"/>
<circle cx="462.9" cy="685.5" r="1.62" fill="#f0eeeb"/>
<text x="480.6" y="688.6" font-size="10.5" fill="#2a78d8" font-weight="bold" textLength="7.4" lengthAdjust="spacingAndGlyphs" >A</text>
<text x="487.6" y="688.6" font-size="10.5" fill="#3ba33b" font-weight="bold" textLength="5.8" lengthAdjust="spacingAndGlyphs" >a</text>
<path d="M507 681.8 H505.6 V689.3 H507 M514.8 681.8 H516.3 V689.3 H514.8" fill="none" stroke="#eb9464" stroke-width="1.5"/>
<rect x="507.8" y="684.4" width="6.4" height="2.8" fill="#3a7be2" />
<path d="M530 681 H537.5 M530 683.6 H536 M530 686.2 H534 M530 688.8 H533" stroke="#777" stroke-width="1"/>
<path d="M534.2 688.6 L539.6 682.6 L541.6 684.4 L536.2 690.4 Z" fill="#4a8fe0"/>
<path d="M532.6 691 L534.2 688.6 L536.2 690.4 Z" fill="#f0c030"/>
<path d="M533 690.2 L535.2 686.8 L537.4 688.8 Z" fill="#f6d44a"/></svg></body></html>
